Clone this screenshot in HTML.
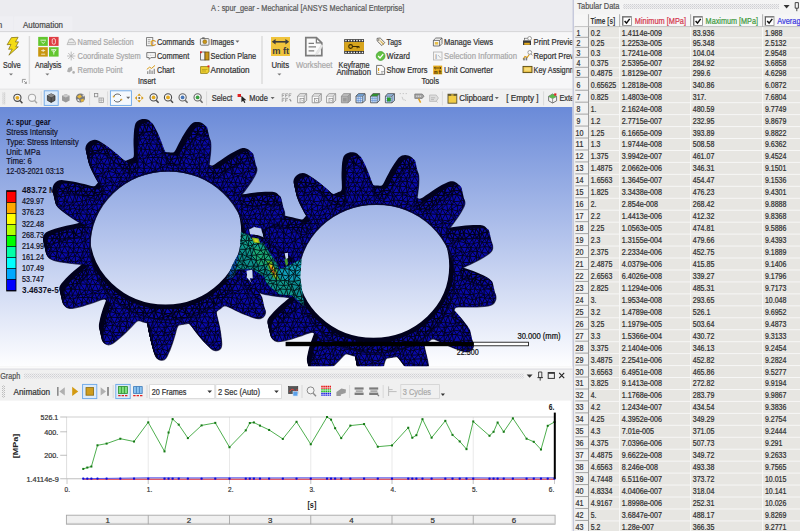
<!DOCTYPE html>
<html><head><meta charset="utf-8"><title>A : spur_gear - Mechanical</title>
<style>
html,body{margin:0;padding:0;background:#f0f0f0;overflow:hidden}
body{width:800px;height:531px;font-family:"Liberation Sans", sans-serif;}
svg{display:block;font-family:"Liberation Sans",sans-serif}
text{white-space:pre}
</style></head><body>
<svg width="800" height="531" viewBox="0 0 800 531">
<defs>
<pattern id="grip" width="2" height="2" patternUnits="userSpaceOnUse"><rect width="2" height="2" fill="#f0f0f0"/><rect width="1" height="1" fill="#d0d0d4"/><rect x="1" y="1" width="1" height="1" fill="#dcdce0"/></pattern>
<pattern id="grip2" width="2" height="2" patternUnits="userSpaceOnUse"><rect width="1" height="1" fill="#bdbdbd"/><rect x="1" y="1" width="1" height="1" fill="#d0d0d0"/></pattern>
<linearGradient id="sky" x1="0" y1="0" x2="0" y2="1"><stop offset="0" stop-color="#6a8ad8"/><stop offset="0.5" stop-color="#b3c3ec"/><stop offset="1" stop-color="#fefeff"/></linearGradient>
<clipPath id="vclip"><rect x="0" y="107.0" width="572.5" height="259.6"/></clipPath>
<pattern id="mesh" width="70" height="70" patternUnits="userSpaceOnUse"><rect width="70" height="70" fill="#0909a8"/><path d="M-6.1 -3.6L-0.6 -5.1M-6.1 -3.6L-0.5 -1.1M-6.1 -3.6L-5.7 0.3M-0.6 -5.1L3.1 -5.0M-0.6 -5.1L5.1 -1.3M-0.6 -5.1L-0.5 -1.1M3.1 -5.0L9.3 -4.7M3.1 -5.0L9.4 -0.4M3.1 -5.0L5.1 -1.3M9.3 -4.7L13.1 -4.7M9.3 -4.7L12.6 0.0M9.3 -4.7L9.4 -0.4M13.1 -4.7L17.1 -5.4M13.1 -4.7L17.2 -0.2M13.1 -4.7L12.6 0.0M17.1 -5.4L22.1 -5.0M17.1 -5.4L22.0 -1.3M17.1 -5.4L17.2 -0.2M22.1 -5.0L26.6 -6.1M22.1 -5.0L27.8 1.0M22.1 -5.0L22.0 -1.3M26.6 -6.1L32.1 -5.5M26.6 -6.1L31.5 -0.9M26.6 -6.1L27.8 1.0M32.1 -5.5L37.6 -4.6M32.1 -5.5L37.7 1.4M32.1 -5.5L31.5 -0.9M37.6 -4.6L42.8 -4.2M37.6 -4.6L42.2 -0.3M37.6 -4.6L37.7 1.4M42.8 -4.2L47.3 -3.5M42.8 -4.2L48.1 -1.4M42.8 -4.2L42.2 -0.3M47.3 -3.5L51.0 -5.2M47.3 -3.5L52.4 -0.6M47.3 -3.5L48.1 -1.4M51.0 -5.2L57.5 -5.7M51.0 -5.2L54.9 -1.2M51.0 -5.2L52.4 -0.6M57.5 -5.7L61.4 -4.2M57.5 -5.7L60.1 1.0M57.5 -5.7L54.9 -1.2M61.4 -4.2L63.9 -3.6M61.4 -4.2L64.3 0.3M61.4 -4.2L60.1 1.0M63.9 -3.6L69.4 -5.1M63.9 -3.6L69.5 -1.1M63.9 -3.6L64.3 0.3M69.4 -5.1L73.1 -5.0M69.4 -5.1L75.1 -1.3M69.4 -5.1L69.5 -1.1M-5.7 0.3L-0.5 -1.1M-5.7 0.3L-1.5 4.9M-5.7 0.3L-8.4 5.2M-0.5 -1.1L5.1 -1.3M-0.5 -1.1L2.8 4.3M-0.5 -1.1L-1.5 4.9M5.1 -1.3L9.4 -0.4M5.1 -1.3L7.1 3.3M5.1 -1.3L2.8 4.3M9.4 -0.4L12.6 0.0M9.4 -0.4L10.3 3.8M9.4 -0.4L7.1 3.3M12.6 0.0L17.2 -0.2M12.6 0.0L16.9 4.4M12.6 0.0L10.3 3.8M17.2 -0.2L22.0 -1.3M17.2 -0.2L20.4 4.9M17.2 -0.2L16.9 4.4M22.0 -1.3L27.8 1.0M22.0 -1.3L25.5 4.0M22.0 -1.3L20.4 4.9M27.8 1.0L31.5 -0.9M27.8 1.0L31.2 5.3M27.8 1.0L25.5 4.0M31.5 -0.9L37.7 1.4M31.5 -0.9L34.2 4.9M31.5 -0.9L31.2 5.3M37.7 1.4L42.2 -0.3M37.7 1.4L39.7 5.8M37.7 1.4L34.2 4.9M42.2 -0.3L48.1 -1.4M42.2 -0.3L45.0 4.0M42.2 -0.3L39.7 5.8M48.1 -1.4L52.4 -0.6M48.1 -1.4L50.5 3.5M48.1 -1.4L45.0 4.0M52.4 -0.6L54.9 -1.2M52.4 -0.6L53.4 5.5M52.4 -0.6L50.5 3.5M54.9 -1.2L60.1 1.0M54.9 -1.2L57.3 4.6M54.9 -1.2L53.4 5.5M60.1 1.0L64.3 0.3M60.1 1.0L61.6 5.2M60.1 1.0L57.3 4.6M64.3 0.3L69.5 -1.1M64.3 0.3L68.5 4.9M64.3 0.3L61.6 5.2M69.5 -1.1L75.1 -1.3M69.5 -1.1L72.8 4.3M69.5 -1.1L68.5 4.9M-1.5 4.9L2.8 4.3M-1.5 4.9L1.2 8.8M-1.5 4.9L-6.0 9.2M2.8 4.3L7.1 3.3M2.8 4.3L5.3 9.6M2.8 4.3L1.2 8.8M7.1 3.3L10.3 3.8M7.1 3.3L9.6 9.2M7.1 3.3L5.3 9.6M10.3 3.8L16.9 4.4M10.3 3.8L15.0 10.7M10.3 3.8L9.6 9.2M16.9 4.4L20.4 4.9M16.9 4.4L18.6 9.8M16.9 4.4L15.0 10.7M20.4 4.9L25.5 4.0M20.4 4.9L22.0 10.0M20.4 4.9L18.6 9.8M25.5 4.0L31.2 5.3M25.5 4.0L28.5 10.9M25.5 4.0L22.0 10.0M31.2 5.3L34.2 4.9M31.2 5.3L33.7 8.7M31.2 5.3L28.5 10.9M34.2 4.9L39.7 5.8M34.2 4.9L37.0 9.9M34.2 4.9L33.7 8.7M39.7 5.8L45.0 4.0M39.7 5.8L40.5 9.2M39.7 5.8L37.0 9.9M45.0 4.0L50.5 3.5M45.0 4.0L45.6 8.2M45.0 4.0L40.5 9.2M50.5 3.5L53.4 5.5M50.5 3.5L50.0 10.2M50.5 3.5L45.6 8.2M53.4 5.5L57.3 4.6M53.4 5.5L54.9 8.6M53.4 5.5L50.0 10.2M57.3 4.6L61.6 5.2M57.3 4.6L60.3 10.5M57.3 4.6L54.9 8.6M61.6 5.2L68.5 4.9M61.6 5.2L64.0 9.2M61.6 5.2L60.3 10.5M68.5 4.9L72.8 4.3M68.5 4.9L71.2 8.8M68.5 4.9L64.0 9.2M72.8 4.3L77.1 3.3M72.8 4.3L75.3 9.6M72.8 4.3L71.2 8.8M-6.0 9.2L1.2 8.8M-6.0 9.2L-1.2 14.9M-6.0 9.2L-5.8 14.9M1.2 8.8L5.3 9.6M1.2 8.8L2.5 15.2M1.2 8.8L-1.2 14.9M5.3 9.6L9.6 9.2M5.3 9.6L8.0 15.1M5.3 9.6L2.5 15.2M9.6 9.2L15.0 10.7M9.6 9.2L11.0 13.7M9.6 9.2L8.0 15.1M15.0 10.7L18.6 9.8M15.0 10.7L15.9 15.2M15.0 10.7L11.0 13.7M18.6 9.8L22.0 10.0M18.6 9.8L22.4 12.9M18.6 9.8L15.9 15.2M22.0 10.0L28.5 10.9M22.0 10.0L24.7 13.2M22.0 10.0L22.4 12.9M28.5 10.9L33.7 8.7M28.5 10.9L29.5 14.0M28.5 10.9L24.7 13.2M33.7 8.7L37.0 9.9M33.7 8.7L35.3 13.3M33.7 8.7L29.5 14.0M37.0 9.9L40.5 9.2M37.0 9.9L38.1 13.8M37.0 9.9L35.3 13.3M40.5 9.2L45.6 8.2M40.5 9.2L43.9 14.2M40.5 9.2L38.1 13.8M45.6 8.2L50.0 10.2M45.6 8.2L50.4 14.6M45.6 8.2L43.9 14.2M50.0 10.2L54.9 8.6M50.0 10.2L53.7 14.4M50.0 10.2L50.4 14.6M54.9 8.6L60.3 10.5M54.9 8.6L58.9 12.6M54.9 8.6L53.7 14.4M60.3 10.5L64.0 9.2M60.3 10.5L64.2 14.9M60.3 10.5L58.9 12.6M64.0 9.2L71.2 8.8M64.0 9.2L68.8 14.9M64.0 9.2L64.2 14.9M71.2 8.8L75.3 9.6M71.2 8.8L72.5 15.2M71.2 8.8L68.8 14.9M-1.2 14.9L2.5 15.2M-1.2 14.9L-0.3 18.4M-1.2 14.9L-5.2 17.9M2.5 15.2L8.0 15.1M2.5 15.2L3.4 19.1M2.5 15.2L-0.3 18.4M8.0 15.1L11.0 13.7M8.0 15.1L8.0 17.3M8.0 15.1L3.4 19.1M11.0 13.7L15.9 15.2M11.0 13.7L13.1 17.6M11.0 13.7L8.0 17.3M15.9 15.2L22.4 12.9M15.9 15.2L18.2 17.3M15.9 15.2L13.1 17.6M22.4 12.9L24.7 13.2M22.4 12.9L21.8 17.6M22.4 12.9L18.2 17.3M24.7 13.2L29.5 14.0M24.7 13.2L26.8 18.2M24.7 13.2L21.8 17.6M29.5 14.0L35.3 13.3M29.5 14.0L31.2 19.8M29.5 14.0L26.8 18.2M35.3 13.3L38.1 13.8M35.3 13.3L37.7 17.6M35.3 13.3L31.2 19.8M38.1 13.8L43.9 14.2M38.1 13.8L41.2 18.2M38.1 13.8L37.7 17.6M43.9 14.2L50.4 14.6M43.9 14.2L46.2 17.5M43.9 14.2L41.2 18.2M50.4 14.6L53.7 14.4M50.4 14.6L52.4 20.2M50.4 14.6L46.2 17.5M53.7 14.4L58.9 12.6M53.7 14.4L55.9 18.6M53.7 14.4L52.4 20.2M58.9 12.6L64.2 14.9M58.9 12.6L59.4 17.4M58.9 12.6L55.9 18.6M64.2 14.9L68.8 14.9M64.2 14.9L64.8 17.9M64.2 14.9L59.4 17.4M68.8 14.9L72.5 15.2M68.8 14.9L69.7 18.4M68.8 14.9L64.8 17.9M72.5 15.2L78.0 15.1M72.5 15.2L73.4 19.1M72.5 15.2L69.7 18.4M-5.2 17.9L-0.3 18.4M-5.2 17.9L-2.8 21.9M-5.2 17.9L-7.8 23.4M-0.3 18.4L3.4 19.1M-0.3 18.4L3.3 22.3M-0.3 18.4L-2.8 21.9M3.4 19.1L8.0 17.3M3.4 19.1L5.5 24.7M3.4 19.1L3.3 22.3M8.0 17.3L13.1 17.6M8.0 17.3L11.8 22.2M8.0 17.3L5.5 24.7M13.1 17.6L18.2 17.3M13.1 17.6L16.5 21.9M13.1 17.6L11.8 22.2M18.2 17.3L21.8 17.6M18.2 17.3L21.1 24.8M18.2 17.3L16.5 21.9M21.8 17.6L26.8 18.2M21.8 17.6L26.8 23.9M21.8 17.6L21.1 24.8M26.8 18.2L31.2 19.8M26.8 18.2L29.6 22.9M26.8 18.2L26.8 23.9M31.2 19.8L37.7 17.6M31.2 19.8L34.0 24.2M31.2 19.8L29.6 22.9M37.7 17.6L41.2 18.2M37.7 17.6L39.8 24.2M37.7 17.6L34.0 24.2M41.2 18.2L46.2 17.5M41.2 18.2L43.8 22.5M41.2 18.2L39.8 24.2M46.2 17.5L52.4 20.2M46.2 17.5L50.0 24.8M46.2 17.5L43.8 22.5M52.4 20.2L55.9 18.6M52.4 20.2L54.8 24.3M52.4 20.2L50.0 24.8M55.9 18.6L59.4 17.4M55.9 18.6L59.3 24.1M55.9 18.6L54.8 24.3M59.4 17.4L64.8 17.9M59.4 17.4L62.2 23.4M59.4 17.4L59.3 24.1M64.8 17.9L69.7 18.4M64.8 17.9L67.2 21.9M64.8 17.9L62.2 23.4M69.7 18.4L73.4 19.1M69.7 18.4L73.3 22.3M69.7 18.4L67.2 21.9M-2.8 21.9L3.3 22.3M-2.8 21.9L-1.5 27.3M-2.8 21.9L-5.2 28.9M3.3 22.3L5.5 24.7M3.3 22.3L3.9 28.6M3.3 22.3L-1.5 27.3M5.5 24.7L11.8 22.2M5.5 24.7L10.7 27.8M5.5 24.7L3.9 28.6M11.8 22.2L16.5 21.9M11.8 22.2L15.3 29.5M11.8 22.2L10.7 27.8M16.5 21.9L21.1 24.8M16.5 21.9L20.1 27.6M16.5 21.9L15.3 29.5M21.1 24.8L26.8 23.9M21.1 24.8L22.5 27.2M21.1 24.8L20.1 27.6M26.8 23.9L29.6 22.9M26.8 23.9L27.1 27.1M26.8 23.9L22.5 27.2M29.6 22.9L34.0 24.2M29.6 22.9L33.0 29.2M29.6 22.9L27.1 27.1M34.0 24.2L39.8 24.2M34.0 24.2L38.4 27.9M34.0 24.2L33.0 29.2M39.8 24.2L43.8 22.5M39.8 24.2L42.5 28.9M39.8 24.2L38.4 27.9M43.8 22.5L50.0 24.8M43.8 22.5L45.4 28.5M43.8 22.5L42.5 28.9M50.0 24.8L54.8 24.3M50.0 24.8L52.6 28.9M50.0 24.8L45.4 28.5M54.8 24.3L59.3 24.1M54.8 24.3L56.8 27.9M54.8 24.3L52.6 28.9M59.3 24.1L62.2 23.4M59.3 24.1L59.7 28.9M59.3 24.1L56.8 27.9M62.2 23.4L67.2 21.9M62.2 23.4L64.8 28.9M62.2 23.4L59.7 28.9M67.2 21.9L73.3 22.3M67.2 21.9L68.5 27.3M67.2 21.9L64.8 28.9M73.3 22.3L75.5 24.7M73.3 22.3L73.9 28.6M73.3 22.3L68.5 27.3M-5.2 28.9L-1.5 27.3M-5.2 28.9L-3.1 32.9M-5.2 28.9L-7.8 32.0M-1.5 27.3L3.9 28.6M-1.5 27.3L3.8 32.3M-1.5 27.3L-3.1 32.9M3.9 28.6L10.7 27.8M3.9 28.6L6.7 34.0M3.9 28.6L3.8 32.3M10.7 27.8L15.3 29.5M10.7 27.8L12.4 31.7M10.7 27.8L6.7 34.0M15.3 29.5L20.1 27.6M15.3 29.5L15.2 31.6M15.3 29.5L12.4 31.7M20.1 27.6L22.5 27.2M20.1 27.6L22.2 33.6M20.1 27.6L15.2 31.6M22.5 27.2L27.1 27.1M22.5 27.2L24.6 33.7M22.5 27.2L22.2 33.6M27.1 27.1L33.0 29.2M27.1 27.1L31.8 33.2M27.1 27.1L24.6 33.7M33.0 29.2L38.4 27.9M33.0 29.2L34.5 32.8M33.0 29.2L31.8 33.2M38.4 27.9L42.5 28.9M38.4 27.9L38.5 31.2M38.4 27.9L34.5 32.8M42.5 28.9L45.4 28.5M42.5 28.9L45.8 33.1M42.5 28.9L38.5 31.2M45.4 28.5L52.6 28.9M45.4 28.5L49.1 34.0M45.4 28.5L45.8 33.1M52.6 28.9L56.8 27.9M52.6 28.9L53.5 33.8M52.6 28.9L49.1 34.0M56.8 27.9L59.7 28.9M56.8 27.9L59.3 31.8M56.8 27.9L53.5 33.8M59.7 28.9L64.8 28.9M59.7 28.9L62.2 32.0M59.7 28.9L59.3 31.8M64.8 28.9L68.5 27.3M64.8 28.9L66.9 32.9M64.8 28.9L62.2 32.0M68.5 27.3L73.9 28.6M68.5 27.3L73.8 32.3M68.5 27.3L66.9 32.9M-3.1 32.9L3.8 32.3M-3.1 32.9L-0.7 37.1M-3.1 32.9L-5.4 36.6M3.8 32.3L6.7 34.0M3.8 32.3L3.5 38.6M3.8 32.3L-0.7 37.1M6.7 34.0L12.4 31.7M6.7 34.0L8.9 37.2M6.7 34.0L3.5 38.6M12.4 31.7L15.2 31.6M12.4 31.7L14.3 38.6M12.4 31.7L8.9 37.2M15.2 31.6L22.2 33.6M15.2 31.6L18.4 38.6M15.2 31.6L14.3 38.6M22.2 33.6L24.6 33.7M22.2 33.6L23.3 37.4M22.2 33.6L18.4 38.6M24.6 33.7L31.8 33.2M24.6 33.7L28.1 35.9M24.6 33.7L23.3 37.4M31.8 33.2L34.5 32.8M31.8 33.2L32.5 36.4M31.8 33.2L28.1 35.9M34.5 32.8L38.5 31.2M34.5 32.8L35.8 38.3M34.5 32.8L32.5 36.4M38.5 31.2L45.8 33.1M38.5 31.2L41.0 37.3M38.5 31.2L35.8 38.3M45.8 33.1L49.1 34.0M45.8 33.1L47.4 37.5M45.8 33.1L41.0 37.3M49.1 34.0L53.5 33.8M49.1 34.0L50.8 37.4M49.1 34.0L47.4 37.5M53.5 33.8L59.3 31.8M53.5 33.8L56.2 38.2M53.5 33.8L50.8 37.4M59.3 31.8L62.2 32.0M59.3 31.8L59.5 37.5M59.3 31.8L56.2 38.2M62.2 32.0L66.9 32.9M62.2 32.0L64.6 36.6M62.2 32.0L59.5 37.5M66.9 32.9L73.8 32.3M66.9 32.9L69.3 37.1M66.9 32.9L64.6 36.6M73.8 32.3L76.7 34.0M73.8 32.3L73.5 38.6M73.8 32.3L69.3 37.1M-5.4 36.6L-0.7 37.1M-5.4 36.6L-1.5 43.2M-5.4 36.6L-8.3 42.5M-0.7 37.1L3.5 38.6M-0.7 37.1L3.2 42.0M-0.7 37.1L-1.5 43.2M3.5 38.6L8.9 37.2M3.5 38.6L7.2 42.8M3.5 38.6L3.2 42.0M8.9 37.2L14.3 38.6M8.9 37.2L12.9 41.8M8.9 37.2L7.2 42.8M14.3 38.6L18.4 38.6M14.3 38.6L16.7 42.0M14.3 38.6L12.9 41.8M18.4 38.6L23.3 37.4M18.4 38.6L21.0 42.6M18.4 38.6L16.7 42.0M23.3 37.4L28.1 35.9M23.3 37.4L25.5 42.1M23.3 37.4L21.0 42.6M28.1 35.9L32.5 36.4M28.1 35.9L30.3 43.4M28.1 35.9L25.5 42.1M32.5 36.4L35.8 38.3M32.5 36.4L35.6 43.2M32.5 36.4L30.3 43.4M35.8 38.3L41.0 37.3M35.8 38.3L41.0 41.3M35.8 38.3L35.6 43.2M41.0 37.3L47.4 37.5M41.0 37.3L44.5 43.4M41.0 37.3L41.0 41.3M47.4 37.5L50.8 37.4M47.4 37.5L50.0 40.9M47.4 37.5L44.5 43.4M50.8 37.4L56.2 38.2M50.8 37.4L52.5 41.8M50.8 37.4L50.0 40.9M56.2 38.2L59.5 37.5M56.2 38.2L57.0 41.2M56.2 38.2L52.5 41.8M59.5 37.5L64.6 36.6M59.5 37.5L61.7 42.5M59.5 37.5L57.0 41.2M64.6 36.6L69.3 37.1M64.6 36.6L68.5 43.2M64.6 36.6L61.7 42.5M69.3 37.1L73.5 38.6M69.3 37.1L73.2 42.0M69.3 37.1L68.5 43.2M-1.5 43.2L3.2 42.0M-1.5 43.2L-1.1 47.3M-1.5 43.2L-3.8 48.1M3.2 42.0L7.2 42.8M3.2 42.0L5.2 45.6M3.2 42.0L-1.1 47.3M7.2 42.8L12.9 41.8M7.2 42.8L10.5 48.1M7.2 42.8L5.2 45.6M12.9 41.8L16.7 42.0M12.9 41.8L13.1 48.1M12.9 41.8L10.5 48.1M16.7 42.0L21.0 42.6M16.7 42.0L18.4 46.6M16.7 42.0L13.1 48.1M21.0 42.6L25.5 42.1M21.0 42.6L24.8 47.7M21.0 42.6L18.4 46.6M25.5 42.1L30.3 43.4M25.5 42.1L27.0 46.5M25.5 42.1L24.8 47.7M30.3 43.4L35.6 43.2M30.3 43.4L32.7 46.2M30.3 43.4L27.0 46.5M35.6 43.2L41.0 41.3M35.6 43.2L36.4 46.1M35.6 43.2L32.7 46.2M41.0 41.3L44.5 43.4M41.0 41.3L42.7 45.2M41.0 41.3L36.4 46.1M44.5 43.4L50.0 40.9M44.5 43.4L46.8 46.5M44.5 43.4L42.7 45.2M50.0 40.9L52.5 41.8M50.0 40.9L49.8 46.1M50.0 40.9L46.8 46.5M52.5 41.8L57.0 41.2M52.5 41.8L56.4 46.7M52.5 41.8L49.8 46.1M57.0 41.2L61.7 42.5M57.0 41.2L59.3 48.2M57.0 41.2L56.4 46.7M61.7 42.5L68.5 43.2M61.7 42.5L66.2 48.1M61.7 42.5L59.3 48.2M68.5 43.2L73.2 42.0M68.5 43.2L68.9 47.3M68.5 43.2L66.2 48.1M73.2 42.0L77.2 42.8M73.2 42.0L75.2 45.6M73.2 42.0L68.9 47.3M-3.8 48.1L-1.1 47.3M-3.8 48.1L-2.2 52.6M-3.8 48.1L-7.1 50.8M-1.1 47.3L5.2 45.6M-1.1 47.3L1.1 50.6M-1.1 47.3L-2.2 52.6M5.2 45.6L10.5 48.1M5.2 45.6L5.6 52.2M5.2 45.6L1.1 50.6M10.5 48.1L13.1 48.1M10.5 48.1L11.0 50.2M10.5 48.1L5.6 52.2M13.1 48.1L18.4 46.6M13.1 48.1L16.1 52.6M13.1 48.1L11.0 50.2M18.4 46.6L24.8 47.7M18.4 46.6L22.0 50.6M18.4 46.6L16.1 52.6M24.8 47.7L27.0 46.5M24.8 47.7L24.6 52.6M24.8 47.7L22.0 50.6M27.0 46.5L32.7 46.2M27.0 46.5L30.6 52.0M27.0 46.5L24.6 52.6M32.7 46.2L36.4 46.1M32.7 46.2L33.7 50.0M32.7 46.2L30.6 52.0M36.4 46.1L42.7 45.2M36.4 46.1L40.2 51.1M36.4 46.1L33.7 50.0M42.7 45.2L46.8 46.5M42.7 45.2L43.0 52.7M42.7 45.2L40.2 51.1M46.8 46.5L49.8 46.1M46.8 46.5L49.4 52.3M46.8 46.5L43.0 52.7M49.8 46.1L56.4 46.7M49.8 46.1L52.4 52.4M49.8 46.1L49.4 52.3M56.4 46.7L59.3 48.2M56.4 46.7L57.0 52.5M56.4 46.7L52.4 52.4M59.3 48.2L66.2 48.1M59.3 48.2L62.9 50.8M59.3 48.2L57.0 52.5M66.2 48.1L68.9 47.3M66.2 48.1L67.8 52.6M66.2 48.1L62.9 50.8M68.9 47.3L75.2 45.6M68.9 47.3L71.1 50.6M68.9 47.3L67.8 52.6M-2.2 52.6L1.1 50.6M-2.2 52.6L-0.7 54.9M-2.2 52.6L-5.0 56.0M1.1 50.6L5.6 52.2M1.1 50.6L4.7 55.2M1.1 50.6L-0.7 54.9M5.6 52.2L11.0 50.2M5.6 52.2L8.1 55.0M5.6 52.2L4.7 55.2M11.0 50.2L16.1 52.6M11.0 50.2L12.6 55.1M11.0 50.2L8.1 55.0M16.1 52.6L22.0 50.6M16.1 52.6L18.1 55.4M16.1 52.6L12.6 55.1M22.0 50.6L24.6 52.6M22.0 50.6L24.1 55.4M22.0 50.6L18.1 55.4M24.6 52.6L30.6 52.0M24.6 52.6L28.0 55.0M24.6 52.6L24.1 55.4M30.6 52.0L33.7 50.0M30.6 52.0L32.2 54.5M30.6 52.0L28.0 55.0M33.7 50.0L40.2 51.1M33.7 50.0L36.6 54.5M33.7 50.0L32.2 54.5M40.2 51.1L43.0 52.7M40.2 51.1L42.7 56.2M40.2 51.1L36.6 54.5M43.0 52.7L49.4 52.3M43.0 52.7L45.7 55.9M43.0 52.7L42.7 56.2M49.4 52.3L52.4 52.4M49.4 52.3L52.7 54.8M49.4 52.3L45.7 55.9M52.4 52.4L57.0 52.5M52.4 52.4L57.0 55.8M52.4 52.4L52.7 54.8M57.0 52.5L62.9 50.8M57.0 52.5L60.7 57.0M57.0 52.5L57.0 55.8M62.9 50.8L67.8 52.6M62.9 50.8L65.0 56.0M62.9 50.8L60.7 57.0M67.8 52.6L71.1 50.6M67.8 52.6L69.3 54.9M67.8 52.6L65.0 56.0M71.1 50.6L75.6 52.2M71.1 50.6L74.7 55.2M71.1 50.6L69.3 54.9M-5.0 56.0L-0.7 54.9M-5.0 56.0L-3.1 62.1M-5.0 56.0L-5.5 60.8M-0.7 54.9L4.7 55.2M-0.7 54.9L2.9 62.2M-0.7 54.9L-3.1 62.1M4.7 55.2L8.1 55.0M4.7 55.2L6.5 61.7M4.7 55.2L2.9 62.2M8.1 55.0L12.6 55.1M8.1 55.0L12.3 61.1M8.1 55.0L6.5 61.7M12.6 55.1L18.1 55.4M12.6 55.1L16.0 60.2M12.6 55.1L12.3 61.1M18.1 55.4L24.1 55.4M18.1 55.4L19.6 59.5M18.1 55.4L16.0 60.2M24.1 55.4L28.0 55.0M24.1 55.4L24.3 61.4M24.1 55.4L19.6 59.5M28.0 55.0L32.2 54.5M28.0 55.0L29.6 59.6M28.0 55.0L24.3 61.4M32.2 54.5L36.6 54.5M32.2 54.5L33.7 61.7M32.2 54.5L29.6 59.6M36.6 54.5L42.7 56.2M36.6 54.5L40.8 61.2M36.6 54.5L33.7 61.7M42.7 56.2L45.7 55.9M42.7 56.2L43.7 59.9M42.7 56.2L40.8 61.2M45.7 55.9L52.7 54.8M45.7 55.9L48.4 60.5M45.7 55.9L43.7 59.9M52.7 54.8L57.0 55.8M52.7 54.8L52.6 60.5M52.7 54.8L48.4 60.5M57.0 55.8L60.7 57.0M57.0 55.8L57.6 62.1M57.0 55.8L52.6 60.5M60.7 57.0L65.0 56.0M60.7 57.0L64.5 60.8M60.7 57.0L57.6 62.1M65.0 56.0L69.3 54.9M65.0 56.0L66.9 62.1M65.0 56.0L64.5 60.8M69.3 54.9L74.7 55.2M69.3 54.9L72.9 62.2M69.3 54.9L66.9 62.1M-3.1 62.1L2.9 62.2M-3.1 62.1L-0.6 64.9M-3.1 62.1L-6.1 66.4M2.9 62.2L6.5 61.7M2.9 62.2L3.1 65.0M2.9 62.2L-0.6 64.9M6.5 61.7L12.3 61.1M6.5 61.7L9.3 65.3M6.5 61.7L3.1 65.0M12.3 61.1L16.0 60.2M12.3 61.1L13.1 65.3M12.3 61.1L9.3 65.3M16.0 60.2L19.6 59.5M16.0 60.2L17.1 64.6M16.0 60.2L13.1 65.3M19.6 59.5L24.3 61.4M19.6 59.5L22.1 65.0M19.6 59.5L17.1 64.6M24.3 61.4L29.6 59.6M24.3 61.4L26.6 63.9M24.3 61.4L22.1 65.0M29.6 59.6L33.7 61.7M29.6 59.6L32.1 64.5M29.6 59.6L26.6 63.9M33.7 61.7L40.8 61.2M33.7 61.7L37.6 65.4M33.7 61.7L32.1 64.5M40.8 61.2L43.7 59.9M40.8 61.2L42.8 65.8M40.8 61.2L37.6 65.4M43.7 59.9L48.4 60.5M43.7 59.9L47.3 66.5M43.7 59.9L42.8 65.8M48.4 60.5L52.6 60.5M48.4 60.5L51.0 64.8M48.4 60.5L47.3 66.5M52.6 60.5L57.6 62.1M52.6 60.5L57.5 64.3M52.6 60.5L51.0 64.8M57.6 62.1L64.5 60.8M57.6 62.1L61.4 65.8M57.6 62.1L57.5 64.3M64.5 60.8L66.9 62.1M64.5 60.8L63.9 66.4M64.5 60.8L61.4 65.8M66.9 62.1L72.9 62.2M66.9 62.1L69.4 64.9M66.9 62.1L63.9 66.4M72.9 62.2L76.5 61.7M72.9 62.2L73.1 65.0M72.9 62.2L69.4 64.9M-6.1 66.4L-0.6 64.9M-6.1 66.4L-5.7 70.3M-6.1 66.4L-9.9 71.0M-0.6 64.9L3.1 65.0M-0.6 64.9L-0.5 68.9M-0.6 64.9L-5.7 70.3M3.1 65.0L9.3 65.3M3.1 65.0L5.1 68.7M3.1 65.0L-0.5 68.9M9.3 65.3L13.1 65.3M9.3 65.3L9.4 69.6M9.3 65.3L5.1 68.7M13.1 65.3L17.1 64.6M13.1 65.3L12.6 70.0M13.1 65.3L9.4 69.6M17.1 64.6L22.1 65.0M17.1 64.6L17.2 69.8M17.1 64.6L12.6 70.0M22.1 65.0L26.6 63.9M22.1 65.0L22.0 68.7M22.1 65.0L17.2 69.8M26.6 63.9L32.1 64.5M26.6 63.9L27.8 71.0M26.6 63.9L22.0 68.7M32.1 64.5L37.6 65.4M32.1 64.5L31.5 69.1M32.1 64.5L27.8 71.0M37.6 65.4L42.8 65.8M37.6 65.4L37.7 71.4M37.6 65.4L31.5 69.1M42.8 65.8L47.3 66.5M42.8 65.8L42.2 69.7M42.8 65.8L37.7 71.4M47.3 66.5L51.0 64.8M47.3 66.5L48.1 68.6M47.3 66.5L42.2 69.7M51.0 64.8L57.5 64.3M51.0 64.8L52.4 69.4M51.0 64.8L48.1 68.6M57.5 64.3L61.4 65.8M57.5 64.3L54.9 68.8M57.5 64.3L52.4 69.4M61.4 65.8L63.9 66.4M61.4 65.8L60.1 71.0M61.4 65.8L54.9 68.8M63.9 66.4L69.4 64.9M63.9 66.4L64.3 70.3M63.9 66.4L60.1 71.0M69.4 64.9L73.1 65.0M69.4 64.9L69.5 68.9M69.4 64.9L64.3 70.3M-5.7 70.3L-0.5 68.9M-5.7 70.3L2.8 74.3M-5.7 70.3L-1.5 74.9M-0.5 68.9L5.1 68.7M-0.5 68.9L7.1 73.3M-0.5 68.9L2.8 74.3M5.1 68.7L9.4 69.6M5.1 68.7L10.3 73.8M5.1 68.7L7.1 73.3M9.4 69.6L12.6 70.0M9.4 69.6L16.9 74.4M9.4 69.6L10.3 73.8M12.6 70.0L17.2 69.8M12.6 70.0L20.4 74.9M12.6 70.0L16.9 74.4M17.2 69.8L22.0 68.7M17.2 69.8L25.5 74.0M17.2 69.8L20.4 74.9M22.0 68.7L27.8 71.0M22.0 68.7L31.2 75.3M22.0 68.7L25.5 74.0M27.8 71.0L31.5 69.1M27.8 71.0L34.2 74.9M27.8 71.0L31.2 75.3M31.5 69.1L37.7 71.4M31.5 69.1L39.7 75.8M31.5 69.1L34.2 74.9M37.7 71.4L42.2 69.7M37.7 71.4L45.0 74.0M37.7 71.4L39.7 75.8M42.2 69.7L48.1 68.6M42.2 69.7L50.5 73.5M42.2 69.7L45.0 74.0M48.1 68.6L52.4 69.4M48.1 68.6L53.4 75.5M48.1 68.6L50.5 73.5M52.4 69.4L54.9 68.8M52.4 69.4L57.3 74.6M52.4 69.4L53.4 75.5M54.9 68.8L60.1 71.0M54.9 68.8L61.6 75.2M54.9 68.8L57.3 74.6M60.1 71.0L64.3 70.3M60.1 71.0L68.5 74.9M60.1 71.0L61.6 75.2M64.3 70.3L69.5 68.9M64.3 70.3L72.8 74.3M64.3 70.3L68.5 74.9M69.5 68.9L75.1 68.7M69.5 68.9L77.1 73.3M69.5 68.9L72.8 74.3" stroke="#000014" stroke-width="0.88" fill="none"/></pattern>
<pattern id="meshd" width="70" height="70" patternUnits="userSpaceOnUse"><rect width="70" height="70" fill="#0909a8"/><path d="M-6.1 -3.6L-0.6 -5.1M-6.1 -3.6L-0.5 -1.1M-6.1 -3.6L-5.7 0.3M-0.6 -5.1L3.1 -5.0M-0.6 -5.1L5.1 -1.3M-0.6 -5.1L-0.5 -1.1M3.1 -5.0L9.3 -4.7M3.1 -5.0L9.4 -0.4M3.1 -5.0L5.1 -1.3M9.3 -4.7L13.1 -4.7M9.3 -4.7L12.6 0.0M9.3 -4.7L9.4 -0.4M13.1 -4.7L17.1 -5.4M13.1 -4.7L17.2 -0.2M13.1 -4.7L12.6 0.0M17.1 -5.4L22.1 -5.0M17.1 -5.4L22.0 -1.3M17.1 -5.4L17.2 -0.2M22.1 -5.0L26.6 -6.1M22.1 -5.0L27.8 1.0M22.1 -5.0L22.0 -1.3M26.6 -6.1L32.1 -5.5M26.6 -6.1L31.5 -0.9M26.6 -6.1L27.8 1.0M32.1 -5.5L37.6 -4.6M32.1 -5.5L37.7 1.4M32.1 -5.5L31.5 -0.9M37.6 -4.6L42.8 -4.2M37.6 -4.6L42.2 -0.3M37.6 -4.6L37.7 1.4M42.8 -4.2L47.3 -3.5M42.8 -4.2L48.1 -1.4M42.8 -4.2L42.2 -0.3M47.3 -3.5L51.0 -5.2M47.3 -3.5L52.4 -0.6M47.3 -3.5L48.1 -1.4M51.0 -5.2L57.5 -5.7M51.0 -5.2L54.9 -1.2M51.0 -5.2L52.4 -0.6M57.5 -5.7L61.4 -4.2M57.5 -5.7L60.1 1.0M57.5 -5.7L54.9 -1.2M61.4 -4.2L63.9 -3.6M61.4 -4.2L64.3 0.3M61.4 -4.2L60.1 1.0M63.9 -3.6L69.4 -5.1M63.9 -3.6L69.5 -1.1M63.9 -3.6L64.3 0.3M69.4 -5.1L73.1 -5.0M69.4 -5.1L75.1 -1.3M69.4 -5.1L69.5 -1.1M-5.7 0.3L-0.5 -1.1M-5.7 0.3L-1.5 4.9M-5.7 0.3L-8.4 5.2M-0.5 -1.1L5.1 -1.3M-0.5 -1.1L2.8 4.3M-0.5 -1.1L-1.5 4.9M5.1 -1.3L9.4 -0.4M5.1 -1.3L7.1 3.3M5.1 -1.3L2.8 4.3M9.4 -0.4L12.6 0.0M9.4 -0.4L10.3 3.8M9.4 -0.4L7.1 3.3M12.6 0.0L17.2 -0.2M12.6 0.0L16.9 4.4M12.6 0.0L10.3 3.8M17.2 -0.2L22.0 -1.3M17.2 -0.2L20.4 4.9M17.2 -0.2L16.9 4.4M22.0 -1.3L27.8 1.0M22.0 -1.3L25.5 4.0M22.0 -1.3L20.4 4.9M27.8 1.0L31.5 -0.9M27.8 1.0L31.2 5.3M27.8 1.0L25.5 4.0M31.5 -0.9L37.7 1.4M31.5 -0.9L34.2 4.9M31.5 -0.9L31.2 5.3M37.7 1.4L42.2 -0.3M37.7 1.4L39.7 5.8M37.7 1.4L34.2 4.9M42.2 -0.3L48.1 -1.4M42.2 -0.3L45.0 4.0M42.2 -0.3L39.7 5.8M48.1 -1.4L52.4 -0.6M48.1 -1.4L50.5 3.5M48.1 -1.4L45.0 4.0M52.4 -0.6L54.9 -1.2M52.4 -0.6L53.4 5.5M52.4 -0.6L50.5 3.5M54.9 -1.2L60.1 1.0M54.9 -1.2L57.3 4.6M54.9 -1.2L53.4 5.5M60.1 1.0L64.3 0.3M60.1 1.0L61.6 5.2M60.1 1.0L57.3 4.6M64.3 0.3L69.5 -1.1M64.3 0.3L68.5 4.9M64.3 0.3L61.6 5.2M69.5 -1.1L75.1 -1.3M69.5 -1.1L72.8 4.3M69.5 -1.1L68.5 4.9M-1.5 4.9L2.8 4.3M-1.5 4.9L1.2 8.8M-1.5 4.9L-6.0 9.2M2.8 4.3L7.1 3.3M2.8 4.3L5.3 9.6M2.8 4.3L1.2 8.8M7.1 3.3L10.3 3.8M7.1 3.3L9.6 9.2M7.1 3.3L5.3 9.6M10.3 3.8L16.9 4.4M10.3 3.8L15.0 10.7M10.3 3.8L9.6 9.2M16.9 4.4L20.4 4.9M16.9 4.4L18.6 9.8M16.9 4.4L15.0 10.7M20.4 4.9L25.5 4.0M20.4 4.9L22.0 10.0M20.4 4.9L18.6 9.8M25.5 4.0L31.2 5.3M25.5 4.0L28.5 10.9M25.5 4.0L22.0 10.0M31.2 5.3L34.2 4.9M31.2 5.3L33.7 8.7M31.2 5.3L28.5 10.9M34.2 4.9L39.7 5.8M34.2 4.9L37.0 9.9M34.2 4.9L33.7 8.7M39.7 5.8L45.0 4.0M39.7 5.8L40.5 9.2M39.7 5.8L37.0 9.9M45.0 4.0L50.5 3.5M45.0 4.0L45.6 8.2M45.0 4.0L40.5 9.2M50.5 3.5L53.4 5.5M50.5 3.5L50.0 10.2M50.5 3.5L45.6 8.2M53.4 5.5L57.3 4.6M53.4 5.5L54.9 8.6M53.4 5.5L50.0 10.2M57.3 4.6L61.6 5.2M57.3 4.6L60.3 10.5M57.3 4.6L54.9 8.6M61.6 5.2L68.5 4.9M61.6 5.2L64.0 9.2M61.6 5.2L60.3 10.5M68.5 4.9L72.8 4.3M68.5 4.9L71.2 8.8M68.5 4.9L64.0 9.2M72.8 4.3L77.1 3.3M72.8 4.3L75.3 9.6M72.8 4.3L71.2 8.8M-6.0 9.2L1.2 8.8M-6.0 9.2L-1.2 14.9M-6.0 9.2L-5.8 14.9M1.2 8.8L5.3 9.6M1.2 8.8L2.5 15.2M1.2 8.8L-1.2 14.9M5.3 9.6L9.6 9.2M5.3 9.6L8.0 15.1M5.3 9.6L2.5 15.2M9.6 9.2L15.0 10.7M9.6 9.2L11.0 13.7M9.6 9.2L8.0 15.1M15.0 10.7L18.6 9.8M15.0 10.7L15.9 15.2M15.0 10.7L11.0 13.7M18.6 9.8L22.0 10.0M18.6 9.8L22.4 12.9M18.6 9.8L15.9 15.2M22.0 10.0L28.5 10.9M22.0 10.0L24.7 13.2M22.0 10.0L22.4 12.9M28.5 10.9L33.7 8.7M28.5 10.9L29.5 14.0M28.5 10.9L24.7 13.2M33.7 8.7L37.0 9.9M33.7 8.7L35.3 13.3M33.7 8.7L29.5 14.0M37.0 9.9L40.5 9.2M37.0 9.9L38.1 13.8M37.0 9.9L35.3 13.3M40.5 9.2L45.6 8.2M40.5 9.2L43.9 14.2M40.5 9.2L38.1 13.8M45.6 8.2L50.0 10.2M45.6 8.2L50.4 14.6M45.6 8.2L43.9 14.2M50.0 10.2L54.9 8.6M50.0 10.2L53.7 14.4M50.0 10.2L50.4 14.6M54.9 8.6L60.3 10.5M54.9 8.6L58.9 12.6M54.9 8.6L53.7 14.4M60.3 10.5L64.0 9.2M60.3 10.5L64.2 14.9M60.3 10.5L58.9 12.6M64.0 9.2L71.2 8.8M64.0 9.2L68.8 14.9M64.0 9.2L64.2 14.9M71.2 8.8L75.3 9.6M71.2 8.8L72.5 15.2M71.2 8.8L68.8 14.9M-1.2 14.9L2.5 15.2M-1.2 14.9L-0.3 18.4M-1.2 14.9L-5.2 17.9M2.5 15.2L8.0 15.1M2.5 15.2L3.4 19.1M2.5 15.2L-0.3 18.4M8.0 15.1L11.0 13.7M8.0 15.1L8.0 17.3M8.0 15.1L3.4 19.1M11.0 13.7L15.9 15.2M11.0 13.7L13.1 17.6M11.0 13.7L8.0 17.3M15.9 15.2L22.4 12.9M15.9 15.2L18.2 17.3M15.9 15.2L13.1 17.6M22.4 12.9L24.7 13.2M22.4 12.9L21.8 17.6M22.4 12.9L18.2 17.3M24.7 13.2L29.5 14.0M24.7 13.2L26.8 18.2M24.7 13.2L21.8 17.6M29.5 14.0L35.3 13.3M29.5 14.0L31.2 19.8M29.5 14.0L26.8 18.2M35.3 13.3L38.1 13.8M35.3 13.3L37.7 17.6M35.3 13.3L31.2 19.8M38.1 13.8L43.9 14.2M38.1 13.8L41.2 18.2M38.1 13.8L37.7 17.6M43.9 14.2L50.4 14.6M43.9 14.2L46.2 17.5M43.9 14.2L41.2 18.2M50.4 14.6L53.7 14.4M50.4 14.6L52.4 20.2M50.4 14.6L46.2 17.5M53.7 14.4L58.9 12.6M53.7 14.4L55.9 18.6M53.7 14.4L52.4 20.2M58.9 12.6L64.2 14.9M58.9 12.6L59.4 17.4M58.9 12.6L55.9 18.6M64.2 14.9L68.8 14.9M64.2 14.9L64.8 17.9M64.2 14.9L59.4 17.4M68.8 14.9L72.5 15.2M68.8 14.9L69.7 18.4M68.8 14.9L64.8 17.9M72.5 15.2L78.0 15.1M72.5 15.2L73.4 19.1M72.5 15.2L69.7 18.4M-5.2 17.9L-0.3 18.4M-5.2 17.9L-2.8 21.9M-5.2 17.9L-7.8 23.4M-0.3 18.4L3.4 19.1M-0.3 18.4L3.3 22.3M-0.3 18.4L-2.8 21.9M3.4 19.1L8.0 17.3M3.4 19.1L5.5 24.7M3.4 19.1L3.3 22.3M8.0 17.3L13.1 17.6M8.0 17.3L11.8 22.2M8.0 17.3L5.5 24.7M13.1 17.6L18.2 17.3M13.1 17.6L16.5 21.9M13.1 17.6L11.8 22.2M18.2 17.3L21.8 17.6M18.2 17.3L21.1 24.8M18.2 17.3L16.5 21.9M21.8 17.6L26.8 18.2M21.8 17.6L26.8 23.9M21.8 17.6L21.1 24.8M26.8 18.2L31.2 19.8M26.8 18.2L29.6 22.9M26.8 18.2L26.8 23.9M31.2 19.8L37.7 17.6M31.2 19.8L34.0 24.2M31.2 19.8L29.6 22.9M37.7 17.6L41.2 18.2M37.7 17.6L39.8 24.2M37.7 17.6L34.0 24.2M41.2 18.2L46.2 17.5M41.2 18.2L43.8 22.5M41.2 18.2L39.8 24.2M46.2 17.5L52.4 20.2M46.2 17.5L50.0 24.8M46.2 17.5L43.8 22.5M52.4 20.2L55.9 18.6M52.4 20.2L54.8 24.3M52.4 20.2L50.0 24.8M55.9 18.6L59.4 17.4M55.9 18.6L59.3 24.1M55.9 18.6L54.8 24.3M59.4 17.4L64.8 17.9M59.4 17.4L62.2 23.4M59.4 17.4L59.3 24.1M64.8 17.9L69.7 18.4M64.8 17.9L67.2 21.9M64.8 17.9L62.2 23.4M69.7 18.4L73.4 19.1M69.7 18.4L73.3 22.3M69.7 18.4L67.2 21.9M-2.8 21.9L3.3 22.3M-2.8 21.9L-1.5 27.3M-2.8 21.9L-5.2 28.9M3.3 22.3L5.5 24.7M3.3 22.3L3.9 28.6M3.3 22.3L-1.5 27.3M5.5 24.7L11.8 22.2M5.5 24.7L10.7 27.8M5.5 24.7L3.9 28.6M11.8 22.2L16.5 21.9M11.8 22.2L15.3 29.5M11.8 22.2L10.7 27.8M16.5 21.9L21.1 24.8M16.5 21.9L20.1 27.6M16.5 21.9L15.3 29.5M21.1 24.8L26.8 23.9M21.1 24.8L22.5 27.2M21.1 24.8L20.1 27.6M26.8 23.9L29.6 22.9M26.8 23.9L27.1 27.1M26.8 23.9L22.5 27.2M29.6 22.9L34.0 24.2M29.6 22.9L33.0 29.2M29.6 22.9L27.1 27.1M34.0 24.2L39.8 24.2M34.0 24.2L38.4 27.9M34.0 24.2L33.0 29.2M39.8 24.2L43.8 22.5M39.8 24.2L42.5 28.9M39.8 24.2L38.4 27.9M43.8 22.5L50.0 24.8M43.8 22.5L45.4 28.5M43.8 22.5L42.5 28.9M50.0 24.8L54.8 24.3M50.0 24.8L52.6 28.9M50.0 24.8L45.4 28.5M54.8 24.3L59.3 24.1M54.8 24.3L56.8 27.9M54.8 24.3L52.6 28.9M59.3 24.1L62.2 23.4M59.3 24.1L59.7 28.9M59.3 24.1L56.8 27.9M62.2 23.4L67.2 21.9M62.2 23.4L64.8 28.9M62.2 23.4L59.7 28.9M67.2 21.9L73.3 22.3M67.2 21.9L68.5 27.3M67.2 21.9L64.8 28.9M73.3 22.3L75.5 24.7M73.3 22.3L73.9 28.6M73.3 22.3L68.5 27.3M-5.2 28.9L-1.5 27.3M-5.2 28.9L-3.1 32.9M-5.2 28.9L-7.8 32.0M-1.5 27.3L3.9 28.6M-1.5 27.3L3.8 32.3M-1.5 27.3L-3.1 32.9M3.9 28.6L10.7 27.8M3.9 28.6L6.7 34.0M3.9 28.6L3.8 32.3M10.7 27.8L15.3 29.5M10.7 27.8L12.4 31.7M10.7 27.8L6.7 34.0M15.3 29.5L20.1 27.6M15.3 29.5L15.2 31.6M15.3 29.5L12.4 31.7M20.1 27.6L22.5 27.2M20.1 27.6L22.2 33.6M20.1 27.6L15.2 31.6M22.5 27.2L27.1 27.1M22.5 27.2L24.6 33.7M22.5 27.2L22.2 33.6M27.1 27.1L33.0 29.2M27.1 27.1L31.8 33.2M27.1 27.1L24.6 33.7M33.0 29.2L38.4 27.9M33.0 29.2L34.5 32.8M33.0 29.2L31.8 33.2M38.4 27.9L42.5 28.9M38.4 27.9L38.5 31.2M38.4 27.9L34.5 32.8M42.5 28.9L45.4 28.5M42.5 28.9L45.8 33.1M42.5 28.9L38.5 31.2M45.4 28.5L52.6 28.9M45.4 28.5L49.1 34.0M45.4 28.5L45.8 33.1M52.6 28.9L56.8 27.9M52.6 28.9L53.5 33.8M52.6 28.9L49.1 34.0M56.8 27.9L59.7 28.9M56.8 27.9L59.3 31.8M56.8 27.9L53.5 33.8M59.7 28.9L64.8 28.9M59.7 28.9L62.2 32.0M59.7 28.9L59.3 31.8M64.8 28.9L68.5 27.3M64.8 28.9L66.9 32.9M64.8 28.9L62.2 32.0M68.5 27.3L73.9 28.6M68.5 27.3L73.8 32.3M68.5 27.3L66.9 32.9M-3.1 32.9L3.8 32.3M-3.1 32.9L-0.7 37.1M-3.1 32.9L-5.4 36.6M3.8 32.3L6.7 34.0M3.8 32.3L3.5 38.6M3.8 32.3L-0.7 37.1M6.7 34.0L12.4 31.7M6.7 34.0L8.9 37.2M6.7 34.0L3.5 38.6M12.4 31.7L15.2 31.6M12.4 31.7L14.3 38.6M12.4 31.7L8.9 37.2M15.2 31.6L22.2 33.6M15.2 31.6L18.4 38.6M15.2 31.6L14.3 38.6M22.2 33.6L24.6 33.7M22.2 33.6L23.3 37.4M22.2 33.6L18.4 38.6M24.6 33.7L31.8 33.2M24.6 33.7L28.1 35.9M24.6 33.7L23.3 37.4M31.8 33.2L34.5 32.8M31.8 33.2L32.5 36.4M31.8 33.2L28.1 35.9M34.5 32.8L38.5 31.2M34.5 32.8L35.8 38.3M34.5 32.8L32.5 36.4M38.5 31.2L45.8 33.1M38.5 31.2L41.0 37.3M38.5 31.2L35.8 38.3M45.8 33.1L49.1 34.0M45.8 33.1L47.4 37.5M45.8 33.1L41.0 37.3M49.1 34.0L53.5 33.8M49.1 34.0L50.8 37.4M49.1 34.0L47.4 37.5M53.5 33.8L59.3 31.8M53.5 33.8L56.2 38.2M53.5 33.8L50.8 37.4M59.3 31.8L62.2 32.0M59.3 31.8L59.5 37.5M59.3 31.8L56.2 38.2M62.2 32.0L66.9 32.9M62.2 32.0L64.6 36.6M62.2 32.0L59.5 37.5M66.9 32.9L73.8 32.3M66.9 32.9L69.3 37.1M66.9 32.9L64.6 36.6M73.8 32.3L76.7 34.0M73.8 32.3L73.5 38.6M73.8 32.3L69.3 37.1M-5.4 36.6L-0.7 37.1M-5.4 36.6L-1.5 43.2M-5.4 36.6L-8.3 42.5M-0.7 37.1L3.5 38.6M-0.7 37.1L3.2 42.0M-0.7 37.1L-1.5 43.2M3.5 38.6L8.9 37.2M3.5 38.6L7.2 42.8M3.5 38.6L3.2 42.0M8.9 37.2L14.3 38.6M8.9 37.2L12.9 41.8M8.9 37.2L7.2 42.8M14.3 38.6L18.4 38.6M14.3 38.6L16.7 42.0M14.3 38.6L12.9 41.8M18.4 38.6L23.3 37.4M18.4 38.6L21.0 42.6M18.4 38.6L16.7 42.0M23.3 37.4L28.1 35.9M23.3 37.4L25.5 42.1M23.3 37.4L21.0 42.6M28.1 35.9L32.5 36.4M28.1 35.9L30.3 43.4M28.1 35.9L25.5 42.1M32.5 36.4L35.8 38.3M32.5 36.4L35.6 43.2M32.5 36.4L30.3 43.4M35.8 38.3L41.0 37.3M35.8 38.3L41.0 41.3M35.8 38.3L35.6 43.2M41.0 37.3L47.4 37.5M41.0 37.3L44.5 43.4M41.0 37.3L41.0 41.3M47.4 37.5L50.8 37.4M47.4 37.5L50.0 40.9M47.4 37.5L44.5 43.4M50.8 37.4L56.2 38.2M50.8 37.4L52.5 41.8M50.8 37.4L50.0 40.9M56.2 38.2L59.5 37.5M56.2 38.2L57.0 41.2M56.2 38.2L52.5 41.8M59.5 37.5L64.6 36.6M59.5 37.5L61.7 42.5M59.5 37.5L57.0 41.2M64.6 36.6L69.3 37.1M64.6 36.6L68.5 43.2M64.6 36.6L61.7 42.5M69.3 37.1L73.5 38.6M69.3 37.1L73.2 42.0M69.3 37.1L68.5 43.2M-1.5 43.2L3.2 42.0M-1.5 43.2L-1.1 47.3M-1.5 43.2L-3.8 48.1M3.2 42.0L7.2 42.8M3.2 42.0L5.2 45.6M3.2 42.0L-1.1 47.3M7.2 42.8L12.9 41.8M7.2 42.8L10.5 48.1M7.2 42.8L5.2 45.6M12.9 41.8L16.7 42.0M12.9 41.8L13.1 48.1M12.9 41.8L10.5 48.1M16.7 42.0L21.0 42.6M16.7 42.0L18.4 46.6M16.7 42.0L13.1 48.1M21.0 42.6L25.5 42.1M21.0 42.6L24.8 47.7M21.0 42.6L18.4 46.6M25.5 42.1L30.3 43.4M25.5 42.1L27.0 46.5M25.5 42.1L24.8 47.7M30.3 43.4L35.6 43.2M30.3 43.4L32.7 46.2M30.3 43.4L27.0 46.5M35.6 43.2L41.0 41.3M35.6 43.2L36.4 46.1M35.6 43.2L32.7 46.2M41.0 41.3L44.5 43.4M41.0 41.3L42.7 45.2M41.0 41.3L36.4 46.1M44.5 43.4L50.0 40.9M44.5 43.4L46.8 46.5M44.5 43.4L42.7 45.2M50.0 40.9L52.5 41.8M50.0 40.9L49.8 46.1M50.0 40.9L46.8 46.5M52.5 41.8L57.0 41.2M52.5 41.8L56.4 46.7M52.5 41.8L49.8 46.1M57.0 41.2L61.7 42.5M57.0 41.2L59.3 48.2M57.0 41.2L56.4 46.7M61.7 42.5L68.5 43.2M61.7 42.5L66.2 48.1M61.7 42.5L59.3 48.2M68.5 43.2L73.2 42.0M68.5 43.2L68.9 47.3M68.5 43.2L66.2 48.1M73.2 42.0L77.2 42.8M73.2 42.0L75.2 45.6M73.2 42.0L68.9 47.3M-3.8 48.1L-1.1 47.3M-3.8 48.1L-2.2 52.6M-3.8 48.1L-7.1 50.8M-1.1 47.3L5.2 45.6M-1.1 47.3L1.1 50.6M-1.1 47.3L-2.2 52.6M5.2 45.6L10.5 48.1M5.2 45.6L5.6 52.2M5.2 45.6L1.1 50.6M10.5 48.1L13.1 48.1M10.5 48.1L11.0 50.2M10.5 48.1L5.6 52.2M13.1 48.1L18.4 46.6M13.1 48.1L16.1 52.6M13.1 48.1L11.0 50.2M18.4 46.6L24.8 47.7M18.4 46.6L22.0 50.6M18.4 46.6L16.1 52.6M24.8 47.7L27.0 46.5M24.8 47.7L24.6 52.6M24.8 47.7L22.0 50.6M27.0 46.5L32.7 46.2M27.0 46.5L30.6 52.0M27.0 46.5L24.6 52.6M32.7 46.2L36.4 46.1M32.7 46.2L33.7 50.0M32.7 46.2L30.6 52.0M36.4 46.1L42.7 45.2M36.4 46.1L40.2 51.1M36.4 46.1L33.7 50.0M42.7 45.2L46.8 46.5M42.7 45.2L43.0 52.7M42.7 45.2L40.2 51.1M46.8 46.5L49.8 46.1M46.8 46.5L49.4 52.3M46.8 46.5L43.0 52.7M49.8 46.1L56.4 46.7M49.8 46.1L52.4 52.4M49.8 46.1L49.4 52.3M56.4 46.7L59.3 48.2M56.4 46.7L57.0 52.5M56.4 46.7L52.4 52.4M59.3 48.2L66.2 48.1M59.3 48.2L62.9 50.8M59.3 48.2L57.0 52.5M66.2 48.1L68.9 47.3M66.2 48.1L67.8 52.6M66.2 48.1L62.9 50.8M68.9 47.3L75.2 45.6M68.9 47.3L71.1 50.6M68.9 47.3L67.8 52.6M-2.2 52.6L1.1 50.6M-2.2 52.6L-0.7 54.9M-2.2 52.6L-5.0 56.0M1.1 50.6L5.6 52.2M1.1 50.6L4.7 55.2M1.1 50.6L-0.7 54.9M5.6 52.2L11.0 50.2M5.6 52.2L8.1 55.0M5.6 52.2L4.7 55.2M11.0 50.2L16.1 52.6M11.0 50.2L12.6 55.1M11.0 50.2L8.1 55.0M16.1 52.6L22.0 50.6M16.1 52.6L18.1 55.4M16.1 52.6L12.6 55.1M22.0 50.6L24.6 52.6M22.0 50.6L24.1 55.4M22.0 50.6L18.1 55.4M24.6 52.6L30.6 52.0M24.6 52.6L28.0 55.0M24.6 52.6L24.1 55.4M30.6 52.0L33.7 50.0M30.6 52.0L32.2 54.5M30.6 52.0L28.0 55.0M33.7 50.0L40.2 51.1M33.7 50.0L36.6 54.5M33.7 50.0L32.2 54.5M40.2 51.1L43.0 52.7M40.2 51.1L42.7 56.2M40.2 51.1L36.6 54.5M43.0 52.7L49.4 52.3M43.0 52.7L45.7 55.9M43.0 52.7L42.7 56.2M49.4 52.3L52.4 52.4M49.4 52.3L52.7 54.8M49.4 52.3L45.7 55.9M52.4 52.4L57.0 52.5M52.4 52.4L57.0 55.8M52.4 52.4L52.7 54.8M57.0 52.5L62.9 50.8M57.0 52.5L60.7 57.0M57.0 52.5L57.0 55.8M62.9 50.8L67.8 52.6M62.9 50.8L65.0 56.0M62.9 50.8L60.7 57.0M67.8 52.6L71.1 50.6M67.8 52.6L69.3 54.9M67.8 52.6L65.0 56.0M71.1 50.6L75.6 52.2M71.1 50.6L74.7 55.2M71.1 50.6L69.3 54.9M-5.0 56.0L-0.7 54.9M-5.0 56.0L-3.1 62.1M-5.0 56.0L-5.5 60.8M-0.7 54.9L4.7 55.2M-0.7 54.9L2.9 62.2M-0.7 54.9L-3.1 62.1M4.7 55.2L8.1 55.0M4.7 55.2L6.5 61.7M4.7 55.2L2.9 62.2M8.1 55.0L12.6 55.1M8.1 55.0L12.3 61.1M8.1 55.0L6.5 61.7M12.6 55.1L18.1 55.4M12.6 55.1L16.0 60.2M12.6 55.1L12.3 61.1M18.1 55.4L24.1 55.4M18.1 55.4L19.6 59.5M18.1 55.4L16.0 60.2M24.1 55.4L28.0 55.0M24.1 55.4L24.3 61.4M24.1 55.4L19.6 59.5M28.0 55.0L32.2 54.5M28.0 55.0L29.6 59.6M28.0 55.0L24.3 61.4M32.2 54.5L36.6 54.5M32.2 54.5L33.7 61.7M32.2 54.5L29.6 59.6M36.6 54.5L42.7 56.2M36.6 54.5L40.8 61.2M36.6 54.5L33.7 61.7M42.7 56.2L45.7 55.9M42.7 56.2L43.7 59.9M42.7 56.2L40.8 61.2M45.7 55.9L52.7 54.8M45.7 55.9L48.4 60.5M45.7 55.9L43.7 59.9M52.7 54.8L57.0 55.8M52.7 54.8L52.6 60.5M52.7 54.8L48.4 60.5M57.0 55.8L60.7 57.0M57.0 55.8L57.6 62.1M57.0 55.8L52.6 60.5M60.7 57.0L65.0 56.0M60.7 57.0L64.5 60.8M60.7 57.0L57.6 62.1M65.0 56.0L69.3 54.9M65.0 56.0L66.9 62.1M65.0 56.0L64.5 60.8M69.3 54.9L74.7 55.2M69.3 54.9L72.9 62.2M69.3 54.9L66.9 62.1M-3.1 62.1L2.9 62.2M-3.1 62.1L-0.6 64.9M-3.1 62.1L-6.1 66.4M2.9 62.2L6.5 61.7M2.9 62.2L3.1 65.0M2.9 62.2L-0.6 64.9M6.5 61.7L12.3 61.1M6.5 61.7L9.3 65.3M6.5 61.7L3.1 65.0M12.3 61.1L16.0 60.2M12.3 61.1L13.1 65.3M12.3 61.1L9.3 65.3M16.0 60.2L19.6 59.5M16.0 60.2L17.1 64.6M16.0 60.2L13.1 65.3M19.6 59.5L24.3 61.4M19.6 59.5L22.1 65.0M19.6 59.5L17.1 64.6M24.3 61.4L29.6 59.6M24.3 61.4L26.6 63.9M24.3 61.4L22.1 65.0M29.6 59.6L33.7 61.7M29.6 59.6L32.1 64.5M29.6 59.6L26.6 63.9M33.7 61.7L40.8 61.2M33.7 61.7L37.6 65.4M33.7 61.7L32.1 64.5M40.8 61.2L43.7 59.9M40.8 61.2L42.8 65.8M40.8 61.2L37.6 65.4M43.7 59.9L48.4 60.5M43.7 59.9L47.3 66.5M43.7 59.9L42.8 65.8M48.4 60.5L52.6 60.5M48.4 60.5L51.0 64.8M48.4 60.5L47.3 66.5M52.6 60.5L57.6 62.1M52.6 60.5L57.5 64.3M52.6 60.5L51.0 64.8M57.6 62.1L64.5 60.8M57.6 62.1L61.4 65.8M57.6 62.1L57.5 64.3M64.5 60.8L66.9 62.1M64.5 60.8L63.9 66.4M64.5 60.8L61.4 65.8M66.9 62.1L72.9 62.2M66.9 62.1L69.4 64.9M66.9 62.1L63.9 66.4M72.9 62.2L76.5 61.7M72.9 62.2L73.1 65.0M72.9 62.2L69.4 64.9M-6.1 66.4L-0.6 64.9M-6.1 66.4L-5.7 70.3M-6.1 66.4L-9.9 71.0M-0.6 64.9L3.1 65.0M-0.6 64.9L-0.5 68.9M-0.6 64.9L-5.7 70.3M3.1 65.0L9.3 65.3M3.1 65.0L5.1 68.7M3.1 65.0L-0.5 68.9M9.3 65.3L13.1 65.3M9.3 65.3L9.4 69.6M9.3 65.3L5.1 68.7M13.1 65.3L17.1 64.6M13.1 65.3L12.6 70.0M13.1 65.3L9.4 69.6M17.1 64.6L22.1 65.0M17.1 64.6L17.2 69.8M17.1 64.6L12.6 70.0M22.1 65.0L26.6 63.9M22.1 65.0L22.0 68.7M22.1 65.0L17.2 69.8M26.6 63.9L32.1 64.5M26.6 63.9L27.8 71.0M26.6 63.9L22.0 68.7M32.1 64.5L37.6 65.4M32.1 64.5L31.5 69.1M32.1 64.5L27.8 71.0M37.6 65.4L42.8 65.8M37.6 65.4L37.7 71.4M37.6 65.4L31.5 69.1M42.8 65.8L47.3 66.5M42.8 65.8L42.2 69.7M42.8 65.8L37.7 71.4M47.3 66.5L51.0 64.8M47.3 66.5L48.1 68.6M47.3 66.5L42.2 69.7M51.0 64.8L57.5 64.3M51.0 64.8L52.4 69.4M51.0 64.8L48.1 68.6M57.5 64.3L61.4 65.8M57.5 64.3L54.9 68.8M57.5 64.3L52.4 69.4M61.4 65.8L63.9 66.4M61.4 65.8L60.1 71.0M61.4 65.8L54.9 68.8M63.9 66.4L69.4 64.9M63.9 66.4L64.3 70.3M63.9 66.4L60.1 71.0M69.4 64.9L73.1 65.0M69.4 64.9L69.5 68.9M69.4 64.9L64.3 70.3M-5.7 70.3L-0.5 68.9M-5.7 70.3L2.8 74.3M-5.7 70.3L-1.5 74.9M-0.5 68.9L5.1 68.7M-0.5 68.9L7.1 73.3M-0.5 68.9L2.8 74.3M5.1 68.7L9.4 69.6M5.1 68.7L10.3 73.8M5.1 68.7L7.1 73.3M9.4 69.6L12.6 70.0M9.4 69.6L16.9 74.4M9.4 69.6L10.3 73.8M12.6 70.0L17.2 69.8M12.6 70.0L20.4 74.9M12.6 70.0L16.9 74.4M17.2 69.8L22.0 68.7M17.2 69.8L25.5 74.0M17.2 69.8L20.4 74.9M22.0 68.7L27.8 71.0M22.0 68.7L31.2 75.3M22.0 68.7L25.5 74.0M27.8 71.0L31.5 69.1M27.8 71.0L34.2 74.9M27.8 71.0L31.2 75.3M31.5 69.1L37.7 71.4M31.5 69.1L39.7 75.8M31.5 69.1L34.2 74.9M37.7 71.4L42.2 69.7M37.7 71.4L45.0 74.0M37.7 71.4L39.7 75.8M42.2 69.7L48.1 68.6M42.2 69.7L50.5 73.5M42.2 69.7L45.0 74.0M48.1 68.6L52.4 69.4M48.1 68.6L53.4 75.5M48.1 68.6L50.5 73.5M52.4 69.4L54.9 68.8M52.4 69.4L57.3 74.6M52.4 69.4L53.4 75.5M54.9 68.8L60.1 71.0M54.9 68.8L61.6 75.2M54.9 68.8L57.3 74.6M60.1 71.0L64.3 70.3M60.1 71.0L68.5 74.9M60.1 71.0L61.6 75.2M64.3 70.3L69.5 68.9M64.3 70.3L72.8 74.3M64.3 70.3L68.5 74.9M69.5 68.9L75.1 68.7M69.5 68.9L77.1 73.3M69.5 68.9L72.8 74.3" stroke="#00001a" stroke-width="1.1" fill="none"/></pattern>
<pattern id="mesh2" width="60" height="60" patternUnits="userSpaceOnUse"><path d="M-3.5 -3.6L1.8 -3.5M-3.5 -3.6L1.3 0.4M-3.5 -3.6L-4.6 0.6M1.8 -3.5L7.5 -6.0M1.8 -3.5L5.8 1.0M1.8 -3.5L1.3 0.4M7.5 -6.0L11.6 -5.3M7.5 -6.0L8.8 0.1M7.5 -6.0L5.8 1.0M11.6 -5.3L18.0 -3.5M11.6 -5.3L15.0 1.1M11.6 -5.3L8.8 0.1M18.0 -3.5L21.3 -5.4M18.0 -3.5L21.0 1.1M18.0 -3.5L15.0 1.1M21.3 -5.4L26.6 -3.4M21.3 -5.4L25.3 1.3M21.3 -5.4L21.0 1.1M26.6 -3.4L31.3 -6.5M26.6 -3.4L30.6 0.6M26.6 -3.4L25.3 1.3M31.3 -6.5L36.0 -5.4M31.3 -6.5L34.1 -1.5M31.3 -6.5L30.6 0.6M36.0 -5.4L43.8 -3.7M36.0 -5.4L38.8 -0.5M36.0 -5.4L34.1 -1.5M43.8 -3.7L48.3 -3.4M43.8 -3.7L43.7 1.1M43.8 -3.7L38.8 -0.5M48.3 -3.4L53.9 -5.6M48.3 -3.4L50.2 0.4M48.3 -3.4L43.7 1.1M53.9 -5.6L56.5 -3.6M53.9 -5.6L55.4 0.6M53.9 -5.6L50.2 0.4M56.5 -3.6L61.8 -3.5M56.5 -3.6L61.3 0.4M56.5 -3.6L55.4 0.6M61.8 -3.5L67.5 -6.0M61.8 -3.5L65.8 1.0M61.8 -3.5L61.3 0.4M-4.6 0.6L1.3 0.4M-4.6 0.6L-2.0 3.6M-4.6 0.6L-6.6 5.4M1.3 0.4L5.8 1.0M1.3 0.4L2.5 3.4M1.3 0.4L-2.0 3.6M5.8 1.0L8.8 0.1M5.8 1.0L8.5 5.8M5.8 1.0L2.5 3.4M8.8 0.1L15.0 1.1M8.8 0.1L12.5 5.1M8.8 0.1L8.5 5.8M15.0 1.1L21.0 1.1M15.0 1.1L18.0 3.6M15.0 1.1L12.5 5.1M21.0 1.1L25.3 1.3M21.0 1.1L23.3 4.2M21.0 1.1L18.0 3.6M25.3 1.3L30.6 0.6M25.3 1.3L26.1 4.2M25.3 1.3L23.3 4.2M30.6 0.6L34.1 -1.5M30.6 0.6L33.3 4.0M30.6 0.6L26.1 4.2M34.1 -1.5L38.8 -0.5M34.1 -1.5L38.3 6.6M34.1 -1.5L33.3 4.0M38.8 -0.5L43.7 1.1M38.8 -0.5L42.5 4.6M38.8 -0.5L38.3 6.6M43.7 1.1L50.2 0.4M43.7 1.1L47.4 5.6M43.7 1.1L42.5 4.6M50.2 0.4L55.4 0.6M50.2 0.4L53.4 5.4M50.2 0.4L47.4 5.6M55.4 0.6L61.3 0.4M55.4 0.6L58.0 3.6M55.4 0.6L53.4 5.4M61.3 0.4L65.8 1.0M61.3 0.4L62.5 3.4M61.3 0.4L58.0 3.6M-2.0 3.6L2.5 3.4M-2.0 3.6L-1.2 9.2M-2.0 3.6L-3.9 11.5M2.5 3.4L8.5 5.8M2.5 3.4L5.8 9.4M2.5 3.4L-1.2 9.2M8.5 5.8L12.5 5.1M8.5 5.8L10.2 8.4M8.5 5.8L5.8 9.4M12.5 5.1L18.0 3.6M12.5 5.1L13.6 9.2M12.5 5.1L10.2 8.4M18.0 3.6L23.3 4.2M18.0 3.6L20.6 10.6M18.0 3.6L13.6 9.2M23.3 4.2L26.1 4.2M23.3 4.2L25.6 9.3M23.3 4.2L20.6 10.6M26.1 4.2L33.3 4.0M26.1 4.2L30.1 9.9M26.1 4.2L25.6 9.3M33.3 4.0L38.3 6.6M33.3 4.0L34.9 8.7M33.3 4.0L30.1 9.9M38.3 6.6L42.5 4.6M38.3 6.6L41.3 9.0M38.3 6.6L34.9 8.7M42.5 4.6L47.4 5.6M42.5 4.6L46.6 11.4M42.5 4.6L41.3 9.0M47.4 5.6L53.4 5.4M47.4 5.6L48.4 9.9M47.4 5.6L46.6 11.4M53.4 5.4L58.0 3.6M53.4 5.4L56.1 11.5M53.4 5.4L48.4 9.9M58.0 3.6L62.5 3.4M58.0 3.6L58.8 9.2M58.0 3.6L56.1 11.5M62.5 3.4L68.5 5.8M62.5 3.4L65.8 9.4M62.5 3.4L58.8 9.2M-3.9 11.5L-1.2 9.2M-3.9 11.5L-3.7 14.5M-3.9 11.5L-7.7 14.3M-1.2 9.2L5.8 9.4M-1.2 9.2L2.3 14.2M-1.2 9.2L-3.7 14.5M5.8 9.4L10.2 8.4M5.8 9.4L6.5 16.5M5.8 9.4L2.3 14.2M10.2 8.4L13.6 9.2M10.2 8.4L11.5 15.3M10.2 8.4L6.5 16.5M13.6 9.2L20.6 10.6M13.6 9.2L16.3 15.1M13.6 9.2L11.5 15.3M20.6 10.6L25.6 9.3M20.6 10.6L24.0 13.8M20.6 10.6L16.3 15.1M25.6 9.3L30.1 9.9M25.6 9.3L28.6 15.0M25.6 9.3L24.0 13.8M30.1 9.9L34.9 8.7M30.1 9.9L33.8 15.7M30.1 9.9L28.6 15.0M34.9 8.7L41.3 9.0M34.9 8.7L36.6 16.3M34.9 8.7L33.8 15.7M41.3 9.0L46.6 11.4M41.3 9.0L42.5 13.4M41.3 9.0L36.6 16.3M46.6 11.4L48.4 9.9M46.6 11.4L45.9 15.0M46.6 11.4L42.5 13.4M48.4 9.9L56.1 11.5M48.4 9.9L52.3 14.3M48.4 9.9L45.9 15.0M56.1 11.5L58.8 9.2M56.1 11.5L56.3 14.5M56.1 11.5L52.3 14.3M58.8 9.2L65.8 9.4M58.8 9.2L62.3 14.2M58.8 9.2L56.3 14.5M-3.7 14.5L2.3 14.2M-3.7 14.5L-0.6 21.1M-3.7 14.5L-5.8 19.2M2.3 14.2L6.5 16.5M2.3 14.2L3.4 20.8M2.3 14.2L-0.6 21.1M6.5 16.5L11.5 15.3M6.5 16.5L11.1 18.7M6.5 16.5L3.4 20.8M11.5 15.3L16.3 15.1M11.5 15.3L16.4 20.7M11.5 15.3L11.1 18.7M16.3 15.1L24.0 13.8M16.3 15.1L21.3 19.3M16.3 15.1L16.4 20.7M24.0 13.8L28.6 15.0M24.0 13.8L24.6 19.6M24.0 13.8L21.3 19.3M28.6 15.0L33.8 15.7M28.6 15.0L31.6 20.3M28.6 15.0L24.6 19.6M33.8 15.7L36.6 16.3M33.8 15.7L34.5 19.8M33.8 15.7L31.6 20.3M36.6 16.3L42.5 13.4M36.6 16.3L39.3 18.5M36.6 16.3L34.5 19.8M42.5 13.4L45.9 15.0M42.5 13.4L43.7 21.1M42.5 13.4L39.3 18.5M45.9 15.0L52.3 14.3M45.9 15.0L49.3 21.4M45.9 15.0L43.7 21.1M52.3 14.3L56.3 14.5M52.3 14.3L54.2 19.2M52.3 14.3L49.3 21.4M56.3 14.5L62.3 14.2M56.3 14.5L59.4 21.1M56.3 14.5L54.2 19.2M62.3 14.2L66.5 16.5M62.3 14.2L63.4 20.8M62.3 14.2L59.4 21.1M-5.8 19.2L-0.6 21.1M-5.8 19.2L-3.2 25.8M-5.8 19.2L-7.6 24.5M-0.6 21.1L3.4 20.8M-0.6 21.1L2.5 24.0M-0.6 21.1L-3.2 25.8M3.4 20.8L11.1 18.7M3.4 20.8L7.1 26.5M3.4 20.8L2.5 24.0M11.1 18.7L16.4 20.7M11.1 18.7L13.8 26.0M11.1 18.7L7.1 26.5M16.4 20.7L21.3 19.3M16.4 20.7L17.9 26.4M16.4 20.7L13.8 26.0M21.3 19.3L24.6 19.6M21.3 19.3L24.0 25.2M21.3 19.3L17.9 26.4M24.6 19.6L31.6 20.3M24.6 19.6L28.2 23.5M24.6 19.6L24.0 25.2M31.6 20.3L34.5 19.8M31.6 20.3L33.3 24.8M31.6 20.3L28.2 23.5M34.5 19.8L39.3 18.5M34.5 19.8L38.3 25.5M34.5 19.8L33.3 24.8M39.3 18.5L43.7 21.1M39.3 18.5L41.8 23.5M39.3 18.5L38.3 25.5M43.7 21.1L49.3 21.4M43.7 21.1L48.9 23.8M43.7 21.1L41.8 23.5M49.3 21.4L54.2 19.2M49.3 21.4L52.4 24.5M49.3 21.4L48.9 23.8M54.2 19.2L59.4 21.1M54.2 19.2L56.8 25.8M54.2 19.2L52.4 24.5M59.4 21.1L63.4 20.8M59.4 21.1L62.5 24.0M59.4 21.1L56.8 25.8M-3.2 25.8L2.5 24.0M-3.2 25.8L1.6 29.2M-3.2 25.8L-4.8 31.3M2.5 24.0L7.1 26.5M2.5 24.0L5.5 29.3M2.5 24.0L1.6 29.2M7.1 26.5L13.8 26.0M7.1 26.5L10.2 29.7M7.1 26.5L5.5 29.3M13.8 26.0L17.9 26.4M13.8 26.0L13.9 28.9M13.8 26.0L10.2 29.7M17.9 26.4L24.0 25.2M17.9 26.4L19.0 31.3M17.9 26.4L13.9 28.9M24.0 25.2L28.2 23.5M24.0 25.2L25.0 29.1M24.0 25.2L19.0 31.3M28.2 23.5L33.3 24.8M28.2 23.5L31.3 31.6M28.2 23.5L25.0 29.1M33.3 24.8L38.3 25.5M33.3 24.8L34.8 28.8M33.3 24.8L31.3 31.6M38.3 25.5L41.8 23.5M38.3 25.5L39.0 28.6M38.3 25.5L34.8 28.8M41.8 23.5L48.9 23.8M41.8 23.5L44.5 28.7M41.8 23.5L39.0 28.6M48.9 23.8L52.4 24.5M48.9 23.8L49.1 29.2M48.9 23.8L44.5 28.7M52.4 24.5L56.8 25.8M52.4 24.5L55.2 31.3M52.4 24.5L49.1 29.2M56.8 25.8L62.5 24.0M56.8 25.8L61.6 29.2M56.8 25.8L55.2 31.3M62.5 24.0L67.1 26.5M62.5 24.0L65.5 29.3M62.5 24.0L61.6 29.2M-4.8 31.3L1.6 29.2M-4.8 31.3L-4.0 35.7M-4.8 31.3L-6.3 33.4M1.6 29.2L5.5 29.3M1.6 29.2L3.3 34.7M1.6 29.2L-4.0 35.7M5.5 29.3L10.2 29.7M5.5 29.3L7.2 35.1M5.5 29.3L3.3 34.7M10.2 29.7L13.9 28.9M10.2 29.7L12.1 34.5M10.2 29.7L7.2 35.1M13.9 28.9L19.0 31.3M13.9 28.9L16.1 34.3M13.9 28.9L12.1 34.5M19.0 31.3L25.0 29.1M19.0 31.3L24.0 33.8M19.0 31.3L16.1 34.3M25.0 29.1L31.3 31.6M25.0 29.1L27.5 35.4M25.0 29.1L24.0 33.8M31.3 31.6L34.8 28.8M31.3 31.6L33.7 34.1M31.3 31.6L27.5 35.4M34.8 28.8L39.0 28.6M34.8 28.8L36.7 34.2M34.8 28.8L33.7 34.1M39.0 28.6L44.5 28.7M39.0 28.6L42.2 34.8M39.0 28.6L36.7 34.2M44.5 28.7L49.1 29.2M44.5 28.7L49.0 36.2M44.5 28.7L42.2 34.8M49.1 29.2L55.2 31.3M49.1 29.2L53.7 33.4M49.1 29.2L49.0 36.2M55.2 31.3L61.6 29.2M55.2 31.3L56.0 35.7M55.2 31.3L53.7 33.4M61.6 29.2L65.5 29.3M61.6 29.2L63.3 34.7M61.6 29.2L56.0 35.7M-4.0 35.7L3.3 34.7M-4.0 35.7L1.3 39.9M-4.0 35.7L-5.9 41.4M3.3 34.7L7.2 35.1M3.3 34.7L5.3 38.4M3.3 34.7L1.3 39.9M7.2 35.1L12.1 34.5M7.2 35.1L9.6 41.4M7.2 35.1L5.3 38.4M12.1 34.5L16.1 34.3M12.1 34.5L16.1 41.2M12.1 34.5L9.6 41.4M16.1 34.3L24.0 33.8M16.1 34.3L21.6 39.2M16.1 34.3L16.1 41.2M24.0 33.8L27.5 35.4M24.0 33.8L23.7 38.9M24.0 33.8L21.6 39.2M27.5 35.4L33.7 34.1M27.5 35.4L30.1 40.6M27.5 35.4L23.7 38.9M33.7 34.1L36.7 34.2M33.7 34.1L36.5 40.7M33.7 34.1L30.1 40.6M36.7 34.2L42.2 34.8M36.7 34.2L40.5 40.9M36.7 34.2L36.5 40.7M42.2 34.8L49.0 36.2M42.2 34.8L44.9 40.2M42.2 34.8L40.5 40.9M49.0 36.2L53.7 33.4M49.0 36.2L48.5 40.9M49.0 36.2L44.9 40.2M53.7 33.4L56.0 35.7M53.7 33.4L54.1 41.4M53.7 33.4L48.5 40.9M56.0 35.7L63.3 34.7M56.0 35.7L61.3 39.9M56.0 35.7L54.1 41.4M63.3 34.7L67.2 35.1M63.3 34.7L65.3 38.4M63.3 34.7L61.3 39.9M-5.9 41.4L1.3 39.9M-5.9 41.4L-1.0 45.7M-5.9 41.4L-8.4 44.2M1.3 39.9L5.3 38.4M1.3 39.9L3.0 44.4M1.3 39.9L-1.0 45.7M5.3 38.4L9.6 41.4M5.3 38.4L6.3 44.2M5.3 38.4L3.0 44.4M9.6 41.4L16.1 41.2M9.6 41.4L12.9 45.7M9.6 41.4L6.3 44.2M16.1 41.2L21.6 39.2M16.1 41.2L16.2 43.6M16.1 41.2L12.9 45.7M21.6 39.2L23.7 38.9M21.6 39.2L22.6 45.3M21.6 39.2L16.2 43.6M23.7 38.9L30.1 40.6M23.7 38.9L27.1 44.1M23.7 38.9L22.6 45.3M30.1 40.6L36.5 40.7M30.1 40.6L32.8 43.4M30.1 40.6L27.1 44.1M36.5 40.7L40.5 40.9M36.5 40.7L36.8 44.9M36.5 40.7L32.8 43.4M40.5 40.9L44.9 40.2M40.5 40.9L44.0 45.5M40.5 40.9L36.8 44.9M44.9 40.2L48.5 40.9M44.9 40.2L48.8 44.9M44.9 40.2L44.0 45.5M48.5 40.9L54.1 41.4M48.5 40.9L51.6 44.2M48.5 40.9L48.8 44.9M54.1 41.4L61.3 39.9M54.1 41.4L59.0 45.7M54.1 41.4L51.6 44.2M61.3 39.9L65.3 38.4M61.3 39.9L63.0 44.4M61.3 39.9L59.0 45.7M-1.0 45.7L3.0 44.4M-1.0 45.7L-0.6 48.4M-1.0 45.7L-5.9 50.9M3.0 44.4L6.3 44.2M3.0 44.4L5.0 50.6M3.0 44.4L-0.6 48.4M6.3 44.2L12.9 45.7M6.3 44.2L9.7 49.2M6.3 44.2L5.0 50.6M12.9 45.7L16.2 43.6M12.9 45.7L15.6 51.4M12.9 45.7L9.7 49.2M16.2 43.6L22.6 45.3M16.2 43.6L19.1 48.5M16.2 43.6L15.6 51.4M22.6 45.3L27.1 44.1M22.6 45.3L24.5 49.7M22.6 45.3L19.1 48.5M27.1 44.1L32.8 43.4M27.1 44.1L30.6 49.0M27.1 44.1L24.5 49.7M32.8 43.4L36.8 44.9M32.8 43.4L36.0 50.8M32.8 43.4L30.6 49.0M36.8 44.9L44.0 45.5M36.8 44.9L40.0 49.0M36.8 44.9L36.0 50.8M44.0 45.5L48.8 44.9M44.0 45.5L46.6 49.4M44.0 45.5L40.0 49.0M48.8 44.9L51.6 44.2M48.8 44.9L51.1 49.1M48.8 44.9L46.6 49.4M51.6 44.2L59.0 45.7M51.6 44.2L54.1 50.9M51.6 44.2L51.1 49.1M59.0 45.7L63.0 44.4M59.0 45.7L59.4 48.4M59.0 45.7L54.1 50.9M63.0 44.4L66.3 44.2M63.0 44.4L65.0 50.6M63.0 44.4L59.4 48.4M-5.9 50.9L-0.6 48.4M-5.9 50.9L-3.5 56.4M-5.9 50.9L-6.1 54.4M-0.6 48.4L5.0 50.6M-0.6 48.4L1.8 56.5M-0.6 48.4L-3.5 56.4M5.0 50.6L9.7 49.2M5.0 50.6L7.5 54.0M5.0 50.6L1.8 56.5M9.7 49.2L15.6 51.4M9.7 49.2L11.6 54.7M9.7 49.2L7.5 54.0M15.6 51.4L19.1 48.5M15.6 51.4L18.0 56.5M15.6 51.4L11.6 54.7M19.1 48.5L24.5 49.7M19.1 48.5L21.3 54.6M19.1 48.5L18.0 56.5M24.5 49.7L30.6 49.0M24.5 49.7L26.6 56.6M24.5 49.7L21.3 54.6M30.6 49.0L36.0 50.8M30.6 49.0L31.3 53.5M30.6 49.0L26.6 56.6M36.0 50.8L40.0 49.0M36.0 50.8L36.0 54.6M36.0 50.8L31.3 53.5M40.0 49.0L46.6 49.4M40.0 49.0L43.8 56.3M40.0 49.0L36.0 54.6M46.6 49.4L51.1 49.1M46.6 49.4L48.3 56.6M46.6 49.4L43.8 56.3M51.1 49.1L54.1 50.9M51.1 49.1L53.9 54.4M51.1 49.1L48.3 56.6M54.1 50.9L59.4 48.4M54.1 50.9L56.5 56.4M54.1 50.9L53.9 54.4M59.4 48.4L65.0 50.6M59.4 48.4L61.8 56.5M59.4 48.4L56.5 56.4M-3.5 56.4L1.8 56.5M-3.5 56.4L1.3 60.4M-3.5 56.4L-4.6 60.6M1.8 56.5L7.5 54.0M1.8 56.5L5.8 61.0M1.8 56.5L1.3 60.4M7.5 54.0L11.6 54.7M7.5 54.0L8.8 60.1M7.5 54.0L5.8 61.0M11.6 54.7L18.0 56.5M11.6 54.7L15.0 61.1M11.6 54.7L8.8 60.1M18.0 56.5L21.3 54.6M18.0 56.5L21.0 61.1M18.0 56.5L15.0 61.1M21.3 54.6L26.6 56.6M21.3 54.6L25.3 61.3M21.3 54.6L21.0 61.1M26.6 56.6L31.3 53.5M26.6 56.6L30.6 60.6M26.6 56.6L25.3 61.3M31.3 53.5L36.0 54.6M31.3 53.5L34.1 58.5M31.3 53.5L30.6 60.6M36.0 54.6L43.8 56.3M36.0 54.6L38.8 59.5M36.0 54.6L34.1 58.5M43.8 56.3L48.3 56.6M43.8 56.3L43.7 61.1M43.8 56.3L38.8 59.5M48.3 56.6L53.9 54.4M48.3 56.6L50.2 60.4M48.3 56.6L43.7 61.1M53.9 54.4L56.5 56.4M53.9 54.4L55.4 60.6M53.9 54.4L50.2 60.4M56.5 56.4L61.8 56.5M56.5 56.4L61.3 60.4M56.5 56.4L55.4 60.6M61.8 56.5L67.5 54.0M61.8 56.5L65.8 61.0M61.8 56.5L61.3 60.4M-4.6 60.6L1.3 60.4M-4.6 60.6L-2.0 63.6M-4.6 60.6L-6.6 65.4M1.3 60.4L5.8 61.0M1.3 60.4L2.5 63.4M1.3 60.4L-2.0 63.6M5.8 61.0L8.8 60.1M5.8 61.0L8.5 65.8M5.8 61.0L2.5 63.4M8.8 60.1L15.0 61.1M8.8 60.1L12.5 65.1M8.8 60.1L8.5 65.8M15.0 61.1L21.0 61.1M15.0 61.1L18.0 63.6M15.0 61.1L12.5 65.1M21.0 61.1L25.3 61.3M21.0 61.1L23.3 64.2M21.0 61.1L18.0 63.6M25.3 61.3L30.6 60.6M25.3 61.3L26.1 64.2M25.3 61.3L23.3 64.2M30.6 60.6L34.1 58.5M30.6 60.6L33.3 64.0M30.6 60.6L26.1 64.2M34.1 58.5L38.8 59.5M34.1 58.5L38.3 66.6M34.1 58.5L33.3 64.0M38.8 59.5L43.7 61.1M38.8 59.5L42.5 64.6M38.8 59.5L38.3 66.6M43.7 61.1L50.2 60.4M43.7 61.1L47.4 65.6M43.7 61.1L42.5 64.6M50.2 60.4L55.4 60.6M50.2 60.4L53.4 65.4M50.2 60.4L47.4 65.6M55.4 60.6L61.3 60.4M55.4 60.6L58.0 63.6M55.4 60.6L53.4 65.4M61.3 60.4L65.8 61.0M61.3 60.4L62.5 63.4M61.3 60.4L58.0 63.6" stroke="#001014" stroke-width="0.9" fill="none"/></pattern>
<linearGradient id="sky2" gradientUnits="userSpaceOnUse" x1="0" y1="107.0" x2="0" y2="366.6"><stop offset="0" stop-color="#6a8ad8"/><stop offset="0.5" stop-color="#b3c3ec"/><stop offset="1" stop-color="#fefeff"/></linearGradient>
<path id="go0" d="M146.2 132.2 L147.6 132.1 L149.1 132.1 L150.6 132.3 L152.2 132.9 L153.8 133.9 L155.4 135.9 L157.2 138.7 L158.8 141.9 L160.4 145.1 L161.9 148.6 L163.3 152.1 L164.7 155.6 L165.9 159.1 L167.1 162.1 L168.1 164.2 L169.2 165.1 L170.2 165.3 L171.2 165.3 L172.2 165.4 L173.2 165.4 L174.3 165.5 L175.3 165.6 L176.3 165.7 L177.3 165.6 L178.5 164.8 L179.8 162.8 L181.3 159.9 L182.9 156.7 L184.7 153.3 L186.5 149.9 L188.5 146.7 L190.4 143.6 L192.5 140.6 L194.5 138.0 L196.4 136.3 L198.1 135.4 L199.7 135.1 L201.3 135.0 L202.8 135.1 L204.2 135.4 L205.6 135.9 L206.9 136.6 L208.1 137.5 L209.2 138.7 L210.1 140.3 L210.6 142.7 L210.8 146.0 L210.7 149.5 L210.5 153.1 L210.1 156.8 L209.6 160.6 L209.1 164.3 L208.5 167.9 L208.0 171.1 L208.0 173.4 L208.4 174.7 L209.2 175.3 L210.1 175.8 L211.0 176.3 L211.9 176.8 L212.7 177.3 L213.6 177.8 L214.5 178.3 L215.4 178.7 L216.8 178.5 L219.0 177.3 L221.7 175.4 L224.8 173.3 L228.0 171.1 L231.3 168.9 L234.5 166.9 L237.8 165.0 L241.1 163.3 L244.2 161.9 L246.7 161.2 L248.6 161.2 L250.2 161.5 L251.6 162.2 L252.9 162.9 L254.0 163.8 L254.9 164.9 L255.8 166.1 L256.4 167.4 L256.8 168.9 L256.8 170.7 L256.1 173.1 L254.6 176.1 L252.8 179.2 L250.9 182.3 L248.7 185.4 L246.5 188.5 L244.2 191.6 L241.9 194.5 L239.9 197.1 L238.7 199.1 L238.5 200.5 L238.9 201.4 L239.4 202.2 L240.0 203.0 L240.5 203.8 L241.1 204.7 L241.6 205.5 L242.1 206.3 L242.7 207.1 L244.1 207.5 L246.5 207.4 L249.9 207.0 L253.7 206.4 L257.6 205.9 L261.5 205.4 L265.4 205.1 L269.3 204.9 L273.0 204.8 L276.4 204.9 L279.0 205.4 L280.7 206.2 L281.9 207.2 L282.9 208.4 L283.6 209.6 L284.1 210.9 L284.5 212.3 L284.6 213.7 L284.6 215.2 L284.2 216.7 L283.3 218.3 L281.5 220.1 L278.7 222.0 L275.6 224.0 L272.3 225.9 L268.9 227.7 L265.4 229.5 L261.9 231.2 L258.4 232.7 L255.4 234.2 L253.3 235.4 L252.5 236.5 L252.4 237.5 L252.5 238.5 L252.6 239.4 L252.6 240.4 L252.7 241.4 L252.7 242.3 L252.8 243.3 L252.9 244.3 L253.8 245.2 L255.7 246.2 L258.6 247.3 L262.1 248.4 L265.7 249.7 L269.4 251.0 L273.0 252.4 L276.5 253.9 L279.9 255.4 L283.1 257.1 L285.4 258.7 L286.8 260.2 L287.5 261.7 L287.8 263.1 L287.9 264.5 L287.8 265.9 L287.4 267.3 L286.8 268.6 L286.0 269.8 L284.7 271.0 L282.9 271.9 L280.1 272.7 L276.5 273.1 L272.8 273.4 L268.9 273.7 L265.1 273.8 L261.1 273.8 L257.3 273.7 L253.6 273.7 L250.5 273.7 L248.3 274.0 L247.1 274.6 L246.6 275.5 L246.2 276.4 L245.8 277.2 L245.4 278.1 L245.0 279.0 L244.6 279.9 L244.1 280.8 L243.7 281.6 L243.6 282.7 L244.3 284.1 L245.9 286.1 L248.1 288.5 L250.5 291.0 L253.0 293.7 L255.4 296.5 L257.7 299.2 L259.8 302.0 L262.0 304.9 L263.9 307.7 L265.1 310.1 L265.5 312.1 L265.3 313.6 L264.8 315.0 L264.0 316.2 L263.0 317.2 L261.7 318.0 L260.2 318.6 L258.1 318.7 L255.3 318.2 L251.9 317.1 L248.5 315.8 L245.1 314.5 L241.7 313.1 L238.3 311.5 L235.0 309.9 L231.8 308.3 L228.8 306.9 L226.4 305.9 L224.8 305.6 L223.7 305.9 L222.9 306.5 L222.1 307.1 L221.3 307.8 L220.5 308.4 L219.7 309.0 L218.9 309.5 L218.1 310.1 L217.3 310.7 L216.6 311.4 L216.2 312.7 L216.5 314.8 L217.2 317.7 L218.0 320.9 L218.8 324.2 L219.6 327.6 L220.2 331.0 L220.7 334.4 L221.1 337.6 L221.5 341.0 L221.7 344.3 L221.4 346.8 L220.7 348.4 L219.6 349.5 L218.3 350.2 L216.9 350.6 L215.3 350.7 L213.5 350.1 L211.4 348.7 L209.0 346.4 L206.5 343.9 L204.2 341.5 L201.9 338.9 L199.6 336.2 L197.4 333.4 L195.3 330.6 L193.3 327.9 L191.5 325.6 L190.0 323.9 L188.7 323.3 L187.7 323.4 L186.7 323.6 L185.7 323.8 L184.7 324.0 L183.7 324.2 L182.7 324.3 L181.7 324.5 L180.7 324.6 L179.7 324.8 L178.7 325.1 L177.8 326.0 L176.9 327.9 L176.1 330.6 L175.3 333.8 L174.3 337.0 L173.3 340.4 L172.3 343.6 L171.1 346.8 L169.9 349.9 L168.5 353.1 L167.1 356.1 L165.7 358.4 L164.2 359.6 L162.7 360.1 L161.2 360.2 L159.8 359.9 L158.4 359.3 L157.0 357.9 L155.9 355.5 L154.8 352.3 L153.9 349.0 L153.1 345.8 L152.3 342.5 L151.6 339.2 L151.0 335.7 L150.5 332.4 L150.1 329.2 L149.6 326.4 L149.0 324.4 L148.2 323.4 L147.3 323.0 L146.3 322.7 L145.3 322.5 L144.3 322.2 L143.3 321.9 L142.3 321.6 L141.4 321.3 L140.4 321.0 L139.4 320.7 L138.4 320.6 L137.1 321.1 L135.3 322.6 L133.2 324.8 L130.9 327.3 L128.4 329.8 L125.9 332.4 L123.3 334.8 L120.7 337.1 L118.1 339.3 L115.4 341.4 L112.7 343.4 L110.4 344.5 L108.6 344.8 L107.1 344.5 L105.7 344.0 L104.6 343.1 L103.6 341.9 L103.0 340.3 L103.0 337.8 L103.6 334.7 L104.3 331.4 L105.1 328.2 L106.0 325.0 L107.1 321.6 L108.3 318.3 L109.5 315.1 L110.7 312.0 L111.8 309.2 L112.3 307.0 L112.2 305.6 L111.6 304.8 L110.9 304.2 L110.1 303.5 L109.4 302.8 L108.7 302.2 L108.0 301.5 L107.2 300.8 L106.5 300.1 L105.8 299.4 L104.7 299.0 L103.0 299.2 L100.4 300.0 L97.2 301.1 L93.8 302.4 L90.2 303.6 L86.6 304.8 L83.1 305.9 L79.6 306.8 L76.0 307.6 L72.6 308.3 L69.9 308.4 L68.0 308.0 L66.5 307.2 L65.4 306.2 L64.6 305.1 L63.9 303.9 L63.5 302.5 L63.4 300.9 L63.9 299.1 L65.3 296.9 L67.5 294.3 L69.9 291.7 L72.4 289.2 L75.0 286.7 L77.8 284.2 L80.6 281.8 L83.4 279.5 L85.9 277.4 L87.8 275.6 L88.8 274.2 L88.9 273.1 L88.6 272.1 L88.3 271.2 L88.0 270.3 L87.7 269.4 L87.4 268.5 L87.1 267.5 L86.8 266.6 L86.4 265.7 L85.2 265.0 L82.9 264.5 L79.6 264.2 L75.9 263.8 L72.0 263.5 L68.0 263.0 L64.2 262.5 L60.4 261.8 L56.7 261.1 L53.4 260.2 L50.9 259.1 L49.3 257.9 L48.4 256.7 L47.7 255.3 L47.3 254.0 L47.1 252.6 L47.1 251.2 L47.4 249.8 L47.8 248.4 L48.6 247.0 L50.0 245.6 L52.3 244.3 L55.5 243.0 L59.1 241.9 L62.7 240.8 L66.5 239.8 L70.4 238.8 L74.2 238.0 L77.9 237.3 L81.1 236.5 L83.3 235.8 L84.3 234.9 L84.7 234.0 L84.8 233.0 L85.0 232.1 L85.2 231.1 L85.3 230.2 L85.5 229.2 L85.8 228.3 L85.8 227.3 L85.1 226.1 L83.2 224.6 L80.3 222.9 L77.1 220.9 L73.8 218.9 L70.5 216.7 L67.4 214.5 L64.4 212.3 L61.5 210.0 L59.0 207.8 L57.4 205.8 L56.7 204.1 L56.5 202.5 L56.7 201.1 L57.0 199.7 L57.5 198.4 L58.2 197.1 L59.0 196.0 L60.1 195.0 L61.5 194.0 L63.3 193.4 L65.9 193.2 L69.3 193.5 L73.0 194.0 L76.8 194.6 L80.6 195.4 L84.5 196.3 L88.3 197.2 L92.0 198.2 L95.3 199.0 L97.7 199.4 L99.1 199.1 L99.8 198.4 L100.4 197.7 L101.1 196.9 L101.7 196.1 L102.3 195.4 L103.0 194.6 L103.6 193.9 L104.1 193.0 L104.1 191.7 L103.1 189.5 L101.5 186.7 L99.6 183.6 L97.6 180.3 L95.8 176.9 L94.1 173.6 L92.5 170.3 L91.1 167.0 L90.0 163.9 L89.5 161.5 L89.8 159.6 L90.4 158.2 L91.2 156.9 L92.1 155.9 L93.2 154.9 L94.4 154.2 L95.8 153.5 L97.2 153.1 L98.9 152.9 L100.8 153.1 L103.2 154.1 L106.1 155.8 L109.1 157.9 L112.2 160.1 L115.2 162.5 L118.2 165.0 L121.1 167.5 L123.9 170.0 L126.4 172.2 L128.3 173.6 L129.7 173.9 L130.7 173.7 L131.6 173.2 L132.5 172.8 L133.5 172.4 L134.4 172.0 L135.3 171.6 L136.3 171.3 L137.2 170.7 L137.8 169.5 L138.0 167.2 L137.9 164.0 L137.8 160.4 L137.7 156.6 L137.7 152.8 L137.8 149.1 L138.0 145.5 L138.4 142.0 L138.9 138.8 L139.7 136.4 L140.8 134.9 L142.0 133.8 L143.4 133.1 L144.8 132.6Z"/>
<path id="go1" d="M354.2 165.4 L355.6 165.3 L357.1 165.3 L358.6 165.5 L360.2 166.1 L361.8 167.1 L363.4 169.1 L365.2 171.9 L366.8 175.1 L368.4 178.3 L369.9 181.8 L371.3 185.3 L372.7 188.8 L373.9 192.3 L375.1 195.3 L376.1 197.4 L377.2 198.3 L378.2 198.5 L379.2 198.5 L380.2 198.6 L381.2 198.6 L382.3 198.7 L383.3 198.8 L384.3 198.9 L385.3 198.8 L386.5 198.0 L387.8 196.0 L389.3 193.1 L390.9 189.9 L392.7 186.5 L394.5 183.1 L396.5 179.9 L398.4 176.8 L400.5 173.8 L402.5 171.2 L404.4 169.5 L406.1 168.6 L407.7 168.3 L409.3 168.2 L410.8 168.3 L412.2 168.6 L413.6 169.1 L414.9 169.8 L416.1 170.7 L417.2 171.9 L418.1 173.5 L418.6 175.9 L418.8 179.2 L418.7 182.7 L418.5 186.3 L418.1 190.0 L417.6 193.8 L417.1 197.5 L416.5 201.1 L416.0 204.3 L416.0 206.6 L416.4 207.9 L417.2 208.5 L418.1 209.0 L419.0 209.5 L419.9 210.0 L420.7 210.5 L421.6 211.0 L422.5 211.5 L423.4 211.9 L424.8 211.7 L427.0 210.5 L429.7 208.6 L432.8 206.5 L436.0 204.3 L439.3 202.1 L442.5 200.1 L445.8 198.2 L449.1 196.5 L452.2 195.1 L454.7 194.4 L456.6 194.4 L458.2 194.7 L459.6 195.4 L460.9 196.1 L462.0 197.0 L462.9 198.1 L463.8 199.3 L464.4 200.6 L464.8 202.1 L464.8 203.9 L464.1 206.3 L462.6 209.3 L460.8 212.4 L458.9 215.5 L456.7 218.6 L454.5 221.7 L452.2 224.8 L449.9 227.7 L447.9 230.3 L446.7 232.3 L446.5 233.7 L446.9 234.6 L447.4 235.4 L448.0 236.2 L448.5 237.0 L449.1 237.9 L449.6 238.7 L450.1 239.5 L450.7 240.3 L452.1 240.7 L454.5 240.6 L457.9 240.2 L461.7 239.6 L465.6 239.1 L469.5 238.6 L473.4 238.3 L477.3 238.1 L481.0 238.0 L484.4 238.1 L487.0 238.6 L488.7 239.4 L489.9 240.4 L490.9 241.6 L491.6 242.8 L492.1 244.1 L492.5 245.5 L492.6 246.9 L492.6 248.4 L492.2 249.9 L491.3 251.5 L489.5 253.3 L486.7 255.2 L483.6 257.2 L480.3 259.1 L476.9 260.9 L473.4 262.7 L469.9 264.4 L466.4 265.9 L463.4 267.4 L461.3 268.6 L460.5 269.7 L460.4 270.7 L460.5 271.7 L460.6 272.6 L460.6 273.6 L460.7 274.6 L460.7 275.5 L460.8 276.5 L460.9 277.5 L461.8 278.4 L463.7 279.4 L466.6 280.5 L470.1 281.6 L473.7 282.9 L477.4 284.2 L481.0 285.6 L484.5 287.1 L487.9 288.6 L491.1 290.3 L493.4 291.9 L494.8 293.4 L495.5 294.9 L495.8 296.3 L495.9 297.7 L495.8 299.1 L495.4 300.5 L494.8 301.8 L494.0 303.0 L492.7 304.2 L490.9 305.1 L488.1 305.9 L484.5 306.3 L480.8 306.6 L476.9 306.9 L473.1 307.0 L469.1 307.0 L465.3 306.9 L461.6 306.9 L458.5 306.9 L456.3 307.2 L455.1 307.8 L454.6 308.7 L454.2 309.6 L453.8 310.4 L453.4 311.3 L453.0 312.2 L452.6 313.1 L452.1 314.0 L451.7 314.8 L451.6 315.9 L452.3 317.3 L453.9 319.3 L456.1 321.7 L458.5 324.2 L461.0 326.9 L463.4 329.7 L465.7 332.4 L467.8 335.2 L470.0 338.1 L471.9 340.9 L473.1 343.3 L473.5 345.3 L473.3 346.8 L472.8 348.2 L472.0 349.4 L471.0 350.4 L469.7 351.2 L468.2 351.8 L466.1 351.9 L463.3 351.4 L459.9 350.3 L456.5 349.0 L453.1 347.7 L449.7 346.3 L446.3 344.7 L443.0 343.1 L439.8 341.5 L436.8 340.1 L434.4 339.1 L432.8 338.8 L431.7 339.1 L430.9 339.7 L430.1 340.3 L429.3 341.0 L428.5 341.6 L427.7 342.2 L426.9 342.7 L426.1 343.3 L425.3 343.9 L424.6 344.6 L424.2 345.9 L424.5 348.0 L425.2 350.9 L426.0 354.1 L426.8 357.4 L427.6 360.8 L428.2 364.2 L428.7 367.6 L429.1 370.8 L429.5 374.2 L429.7 377.5 L429.4 380.0 L428.7 381.6 L427.6 382.7 L426.3 383.4 L424.9 383.8 L423.3 383.9 L421.5 383.3 L419.4 381.9 L417.0 379.6 L414.5 377.1 L412.2 374.7 L409.9 372.1 L407.6 369.4 L405.4 366.6 L403.3 363.8 L401.3 361.1 L399.5 358.8 L398.0 357.1 L396.7 356.5 L395.7 356.6 L394.7 356.8 L393.7 357.0 L392.7 357.2 L391.7 357.4 L390.7 357.5 L389.7 357.7 L388.7 357.8 L387.7 358.0 L386.7 358.3 L385.8 359.2 L384.9 361.1 L384.1 363.8 L383.3 367.0 L382.3 370.2 L381.3 373.6 L380.3 376.8 L379.1 380.0 L377.9 383.1 L376.5 386.3 L375.1 389.3 L373.7 391.6 L372.2 392.8 L370.7 393.3 L369.2 393.4 L367.8 393.1 L366.4 392.5 L365.0 391.1 L363.9 388.7 L362.8 385.5 L361.9 382.2 L361.1 379.0 L360.3 375.7 L359.6 372.4 L359.0 368.9 L358.5 365.6 L358.1 362.4 L357.6 359.6 L357.0 357.6 L356.2 356.6 L355.3 356.2 L354.3 355.9 L353.3 355.7 L352.3 355.4 L351.3 355.1 L350.3 354.8 L349.4 354.5 L348.4 354.2 L347.4 353.9 L346.4 353.8 L345.1 354.3 L343.3 355.8 L341.2 358.0 L338.9 360.5 L336.4 363.0 L333.9 365.6 L331.3 368.0 L328.7 370.3 L326.1 372.5 L323.4 374.6 L320.7 376.6 L318.4 377.7 L316.6 378.0 L315.1 377.7 L313.7 377.2 L312.6 376.3 L311.6 375.1 L311.0 373.5 L311.0 371.0 L311.6 367.9 L312.3 364.6 L313.1 361.4 L314.0 358.2 L315.1 354.8 L316.3 351.5 L317.5 348.3 L318.7 345.2 L319.8 342.4 L320.3 340.2 L320.2 338.8 L319.6 338.0 L318.9 337.4 L318.1 336.7 L317.4 336.0 L316.7 335.4 L316.0 334.7 L315.2 334.0 L314.5 333.3 L313.8 332.6 L312.7 332.2 L311.0 332.4 L308.4 333.2 L305.2 334.3 L301.8 335.6 L298.2 336.8 L294.6 338.0 L291.1 339.1 L287.6 340.0 L284.0 340.8 L280.6 341.5 L277.9 341.6 L276.0 341.2 L274.5 340.4 L273.4 339.4 L272.6 338.3 L271.9 337.1 L271.5 335.7 L271.4 334.1 L271.9 332.3 L273.3 330.1 L275.5 327.5 L277.9 324.9 L280.4 322.4 L283.0 319.9 L285.8 317.4 L288.6 315.0 L291.4 312.7 L293.9 310.6 L295.8 308.8 L296.8 307.4 L296.9 306.3 L296.6 305.3 L296.3 304.4 L296.0 303.5 L295.7 302.6 L295.4 301.7 L295.1 300.7 L294.8 299.8 L294.4 298.9 L293.2 298.2 L290.9 297.7 L287.6 297.4 L283.9 297.0 L280.0 296.7 L276.0 296.2 L272.2 295.7 L268.4 295.0 L264.7 294.3 L261.4 293.4 L258.9 292.3 L257.3 291.1 L256.4 289.9 L255.7 288.5 L255.3 287.2 L255.1 285.8 L255.1 284.4 L255.4 283.0 L255.8 281.6 L256.6 280.2 L258.0 278.8 L260.3 277.5 L263.5 276.2 L267.1 275.1 L270.7 274.0 L274.5 273.0 L278.4 272.0 L282.2 271.2 L285.9 270.5 L289.1 269.7 L291.3 269.0 L292.3 268.1 L292.7 267.2 L292.8 266.2 L293.0 265.3 L293.2 264.3 L293.3 263.4 L293.5 262.4 L293.8 261.5 L293.8 260.5 L293.1 259.3 L291.2 257.8 L288.3 256.1 L285.1 254.1 L281.8 252.1 L278.5 249.9 L275.4 247.7 L272.4 245.5 L269.5 243.2 L267.0 241.0 L265.4 239.0 L264.7 237.3 L264.5 235.7 L264.7 234.3 L265.0 232.9 L265.5 231.6 L266.2 230.3 L267.0 229.2 L268.1 228.2 L269.5 227.2 L271.3 226.6 L273.9 226.4 L277.3 226.7 L281.0 227.2 L284.8 227.8 L288.6 228.6 L292.5 229.5 L296.3 230.4 L300.0 231.4 L303.3 232.2 L305.7 232.6 L307.1 232.3 L307.8 231.6 L308.4 230.9 L309.1 230.1 L309.7 229.3 L310.3 228.6 L311.0 227.8 L311.6 227.1 L312.1 226.2 L312.1 224.9 L311.1 222.7 L309.5 219.9 L307.6 216.8 L305.6 213.5 L303.8 210.1 L302.1 206.8 L300.5 203.5 L299.1 200.2 L298.0 197.1 L297.5 194.7 L297.8 192.8 L298.4 191.4 L299.2 190.1 L300.1 189.1 L301.2 188.1 L302.4 187.4 L303.8 186.7 L305.2 186.3 L306.9 186.1 L308.8 186.3 L311.2 187.3 L314.1 189.0 L317.1 191.1 L320.2 193.3 L323.2 195.7 L326.2 198.2 L329.1 200.7 L331.9 203.2 L334.4 205.4 L336.3 206.8 L337.7 207.1 L338.7 206.9 L339.6 206.4 L340.5 206.0 L341.5 205.6 L342.4 205.2 L343.3 204.8 L344.3 204.5 L345.2 203.9 L345.8 202.7 L346.0 200.4 L345.9 197.2 L345.8 193.6 L345.7 189.8 L345.7 186.0 L345.8 182.3 L346.0 178.7 L346.4 175.2 L346.9 172.0 L347.7 169.6 L348.8 168.1 L350.0 167.0 L351.4 166.3 L352.8 165.8Z"/>
<clipPath id="gc0"><use href="#go0" x="0.40" y="-9.90"/><use href="#go0" x="0.36" y="-9.14"/><use href="#go0" x="0.32" y="-8.34"/><use href="#go0" x="0.28" y="-7.48"/><use href="#go0" x="0.24" y="-6.56"/><use href="#go0" x="0.20" y="-5.60"/><use href="#go0" x="0.16" y="-4.58"/><use href="#go0" x="0.12" y="-3.52"/><use href="#go0" x="0.08" y="-2.40"/><use href="#go0" x="0.04" y="-1.22"/></clipPath>
<clipPath id="gd0"><use href="#go0" x="-2.80" y="-12.50"/><use href="#go0" x="-2.52" y="-11.25"/><use href="#go0" x="-2.24" y="-10.00"/><use href="#go0" x="-1.96" y="-8.75"/><use href="#go0" x="-1.68" y="-7.50"/><use href="#go0" x="-1.40" y="-6.25"/><use href="#go0" x="-1.12" y="-5.00"/><use href="#go0" x="-0.84" y="-3.75"/><use href="#go0" x="-0.56" y="-2.50"/><use href="#go0" x="-0.28" y="-1.25"/><use href="#go0" x="-0.00" y="-0.00"/></clipPath>
<clipPath id="gc1"><use href="#go1" x="0.40" y="-9.90"/><use href="#go1" x="0.36" y="-9.14"/><use href="#go1" x="0.32" y="-8.34"/><use href="#go1" x="0.28" y="-7.48"/><use href="#go1" x="0.24" y="-6.56"/><use href="#go1" x="0.20" y="-5.60"/><use href="#go1" x="0.16" y="-4.58"/><use href="#go1" x="0.12" y="-3.52"/><use href="#go1" x="0.08" y="-2.40"/><use href="#go1" x="0.04" y="-1.22"/></clipPath>
<clipPath id="gd1"><use href="#go1" x="-2.80" y="-12.50"/><use href="#go1" x="-2.52" y="-11.25"/><use href="#go1" x="-2.24" y="-10.00"/><use href="#go1" x="-1.96" y="-8.75"/><use href="#go1" x="-1.68" y="-7.50"/><use href="#go1" x="-1.40" y="-6.25"/><use href="#go1" x="-1.12" y="-5.00"/><use href="#go1" x="-0.84" y="-3.75"/><use href="#go1" x="-0.56" y="-2.50"/><use href="#go1" x="-0.28" y="-1.25"/><use href="#go1" x="-0.00" y="-0.00"/></clipPath>
<clipPath id="hole0"><ellipse cx="168.3" cy="245.4" rx="78.0" ry="73.94"/></clipPath>
<clipPath id="hole1"><ellipse cx="376.3" cy="278.6" rx="78.0" ry="73.94"/></clipPath>
</defs>
<rect x="0.00" y="0.00" width="572.50" height="32.00" fill="#ececf0"/>
<rect x="0.00" y="16.40" width="13.20" height="15.20" fill="#efeff3"/>
<rect x="14.20" y="16.40" width="58.20" height="15.20" fill="#efeff3"/>
<text x="211.0" y="10.86" font-size="8.36" fill="#5a5a5a" textLength="193.4" lengthAdjust="spacingAndGlyphs" stroke="#5a5a5a" stroke-width="0.22">A : spur_gear - Mechanical [ANSYS Mechanical Enterprise]</text>
<text x="-2.4" y="27.94" font-size="8.58" fill="#555" stroke="#555" stroke-width="0.22">n</text>
<text x="23.0" y="27.94" font-size="8.58" fill="#484848" textLength="40.0" lengthAdjust="spacingAndGlyphs" stroke="#484848" stroke-width="0.22">Automation</text>
<rect x="0.00" y="31.40" width="572.50" height="57.80" fill="#f7f7f8"/>
<line x1="0.00" y1="31.60" x2="572.50" y2="31.60" stroke="#d6d6d8" stroke-width="1.0"/>
<line x1="0.00" y1="89.20" x2="572.50" y2="89.20" stroke="#dedee0" stroke-width="0.9"/>
<path d="M11.4 37.6 L18.1 37.3 L15.4 42 L18.5 41.8 L15.8 47 L18.3 46.8 L8.9 55.2 L12.2 49.1 L8.6 49.3 L11 44.4 L7.1 44.7Z" fill="#f4dc14" stroke="#7a6a10" stroke-width="0.7"/>
<text x="3.0" y="67.94" font-size="8.58" fill="#333" textLength="17.6" lengthAdjust="spacingAndGlyphs" stroke="#333" stroke-width="0.22">Solve</text>
<path d="M9.0 73.4 h4 l-2 2.2z" fill="#777"/>
<path d="M22.4 79.4 h3.4 M22.4 79.4 v3.4 M24 81 l2.4 2.4 M26.4 81.6 v1.8 h-1.8" fill="none" stroke="#777" stroke-width="0.7"/>
<line x1="29.40" y1="36.00" x2="29.40" y2="84.00" stroke="#dadada" stroke-width="1.4"/>
<rect x="38.20" y="36.90" width="9.60" height="9.00" fill="#62c62e"/>
<rect x="49.00" y="36.90" width="9.60" height="9.00" fill="#e03c42"/>
<rect x="38.20" y="47.20" width="9.60" height="9.40" fill="#c8960e"/>
<rect x="49.00" y="47.20" width="9.60" height="9.40" fill="#62c62e"/>
<path d="M40.4 40.2 h5.6 M41.4 41.6 l1.8 2 l1.8 -2" fill="none" stroke="#e6f6df" stroke-width="0.9"/>
<rect x="52.2" y="38.6" width="3.2" height="5.6" rx="1.4" fill="none" stroke="#f7dada" stroke-width="0.9"/>
<path d="M41.2 50.6 h4 M43.2 49.2 v2.8 M41.2 54.2 h4" fill="none" stroke="#f6ecd0" stroke-width="0.9"/>
<path d="M51.2 49.6 h5.2 M53.8 49.6 v5 M51.6 50 l2.2 2.4 l2.2 -2.4" fill="none" stroke="#e6f6df" stroke-width="0.9"/>
<text x="35.0" y="67.94" font-size="8.58" fill="#333" textLength="26.4" lengthAdjust="spacingAndGlyphs" stroke="#333" stroke-width="0.22">Analysis</text>
<path d="M45.4 73.4 h4 l-2 2.2z" fill="#777"/>
<path d="M67.0 44.6 h8.6 v-2 l-2.6 -3.6 h-3.6 z M68 42.6 h6.6 M70 39.8 l2 -1 l2 2.6" fill="#ececec" stroke="#b4b4b4" stroke-width="0.8"/>
<text x="77.6" y="44.94" font-size="8.58" fill="#a8a8a8" textLength="56.0" lengthAdjust="spacingAndGlyphs" stroke="#a8a8a8" stroke-width="0.22">Named Selection</text>
<path d="M71.2 51.6 v8.8 M67 56 h8.4 M68.2 53 l6 6 M74.2 53 l-6 6" fill="none" stroke="#b0b0b0" stroke-width="0.8"/>
<text x="77.6" y="58.94" font-size="8.58" fill="#a8a8a8" textLength="63.0" lengthAdjust="spacingAndGlyphs" stroke="#a8a8a8" stroke-width="0.22">Coordinate System</text>
<path d="M67 71.6 l1.2 -3.6 l3.6 -1.4 l0.6 3.6 l-3.2 2.4z" fill="#b0b0b0"/>
<circle cx="73.6" cy="72.4" r="1.3" fill="#b0b0b0"/>
<text x="77.6" y="72.94" font-size="8.58" fill="#a8a8a8" textLength="45.0" lengthAdjust="spacingAndGlyphs" stroke="#a8a8a8" stroke-width="0.22">Remote Point</text>
<rect x="146.60" y="37.60" width="6.20" height="8.20" fill="#f4f4f4" stroke="#6a6a6a" stroke-width="0.8"/>
<path d="M147.8 39.6 h2.6 M147.8 41.4 h2.6 M147.8 43.2 h2" fill="none" stroke="#777" stroke-width="0.6"/>
<text x="150.4" y="46.18" font-size="8.14" fill="#d89a14" font-weight="bold">C</text>
<text x="157.0" y="44.94" font-size="8.58" fill="#333" textLength="37.4" lengthAdjust="spacingAndGlyphs" stroke="#333" stroke-width="0.22">Commands</text>
<path d="M146.8 52.6 h8.6 v5 h-4.6 l-1.6 1.8 v-1.8 h-2.4z" fill="#fbfbfb" stroke="#555" stroke-width="0.8"/>
<path d="M148.4 55.2 h5.2" fill="none" stroke="#888" stroke-width="0.6" stroke-dasharray="0.8 0.8"/>
<text x="157.0" y="58.94" font-size="8.58" fill="#333" textLength="32.2" lengthAdjust="spacingAndGlyphs" stroke="#333" stroke-width="0.22">Comment</text>
<rect x="147.00" y="71.20" width="1.40" height="2.80" fill="#999"/>
<rect x="149.20" y="69.60" width="1.40" height="4.40" fill="#999"/>
<rect x="151.40" y="70.60" width="1.40" height="3.40" fill="#999"/>
<rect x="153.60" y="68.80" width="1.40" height="5.20" fill="#999"/>
<path d="M146.8 69.4 l2.8 -2.2 l2 1.2 l3.4 -3" fill="none" stroke="#d89a14" stroke-width="1.0"/>
<text x="157.0" y="72.94" font-size="8.58" fill="#333" textLength="17.4" lengthAdjust="spacingAndGlyphs" stroke="#333" stroke-width="0.22">Chart</text>
<text x="138.0" y="83.54" font-size="8.58" fill="#333" textLength="17.6" lengthAdjust="spacingAndGlyphs" stroke="#333" stroke-width="0.22">Insert</text>
<rect x="200.4" y="38.6" width="8.6" height="6.6" rx="0.8" fill="#f0f0f0" stroke="#555" stroke-width="0.8"/>
<rect x="202.20" y="37.40" width="2.40" height="1.20" fill="#555"/>
<circle cx="204.8" cy="41.8" r="2.0" fill="#c9961a" stroke="#7a5a10" stroke-width="0.5"/>
<text x="210.6" y="44.94" font-size="8.58" fill="#333" textLength="23.4" lengthAdjust="spacingAndGlyphs" stroke="#333" stroke-width="0.22">Images</text>
<path d="M235.4 40.6 h4 l-2 2.2z" fill="#666"/>
<rect x="200.60" y="52.00" width="4.40" height="8.00" fill="#f4f4f4" stroke="#555" stroke-width="0.8"/>
<rect x="205.00" y="52.00" width="4.00" height="8.00" fill="#c9961a" stroke="#6a5010" stroke-width="0.8"/>
<rect x="200.00" y="51.40" width="1.80" height="1.80" fill="#e02020"/>
<text x="210.6" y="58.94" font-size="8.58" fill="#333" textLength="45.6" lengthAdjust="spacingAndGlyphs" stroke="#333" stroke-width="0.22">Section Plane</text>
<path d="M200.6 66.6 h8.4 v5 l-1.6 1.8 h-6.8z" fill="#f0d030" stroke="#8a7a10" stroke-width="0.8"/>
<path d="M202 69.4 h5.4 M202 71 h4" fill="none" stroke="#8a7a10" stroke-width="0.5"/>
<rect x="207.60" y="65.40" width="1.80" height="1.80" fill="#e02020"/>
<text x="210.6" y="72.94" font-size="8.58" fill="#333" textLength="39.0" lengthAdjust="spacingAndGlyphs" stroke="#333" stroke-width="0.22">Annotation</text>
<line x1="262.00" y1="36.00" x2="262.00" y2="84.00" stroke="#dadada" stroke-width="1.4"/>
<rect x="271.00" y="37.00" width="19.00" height="19.00" fill="#f0c43c"/>
<path d="M274.4 41.8 h12.2" fill="none" stroke="#3c3c3c" stroke-width="1.6"/>
<path d="M271.8 41.8 l3.8 -2.8 v5.6z M289.2 41.8 l-3.8 -2.8 v5.6z" fill="#3c3c3c"/>
<text x="272.2" y="53.81" font-size="9.9" fill="#3c3c3c" textLength="17.0" lengthAdjust="spacingAndGlyphs" font-weight="bold">m ft</text>
<text x="271.4" y="67.94" font-size="8.58" fill="#333" textLength="17.6" lengthAdjust="spacingAndGlyphs" stroke="#333" stroke-width="0.22">Units</text>
<path d="M277.4 73.4 h4 l-2 2.2z" fill="#777"/>
<path d="M305.8 37.6 h10.6 l5.4 5.2 v12.8 h-16z" fill="#fafafa" stroke="#7c7c7c" stroke-width="1.7"/>
<path d="M316.4 37.6 v5.2 h5.4" fill="none" stroke="#7c7c7c" stroke-width="1.3"/>
<path d="M308.6 43.4 h5.4 M308.6 46.8 h7.4 M308.6 50.8 h5.6" fill="none" stroke="#7c7c7c" stroke-width="1.3"/>
<path d="M321.6 44.6 l-5.4 8 l-0.8 2.6 l2.4 -1.4 l5.2 -8z" fill="#e8e8e8" stroke="#d8d8d8" stroke-width="0.6"/>
<text x="296.0" y="67.94" font-size="8.58" fill="#a8a8a8" textLength="36.4" lengthAdjust="spacingAndGlyphs" stroke="#a8a8a8" stroke-width="0.22">Worksheet</text>
<rect x="344.20" y="39.20" width="19.80" height="14.60" fill="#2b2b2b"/>
<rect x="344.20" y="42.00" width="19.80" height="9.00" fill="#d7a41c"/>
<rect x="345.20" y="39.90" width="1.50" height="1.40" fill="#f4f4f4"/>
<rect x="345.20" y="51.70" width="1.50" height="1.40" fill="#f4f4f4"/>
<rect x="347.95" y="39.90" width="1.50" height="1.40" fill="#f4f4f4"/>
<rect x="347.95" y="51.70" width="1.50" height="1.40" fill="#f4f4f4"/>
<rect x="350.70" y="39.90" width="1.50" height="1.40" fill="#f4f4f4"/>
<rect x="350.70" y="51.70" width="1.50" height="1.40" fill="#f4f4f4"/>
<rect x="353.45" y="39.90" width="1.50" height="1.40" fill="#f4f4f4"/>
<rect x="353.45" y="51.70" width="1.50" height="1.40" fill="#f4f4f4"/>
<rect x="356.20" y="39.90" width="1.50" height="1.40" fill="#f4f4f4"/>
<rect x="356.20" y="51.70" width="1.50" height="1.40" fill="#f4f4f4"/>
<rect x="358.95" y="39.90" width="1.50" height="1.40" fill="#f4f4f4"/>
<rect x="358.95" y="51.70" width="1.50" height="1.40" fill="#f4f4f4"/>
<rect x="361.70" y="39.90" width="1.50" height="1.40" fill="#f4f4f4"/>
<rect x="361.70" y="51.70" width="1.50" height="1.40" fill="#f4f4f4"/>
<circle cx="350.6" cy="46.5" r="1.9" fill="none" stroke="#3a2a00" stroke-width="1.1"/>
<path d="M352.6 46.5 h6.6 M357.2 46.5 v1.8 M359.0 46.5 v1.6" fill="none" stroke="#3a2a00" stroke-width="1.1"/>
<text x="338.6" y="67.94" font-size="8.58" fill="#333" textLength="30.8" lengthAdjust="spacingAndGlyphs" stroke="#333" stroke-width="0.22">Keyframe</text>
<text x="336.4" y="74.74" font-size="8.58" fill="#333" textLength="34.6" lengthAdjust="spacingAndGlyphs" stroke="#333" stroke-width="0.22">Animation</text>
<path d="M377.0 38.4 l3.2 -0.4 l4.6 4.6 l-3.0 3.0 l-4.6 -4.6z" fill="#f4ecd8" stroke="#555" stroke-width="0.8"/>
<circle cx="378.8" cy="40.0" r="0.7" fill="#555"/>
<path d="M380.4 41.0 l3.6 3.6" fill="none" stroke="#c9961a" stroke-width="1.0"/>
<text x="386.6" y="44.94" font-size="8.58" fill="#333" textLength="15.0" lengthAdjust="spacingAndGlyphs" stroke="#333" stroke-width="0.22">Tags</text>
<circle cx="380.6" cy="56.0" r="4.4" fill="#62c242" stroke="#3a9a2a" stroke-width="0.7"/>
<path d="M378.2 56.0 l1.8 2.0 l3.2 -3.8" fill="none" stroke="#fff" stroke-width="1.3"/>
<text x="386.6" y="58.94" font-size="8.58" fill="#333" textLength="23.4" lengthAdjust="spacingAndGlyphs" stroke="#333" stroke-width="0.22">Wizard</text>
<path d="M376.6 65.4 h5.4 l2.6 2.6 v6.4 h-8z" fill="#fafafa" stroke="#555" stroke-width="0.8"/>
<path d="M378.6 68 v3 M378.6 72.2 v0.8" fill="none" stroke="#d89a14" stroke-width="1.1"/>
<path d="M381 71.6 h3 M381 73 h2" fill="none" stroke="#777" stroke-width="0.6"/>
<text x="386.6" y="72.94" font-size="8.58" fill="#333" textLength="40.8" lengthAdjust="spacingAndGlyphs" stroke="#333" stroke-width="0.22">Show Errors</text>
<text x="421.4" y="83.54" font-size="8.58" fill="#333" textLength="17.6" lengthAdjust="spacingAndGlyphs" stroke="#333" stroke-width="0.22">Tools</text>
<path d="M433.4 40.4 l2.4 -2.4 h6.2 v5.6 l-2.4 2.4 h-6.2z M433.4 40.4 h6.2 v5.6 M439.6 40.4 l2.4 -2.4" fill="#f6f6f6" stroke="#555" stroke-width="0.8"/>
<rect x="434.80" y="42.00" width="3.40" height="2.60" fill="#e8c04a"/>
<text x="444.0" y="44.94" font-size="8.58" fill="#333" textLength="49.0" lengthAdjust="spacingAndGlyphs" stroke="#333" stroke-width="0.22">Manage Views</text>
<rect x="433.40" y="52.00" width="8.60" height="8.00" fill="#f6f6f6" stroke="#b0b0b0" stroke-width="0.8"/>
<text x="435.0" y="59.02" font-size="7.7" fill="#aaa" font-weight="bold">i</text>
<path d="M438 55 l2.6 3" fill="none" stroke="#b0b0b0" stroke-width="0.8"/>
<text x="444.0" y="58.94" font-size="8.58" fill="#a8a8a8" textLength="73.0" lengthAdjust="spacingAndGlyphs" stroke="#a8a8a8" stroke-width="0.22">Selection Information</text>
<rect x="433.20" y="65.60" width="9.00" height="8.80" fill="#e3aa1e"/>
<path d="M434.4 68 h6.6 M435.6 66.8 l-1.2 1.2 l1.2 1.2 M439.8 66.8 l1.2 1.2 l-1.2 1.2" fill="none" stroke="#3a2a00" stroke-width="0.7"/>
<text x="434.0" y="73.67" font-size="5.06" fill="#3a2a00" textLength="7.4" lengthAdjust="spacingAndGlyphs" font-weight="bold">m ft</text>
<text x="444.0" y="72.94" font-size="8.58" fill="#333" textLength="49.0" lengthAdjust="spacingAndGlyphs" stroke="#333" stroke-width="0.22">Unit Converter</text>
<clipPath id="winclip"><rect x="0" y="0" width="572.5" height="531"/></clipPath>
<g clip-path="url(#winclip)">
<rect x="523.00" y="40.40" width="8.00" height="4.60" fill="#3a3a3a"/>
<rect x="524.40" y="38.20" width="4.60" height="2.40" fill="#f4f4f4" stroke="#555" stroke-width="0.6"/>
<rect x="524.20" y="42.80" width="5.60" height="2.00" fill="#e3aa1e"/>
<circle cx="529.6" cy="38.4" r="1.9" fill="#fdfdfd" stroke="#777" stroke-width="0.7"/>
<text x="533.6" y="44.94" font-size="8.58" fill="#333" textLength="45.4" lengthAdjust="spacingAndGlyphs" stroke="#333" stroke-width="0.22">Print Preview</text>
<path d="M523 59.4 l2 -3 l2.2 1.2 l2.2 -3.4" fill="none" stroke="#d89a14" stroke-width="1.1"/>
<rect x="523.20" y="58.20" width="1.60" height="2.20" fill="#777"/>
<rect x="525.60" y="57.40" width="1.60" height="3.00" fill="#777"/>
<circle cx="529.8" cy="52.4" r="1.9" fill="#fdfdfd" stroke="#777" stroke-width="0.7"/>
<line x1="531.00" y1="53.80" x2="532.40" y2="55.40" stroke="#777" stroke-width="0.8"/>
<text x="533.6" y="58.94" font-size="8.58" fill="#333" textLength="51.6" lengthAdjust="spacingAndGlyphs" stroke="#333" stroke-width="0.22">Report Preview</text>
<rect x="523.00" y="66.40" width="9.00" height="6.20" fill="#e8c04a" stroke="#5a4a10" stroke-width="0.9"/>
<rect x="524.40" y="67.80" width="6.20" height="3.00" fill="#f6dc7a"/>
<text x="533.6" y="72.94" font-size="8.58" fill="#333" textLength="56.0" lengthAdjust="spacingAndGlyphs" stroke="#333" stroke-width="0.22">Key Assignments</text>
</g>
<rect x="0.00" y="89.60" width="572.50" height="17.40" fill="#f0f0f0"/>
<g transform="translate(0 0.4)">
<rect x="2.4" y="92" width="3" height="12" fill="url(#grip2)"/>
<circle cx="17.4" cy="97.4" r="3.6" fill="#f6f6f6" stroke="#4a4a4a" stroke-width="1.1"/>
<line x1="20.00" y1="100.20" x2="22.40" y2="102.80" stroke="#4a4a4a" stroke-width="1.5"/>
<circle cx="17.4" cy="97.4" r="1.9" fill="#e3aa1e"/>
<circle cx="32.0" cy="97.4" r="3.6" fill="#f6f6f6" stroke="#a8a8a8" stroke-width="1.1"/>
<line x1="34.60" y1="100.20" x2="37.00" y2="102.80" stroke="#a8a8a8" stroke-width="1.5"/>
<line x1="41.20" y1="91.00" x2="41.20" y2="105.00" stroke="#dadada" stroke-width="1"/>
<rect x="44.20" y="90.40" width="14.00" height="14.60" fill="#dcebfa" stroke="#6aa6e8" stroke-width="0.9"/>
<path d="M47.4 95.2 l3.8 -1.8 l3.8 1.8 v4.8 l-3.8 2 l-3.8 -2z" fill="#5a5a5a" stroke="#2a2a2a" stroke-width="0.7"/>
<path d="M47.4 95.2 l3.8 1.8 l3.8 -1.8 M51.2 97 v5" fill="none" stroke="#2a2a2a" stroke-width="0.6"/>
<path d="M47.4 95.2 l3.8 -1.8 l3.8 1.8 l-3.8 1.8z" fill="#8a8a8a"/>
<path d="M62.0 95.4 l3.8 -1.8 l3.8 1.8 v4.6 l-3.8 2 l-3.8 -2z" fill="#9a9a9a"/>
<path d="M62.0 95.4 l3.8 -1.8 l3.8 1.8 l-3.8 1.8z" fill="#c8c8c8"/>
<circle cx="80.4" cy="97.6" r="4.6" fill="#7a7a7a"/>
<path d="M77 96 l3 -2 l2 2.4 l-2.8 1.6z M80.4 99.4 l3 -1.4 l0.6 2.6 l-2.4 1z" fill="#e8b83a"/>
<path d="M76.6 99.4 l2.4 -0.6 l0.8 2.6z M82.4 94 l2 1.4 l-1.4 1z" fill="#f4f4f4"/>
<line x1="89.60" y1="91.00" x2="89.60" y2="105.00" stroke="#dadada" stroke-width="1"/>
<rect x="94.40" y="93.00" width="3.40" height="3.40" fill="none" stroke="#8a8a8a" stroke-width="0.8"/>
<rect x="99.00" y="97.60" width="4.40" height="4.40" fill="none" stroke="#9a9a9a" stroke-width="0.8"/>
<path d="M99 99.8 h4.4 M101.2 97.6 v4.4" fill="none" stroke="#9a9a9a" stroke-width="0.6"/>
<line x1="107.60" y1="91.00" x2="107.60" y2="105.00" stroke="#dadada" stroke-width="1"/>
<rect x="110.40" y="90.40" width="21.00" height="14.60" fill="#f5f9fd" stroke="#6aa6e8" stroke-width="0.9"/>
<path d="M113.6 96.6 a4.0 4.0 0 0 1 7.4 -1.0 M121.4 98.6 a4.0 4.0 0 0 1 -7.4 1.0" fill="none" stroke="#6a6a6a" stroke-width="1.0"/>
<rect x="112.80" y="95.40" width="1.60" height="1.60" fill="#e0a020"/>
<rect x="120.60" y="98.40" width="1.60" height="1.60" fill="#e0a020"/>
<path d="M126.2 96.4 h4 l-2 2.2z" fill="#666"/>
<path d="M139.2 93.2 l1.9 2.2 h-3.8z M139.2 102.0 l1.9 -2.2 h-3.8z M134.8 97.6 l2.2 -1.9 v3.8z M143.6 97.6 l-2.2 -1.9 v3.8z" fill="#d89a14"/>
<circle cx="139.2" cy="97.6" r="0.9" fill="#555"/>
<circle cx="153.6" cy="97.0" r="3.6" fill="#f6f6f6" stroke="#4a4a4a" stroke-width="1.1"/>
<line x1="156.20" y1="99.80" x2="158.60" y2="102.40" stroke="#4a4a4a" stroke-width="1.5"/>
<circle cx="153.6" cy="97.0" r="1.9" fill="#e3aa1e"/>
<circle cx="168.0" cy="97.0" r="3.6" fill="#f6f6f6" stroke="#4a4a4a" stroke-width="1.1"/>
<line x1="170.60" y1="99.80" x2="173.00" y2="102.40" stroke="#4a4a4a" stroke-width="1.5"/>
<circle cx="168.0" cy="97.0" r="1.9" fill="#e3aa1e"/>
<circle cx="182.6" cy="97.0" r="3.6" fill="#f6f6f6" stroke="#666" stroke-width="1.1"/>
<line x1="185.20" y1="99.80" x2="187.60" y2="102.40" stroke="#666" stroke-width="1.5"/>
<circle cx="182.6" cy="97.0" r="1.9" fill="#4a78b8"/>
<circle cx="197.6" cy="97.0" r="3.6" fill="#f6f6f6" stroke="#666" stroke-width="1.1"/>
<line x1="200.20" y1="99.80" x2="202.60" y2="102.40" stroke="#666" stroke-width="1.5"/>
<circle cx="197.6" cy="97.0" r="1.9" fill="#3aa040"/>
<line x1="206.60" y1="91.00" x2="206.60" y2="105.00" stroke="#dadada" stroke-width="1"/>
<text x="211.8" y="100.54" font-size="8.58" fill="#333" textLength="20.6" lengthAdjust="spacingAndGlyphs" stroke="#333" stroke-width="0.22">Select</text>
<rect x="237.60" y="93.60" width="3.40" height="3.00" fill="#e02020"/>
<path d="M241.4 95.4 v6.4 l1.7 -1.5 l1.2 2.4 l1.1 -0.5 l-1.2 -2.4 h2.2z" fill="#222"/>
<text x="249.2" y="100.54" font-size="8.58" fill="#333" textLength="18.6" lengthAdjust="spacingAndGlyphs" stroke="#333" stroke-width="0.22">Mode</text>
<path d="M270.6 96.6 h4 l-2 2.2z" fill="#666"/>
<path d="M282.2 97.0 v-3.6 h2.4 M282.2 95.10000000000001 h1.8" fill="none" stroke="#a2a2a2" stroke-width="0.9"/>
<path d="M285.6 97.0 v-3.6 h2.4 M285.6 95.10000000000001 h1.8" fill="none" stroke="#a2a2a2" stroke-width="0.9"/>
<path d="M289.0 97.0 v-3.6 h2.4 M289.0 95.10000000000001 h1.8" fill="none" stroke="#a2a2a2" stroke-width="0.9"/>
<path d="M282.2 101.6 v-3.6 h2.4 M282.2 99.7 h1.8" fill="none" stroke="#a2a2a2" stroke-width="0.9"/>
<path d="M285.6 101.6 v-3.6 h2.4 M285.6 99.7 h1.8" fill="none" stroke="#a2a2a2" stroke-width="0.9"/>
<path d="M289.6 98.6 l1.6 2.4" fill="none" stroke="#8a8a8a" stroke-width="1.1"/>
<path d="M297.6 95.80000000000001 l2.4 -2.4 h6.6 v6.6 l-2.4 2.4 h-6.6z" fill="#fafafa" stroke="#8c8c8c" stroke-width="0.8"/>
<path d="M297.6 95.80000000000001 l2.4 -2.4 h6.6 l-2.4 2.4z" fill="#ededed" stroke="#8c8c8c" stroke-width="0.6"/>
<path d="M304.20000000000005 95.80000000000001 l2.4 -2.4 v6.6 l-2.4 2.4z" fill="#e2e2e2" stroke="#8c8c8c" stroke-width="0.6"/>
<rect x="300.00" y="98.00" width="3.80" height="3.80" fill="#fdfdfd" stroke="#8c8c8c" stroke-width="0.7"/>
<path d="M301.20000000000005 99.2 l1.4 1.4" fill="none" stroke="#8c8c8c" stroke-width="0.8"/>
<path d="M312.2 95.80000000000001 l2.4 -2.4 h6.6 v6.6 l-2.4 2.4 h-6.6z" fill="#fafafa" stroke="#8c8c8c" stroke-width="0.8"/>
<path d="M312.2 95.80000000000001 l2.4 -2.4 h6.6 l-2.4 2.4z" fill="#ededed" stroke="#8c8c8c" stroke-width="0.6"/>
<path d="M318.8 95.80000000000001 l2.4 -2.4 v6.6 l-2.4 2.4z" fill="#e2e2e2" stroke="#8c8c8c" stroke-width="0.6"/>
<rect x="314.60" y="98.00" width="3.80" height="3.80" fill="#fdfdfd" stroke="#8c8c8c" stroke-width="0.7"/>
<path d="M315.8 99.2 l1.4 1.4" fill="none" stroke="#8c8c8c" stroke-width="0.8"/>
<path d="M326.6 95.80000000000001 l2.4 -2.4 h6.6 v6.6 l-2.4 2.4 h-6.6z" fill="#fafafa" stroke="#8c8c8c" stroke-width="0.8"/>
<path d="M326.6 95.80000000000001 l2.4 -2.4 h6.6 l-2.4 2.4z" fill="#ededed" stroke="#8c8c8c" stroke-width="0.6"/>
<path d="M333.20000000000005 95.80000000000001 l2.4 -2.4 v6.6 l-2.4 2.4z" fill="#e2e2e2" stroke="#8c8c8c" stroke-width="0.6"/>
<rect x="329.00" y="98.00" width="3.80" height="3.80" fill="#fdfdfd" stroke="#8c8c8c" stroke-width="0.7"/>
<path d="M330.20000000000005 99.2 l1.4 1.4" fill="none" stroke="#8c8c8c" stroke-width="0.8"/>
<path d="M341.4 95.80000000000001 l2.4 -2.4 h6.6 v6.6 l-2.4 2.4 h-6.6z" fill="#b4b4b4" stroke="#8a8a8a" stroke-width="0.8"/>
<path d="M341.4 95.80000000000001 l2.4 -2.4 h6.6 l-2.4 2.4z" fill="#c4c4c4" stroke="#8a8a8a" stroke-width="0.6"/>
<path d="M348.0 95.80000000000001 l2.4 -2.4 v6.6 l-2.4 2.4z" fill="#a4a4a4" stroke="#8a8a8a" stroke-width="0.6"/>
<rect x="343.00" y="97.40" width="3.60" height="3.60" fill="#9a9a9a"/>
<path d="M356.0 95.80000000000001 l2.4 -2.4 h6.6 v6.6 l-2.4 2.4 h-6.6z" fill="#cfe2f8" stroke="#4a4a4a" stroke-width="0.8"/>
<path d="M356.0 95.80000000000001 l2.4 -2.4 h6.6 l-2.4 2.4z" fill="#7ab0e8" stroke="#4a4a4a" stroke-width="0.6"/>
<path d="M362.6 95.80000000000001 l2.4 -2.4 v6.6 l-2.4 2.4z" fill="#a8c8ee" stroke="#4a4a4a" stroke-width="0.6"/>
<path d="M358.2 95.8 v6.6 M360.4 95.8 v6.6 M356.0 98.0 h6.6 M356.0 100.2 h6.6" fill="none" stroke="#5a8ad0" stroke-width="0.6"/>
<path d="M370.6 95.80000000000001 l2.4 -2.4 h6.6 v6.6 l-2.4 2.4 h-6.6z" fill="#cfe2f8" stroke="#4a4a4a" stroke-width="0.8"/>
<path d="M370.6 95.80000000000001 l2.4 -2.4 h6.6 l-2.4 2.4z" fill="#2aa02a" stroke="#4a4a4a" stroke-width="0.6"/>
<path d="M377.20000000000005 95.80000000000001 l2.4 -2.4 v6.6 l-2.4 2.4z" fill="#a8c8ee" stroke="#4a4a4a" stroke-width="0.6"/>
<path d="M372.8 95.8 v6.6 M375.0 95.8 v6.6 M370.6 98.0 h6.6 M370.6 100.2 h6.6" fill="none" stroke="#5a8ad0" stroke-width="0.6"/>
<path d="M385.4 95.80000000000001 l2.4 -2.4 h6.6 v6.6 l-2.4 2.4 h-6.6z" fill="#cfe2f8" stroke="#4a4a4a" stroke-width="0.8"/>
<path d="M385.4 95.80000000000001 l2.4 -2.4 h6.6 l-2.4 2.4z" fill="#9ac0ea" stroke="#4a4a4a" stroke-width="0.6"/>
<path d="M392.0 95.80000000000001 l2.4 -2.4 v6.6 l-2.4 2.4z" fill="#a8c8ee" stroke="#4a4a4a" stroke-width="0.6"/>
<rect x="387.00" y="97.40" width="3.60" height="3.60" fill="#2a9a2a"/>
<path d="M387.59999999999997 95.8 v6.6 M389.79999999999995 95.8 v6.6 M385.4 98.0 h6.6 M385.4 100.2 h6.6" fill="none" stroke="#5a8ad0" stroke-width="0.6"/>
<rect x="387.00" y="97.20" width="3.60" height="3.60" fill="#2a9a2a"/>
<path d="M399.6 93.2 h1.4 M402.6 93.2 h1.4 M405.6 93.2 h1.4 M402 96.4 l1.4 3.4 M404.6 99 l1 1.6" fill="none" stroke="#c4c4c4" stroke-width="0.9"/>
<path d="M414.8 93.6 h7.4 l1.8 2.2 l-1.8 2.2 h-7.4z" fill="#a4a4a4" stroke="#6e6e6e" stroke-width="0.7"/>
<path d="M416.2 95.8 h5.2" fill="none" stroke="#ededed" stroke-width="0.9" stroke-dasharray="1.2 0.6"/>
<path d="M418.6 98.2 l2.0 4.0" fill="none" stroke="#e0a020" stroke-width="1.5"/>
<path d="M429.6 94.6 h6.6 l2.2 3.0 l-2.2 3.4 h-6.6z" fill="#dedede" stroke="#b8b8b8" stroke-width="0.8"/>
<path d="M431.0 97.4 h4.2 M431.0 99.2 h3.0 M436.2 100.6 l1.4 1.4" fill="none" stroke="#b0b0b0" stroke-width="0.8"/>
<line x1="442.40" y1="91.00" x2="442.40" y2="105.00" stroke="#dadada" stroke-width="1"/>
<rect x="448.00" y="93.80" width="8.80" height="9.00" fill="#f2cc44" stroke="#5a5230" stroke-width="0.9"/>
<rect x="448.00" y="93.80" width="8.80" height="1.60" fill="#5a5230"/>
<rect x="451.20" y="94.00" width="2.40" height="1.20" fill="#f2cc44"/>
<text x="459.2" y="100.54" font-size="8.58" fill="#333" textLength="34.0" lengthAdjust="spacingAndGlyphs" stroke="#333" stroke-width="0.22">Clipboard</text>
<path d="M494.8 96.6 h4 l-2 2.2z" fill="#666"/>
<text x="506.2" y="100.54" font-size="8.58" fill="#333" textLength="32.4" lengthAdjust="spacingAndGlyphs" stroke="#333" stroke-width="0.22">[ Empty ]</text>
<line x1="543.60" y1="91.00" x2="543.60" y2="105.00" stroke="#dadada" stroke-width="1"/>
<path d="M548.6 96.0 l4 -2.4 l4 2.4 v4.4 l-4 2.2 l-4 -2.2z" fill="#f4f4f4" stroke="#555" stroke-width="0.8"/>
<path d="M548.6 96.0 l4 2.2 l4 -2.2 M552.6 98.2 v4.4" fill="none" stroke="#555" stroke-width="0.6"/>
<path d="M548.6 96.0 l4 -2.4 l4 2.4 l-4 2.2z" fill="#5aba4a"/>
<rect x="554.20" y="93.00" width="2.20" height="2.20" fill="#e02020"/>
<g clip-path="url(#winclip)">
<text x="559.4" y="100.54" font-size="8.58" fill="#333" textLength="23.0" lengthAdjust="spacingAndGlyphs" stroke="#333" stroke-width="0.22">Extend</text>
</g>
</g>
<rect x="0.00" y="107.00" width="572.50" height="259.60" fill="url(#sky)"/>
<g clip-path="url(#vclip)">
<text x="6.2" y="124.90" font-size="9.02" fill="#0a0a1c" textLength="44.4" lengthAdjust="spacingAndGlyphs" font-weight="bold">A: spur_gear</text>
<text x="6.3" y="134.90" font-size="9.02" fill="#14142a" textLength="51.6" lengthAdjust="spacingAndGlyphs" stroke="#14142a" stroke-width="0.22">Stress Intensity</text>
<text x="6.3" y="144.80" font-size="9.02" fill="#14142a" textLength="72.4" lengthAdjust="spacingAndGlyphs" stroke="#14142a" stroke-width="0.22">Type: Stress Intensity</text>
<text x="6.3" y="154.60" font-size="9.02" fill="#14142a" textLength="34.0" lengthAdjust="spacingAndGlyphs" stroke="#14142a" stroke-width="0.22">Unit: MPa</text>
<text x="6.3" y="164.40" font-size="9.02" fill="#14142a" textLength="25.6" lengthAdjust="spacingAndGlyphs" stroke="#14142a" stroke-width="0.22">Time: 6</text>
<text x="6.3" y="174.20" font-size="9.02" fill="#14142a" textLength="57.6" lengthAdjust="spacingAndGlyphs" stroke="#14142a" stroke-width="0.22">12-03-2021 03:13</text>
<rect x="6.20" y="190.20" width="10.20" height="101.20" fill="#000"/>
<rect x="7.00" y="191.80" width="8.60" height="10.30" fill="#ff0000"/>
<rect x="7.00" y="202.80" width="8.60" height="10.30" fill="#ffa800"/>
<rect x="7.00" y="213.80" width="8.60" height="10.30" fill="#ffff00"/>
<rect x="7.00" y="224.80" width="8.60" height="10.30" fill="#b4ff00"/>
<rect x="7.00" y="235.80" width="8.60" height="10.30" fill="#00ff00"/>
<rect x="7.00" y="246.80" width="8.60" height="10.30" fill="#00ffa8"/>
<rect x="7.00" y="257.80" width="8.60" height="10.30" fill="#00ffff"/>
<rect x="7.00" y="268.80" width="8.60" height="10.30" fill="#00a8ff"/>
<rect x="7.00" y="279.80" width="8.60" height="10.30" fill="#0000ff"/>
<text x="22.1" y="193.34" font-size="8.58" fill="#101024" textLength="42.7" lengthAdjust="spacingAndGlyphs" font-weight="bold">483.72 Max</text>
<text x="22.1" y="204.40" font-size="8.58" fill="#101024" textLength="22.0" lengthAdjust="spacingAndGlyphs" stroke="#101024" stroke-width="0.22">429.97</text>
<text x="22.1" y="215.46" font-size="8.58" fill="#101024" textLength="22.0" lengthAdjust="spacingAndGlyphs" stroke="#101024" stroke-width="0.22">376.23</text>
<text x="22.1" y="226.52" font-size="8.58" fill="#101024" textLength="22.0" lengthAdjust="spacingAndGlyphs" stroke="#101024" stroke-width="0.22">322.48</text>
<text x="22.1" y="237.58" font-size="8.58" fill="#101024" textLength="22.0" lengthAdjust="spacingAndGlyphs" stroke="#101024" stroke-width="0.22">268.73</text>
<text x="22.1" y="248.64" font-size="8.58" fill="#101024" textLength="22.0" lengthAdjust="spacingAndGlyphs" stroke="#101024" stroke-width="0.22">214.99</text>
<text x="22.1" y="259.70" font-size="8.58" fill="#101024" textLength="22.0" lengthAdjust="spacingAndGlyphs" stroke="#101024" stroke-width="0.22">161.24</text>
<text x="22.1" y="270.76" font-size="8.58" fill="#101024" textLength="22.0" lengthAdjust="spacingAndGlyphs" stroke="#101024" stroke-width="0.22">107.49</text>
<text x="22.1" y="281.82" font-size="8.58" fill="#101024" textLength="22.0" lengthAdjust="spacingAndGlyphs" stroke="#101024" stroke-width="0.22">53.747</text>
<text x="22.1" y="292.88" font-size="8.58" fill="#101024" textLength="53.1" lengthAdjust="spacingAndGlyphs" font-weight="bold">3.4637e-5 Min</text>
<use href="#go0" x="-4.10" y="-13.10" fill="#02021e"/>
<use href="#go0" x="-3.82" y="-11.85" fill="#02021e"/>
<use href="#go0" x="-3.54" y="-10.60" fill="#02021e"/>
<use href="#go0" x="-3.26" y="-9.35" fill="#02021e"/>
<use href="#go0" x="-2.98" y="-8.10" fill="#02021e"/>
<use href="#go0" x="-2.70" y="-6.85" fill="#02021e"/>
<use href="#go0" x="-2.42" y="-5.60" fill="#02021e"/>
<use href="#go0" x="-2.14" y="-4.35" fill="#02021e"/>
<use href="#go0" x="-1.86" y="-3.10" fill="#02021e"/>
<use href="#go0" x="-1.58" y="-1.85" fill="#02021e"/>
<use href="#go0" x="-1.30" y="-0.60" fill="#02021e"/>
<g clip-path="url(#gd0)"><rect x="33.30000000000001" y="107.0" width="270" height="259.6" fill="url(#meshd)" clip-path="url(#gc0)"/></g>
<use href="#go1" x="-4.10" y="-13.10" fill="#02021e"/>
<use href="#go1" x="-3.82" y="-11.85" fill="#02021e"/>
<use href="#go1" x="-3.54" y="-10.60" fill="#02021e"/>
<use href="#go1" x="-3.26" y="-9.35" fill="#02021e"/>
<use href="#go1" x="-2.98" y="-8.10" fill="#02021e"/>
<use href="#go1" x="-2.70" y="-6.85" fill="#02021e"/>
<use href="#go1" x="-2.42" y="-5.60" fill="#02021e"/>
<use href="#go1" x="-2.14" y="-4.35" fill="#02021e"/>
<use href="#go1" x="-1.86" y="-3.10" fill="#02021e"/>
<use href="#go1" x="-1.58" y="-1.85" fill="#02021e"/>
<use href="#go1" x="-1.30" y="-0.60" fill="#02021e"/>
<g clip-path="url(#gd1)"><rect x="241.3" y="107.0" width="270" height="259.6" fill="url(#meshd)" clip-path="url(#gc1)"/></g>
<use href="#go0" fill="url(#mesh)" stroke="#020226" stroke-width="1.2" stroke-opacity="0.7"/>
<g clip-path="url(#hole0)"><ellipse cx="168.3" cy="245.4" rx="80.0" ry="75.94" fill="url(#meshd)"/><ellipse cx="165.5" cy="232.9" rx="78.0" ry="73.94" fill="url(#sky2)" stroke="#01011c" stroke-width="4.6"/></g>
<ellipse cx="168.3" cy="245.4" rx="78.4" ry="74.34" fill="none" stroke="#020226" stroke-width="1.6" stroke-opacity="0.8"/>
<use href="#go1" fill="url(#mesh)" stroke="#020226" stroke-width="1.2" stroke-opacity="0.7"/>
<g clip-path="url(#hole1)"><ellipse cx="376.3" cy="278.6" rx="80.0" ry="75.94" fill="url(#meshd)"/><ellipse cx="373.5" cy="266.1" rx="78.0" ry="73.94" fill="url(#sky2)" stroke="#01011c" stroke-width="4.6"/></g>
<ellipse cx="376.3" cy="278.6" rx="78.4" ry="74.34" fill="none" stroke="#020226" stroke-width="1.6" stroke-opacity="0.8"/>
<path d="M251.5 270.5 L264.6 277.1 L266.0 282.3 L271.2 287.6 L279.2 294.2 L263.3 293.4 L254.1 288.2 L250.1 279.7Z" fill="url(#mesh)"/>
<path d="M240.1 252.0 L233.8 277.1 L226.4 279.2 L231.7 266.5 L236.4 257.3Z" fill="#0b4aa6"/>
<path d="M240.9 232.2 L248.8 234.9 L254.1 242.8 L263.3 242.8 L269.1 252.0 L276.5 262.6 L279.2 269.2 L269.1 269.2 L264.6 277.1 L252.8 269.2 L244.9 269.2 L236.9 269.2 L233.0 277.1 L239.6 253.3Z" fill="#0c8c88"/>
<path d="M264.6 277.1 L269.1 269.2 L279.2 269.2 L287.1 266.5 L301.6 259.1 L300.3 277.1 L304.2 306.1 L292.3 295.5 L279.2 294.2 L271.2 287.6 L266.0 282.3Z" fill="#0c8c90"/>
<path d="M242.2 234.9 L248.8 235.4 L254.1 242.8 L262.0 243.3 L266.0 249.4 L259.4 256.0 L248.8 253.3 L242.2 246.7Z" fill="#10a08c"/>
<path d="M254.1 246.7 L266.0 249.4 L272.6 259.1 L267.3 266.5 L258.0 263.9 L252.8 256.0Z" fill="#1aa874"/>
<path d="M279.2 269.7 L287.1 267.0 L300.8 260.2 L299.7 278.4 L289.7 281.0 L280.5 278.4Z" fill="#0f9cb8"/>
<path d="M266.0 278.4 L279.2 277.1 L289.7 282.3 L295.0 295.5 L279.2 293.4 L270.7 287.1Z" fill="#10988c"/>
<path d="M251.7 237.5 L258.6 238.5 L260.2 243.3 L253.8 242.8Z" fill="#8cbc1c"/>
<path d="M254.1 239.1 L257.5 239.6 L258.0 242.2 L254.9 241.7Z" fill="#d8d020"/>
<path d="M266.5 261.2 L271.2 260.7 L277.0 270.5 L278.6 279.7 L273.9 278.4 L269.1 270.5Z" fill="#58b428"/>
<path d="M268.6 263.9 L271.8 263.9 L276.0 272.3 L277.0 278.1 L274.4 276.5 L270.7 270.2Z" fill="#d2c81c"/>
<path d="M270.2 266.5 L272.0 267.0 L274.9 273.4 L273.9 274.4 L271.2 270.2Z" fill="#e06414"/>
<path d="M284.4 259.7 L287.1 257.5 L288.1 263.9 L286.0 266.0Z" fill="#4a9a30"/>
<path d="M240.9 232.2 L248.8 234.9 L254.1 242.8 L263.3 242.8 L269.1 252.0 L276.5 262.6 L279.2 269.2 L269.1 269.2 L264.6 277.1 L252.8 269.2 L244.9 269.2 L236.9 269.2 L233.0 277.1 L239.6 253.3Z" fill="url(#mesh2)"/>
<path d="M264.6 277.1 L269.1 269.2 L279.2 269.2 L287.1 266.5 L301.6 259.1 L300.3 277.1 L304.2 306.1 L292.3 295.5 L279.2 294.2 L271.2 287.6 L266.0 282.3Z" fill="url(#mesh2)"/>
<path d="M240.1 252.0 L233.8 277.1 L226.4 279.2 L231.7 266.5 L236.4 257.3Z" fill="url(#mesh2)"/>
<path d="M249.1 229.6 L254.1 226.9 L261.2 228.5 L262.3 233.8 L256.7 234.9 L250.1 234.3Z" fill="#bfccef"/>
<path d="M246.4 270.7 L252.2 269.7 L252.8 278.4 L247.5 277.6Z" fill="#d2dbf4"/>
<path d="M284.7 253.3 L287.9 252.8 L288.1 258.1 L285.8 259.1Z" fill="#c8d4f2"/>
<rect x="285.60" y="341.80" width="188.00" height="4.40" fill="#000"/>
<rect x="473.60" y="342.20" width="54.80" height="3.60" fill="#fff" stroke="#000" stroke-width="0.8"/>
<text x="517.4" y="339.46" font-size="8.36" fill="#111" textLength="43.2" lengthAdjust="spacingAndGlyphs" stroke="#111" stroke-width="0.22">30.000 (mm)</text>
<text x="456.8" y="354.86" font-size="8.36" fill="#111" textLength="21.8" lengthAdjust="spacingAndGlyphs" stroke="#111" stroke-width="0.22">22.500</text>
</g>
<rect x="572.50" y="0.00" width="1.50" height="531.00" fill="#c6c9dc"/>
<rect x="574.00" y="0.00" width="226.00" height="531.00" fill="#f4f4f4"/>
<text x="577.3" y="9.26" font-size="8.36" fill="#555" textLength="42.2" lengthAdjust="spacingAndGlyphs" stroke="#555" stroke-width="0.22">Tabular Data</text>
<rect x="623" y="4" width="156" height="5" fill="url(#grip)"/>
<path d="M783.6 5 h6 l-3 3.4z" fill="#333"/>
<path d="M795.2 2.6 v5.6 h3.2 v-5.6 z M796.8 8.2 v3" fill="none" stroke="#333" stroke-width="0.9"/>
<rect x="574.50" y="14.20" width="226.00" height="13.00" fill="#f6f6f6"/>
<line x1="574.50" y1="26.90" x2="800.00" y2="26.90" stroke="#a8a8a8" stroke-width="1.0"/>
<line x1="588.50" y1="14.20" x2="588.50" y2="27.20" stroke="#b4b4b4" stroke-width="1.1"/>
<line x1="619.60" y1="14.20" x2="619.60" y2="27.20" stroke="#b4b4b4" stroke-width="1.1"/>
<line x1="690.60" y1="14.20" x2="690.60" y2="27.20" stroke="#b4b4b4" stroke-width="1.1"/>
<line x1="762.60" y1="14.20" x2="762.60" y2="27.20" stroke="#b4b4b4" stroke-width="1.1"/>
<text x="590.4" y="23.86" font-size="8.36" fill="#333" textLength="24.8" lengthAdjust="spacingAndGlyphs" font-weight="bold">Time [s]</text>
<rect x="622.40" y="16.40" width="9.00" height="9.00" fill="#fff" stroke="#8a8a8a" stroke-width="0.8"/>
<line x1="622.80" y1="17.00" x2="631.00" y2="17.00" stroke="#555" stroke-width="0.9"/>
<line x1="622.90" y1="16.80" x2="622.90" y2="25.00" stroke="#555" stroke-width="0.9"/>
<path d="M624.6 21.0 l1.9 2.1 l3.2 -4.2" fill="none" stroke="#111" stroke-width="1.5"/>
<text x="634.8" y="23.86" font-size="8.36" fill="#d4364e" textLength="51.2" lengthAdjust="spacingAndGlyphs" stroke="#d4364e" stroke-width="0.22">Minimum [MPa]</text>
<rect x="693.40" y="16.40" width="9.00" height="9.00" fill="#fff" stroke="#8a8a8a" stroke-width="0.8"/>
<line x1="693.80" y1="17.00" x2="702.00" y2="17.00" stroke="#555" stroke-width="0.9"/>
<line x1="693.90" y1="16.80" x2="693.90" y2="25.00" stroke="#555" stroke-width="0.9"/>
<path d="M695.6 21.0 l1.9 2.1 l3.2 -4.2" fill="none" stroke="#111" stroke-width="1.5"/>
<text x="705.6" y="23.86" font-size="8.36" fill="#3f9a3f" textLength="52.4" lengthAdjust="spacingAndGlyphs" stroke="#3f9a3f" stroke-width="0.22">Maximum [MPa]</text>
<rect x="765.00" y="16.40" width="9.00" height="9.00" fill="#fff" stroke="#8a8a8a" stroke-width="0.8"/>
<line x1="765.40" y1="17.00" x2="773.60" y2="17.00" stroke="#555" stroke-width="0.9"/>
<line x1="765.50" y1="16.80" x2="765.50" y2="25.00" stroke="#555" stroke-width="0.9"/>
<path d="M767.2 21.0 l1.9 2.1 l3.2 -4.2" fill="none" stroke="#111" stroke-width="1.5"/>
<text x="777.2" y="23.86" font-size="8.36" fill="#3a3ae0" textLength="49.0" lengthAdjust="spacingAndGlyphs" stroke="#3a3ae0" stroke-width="0.22">Average [MPa]</text>
<rect x="574.50" y="27.20" width="226.00" height="503.80" fill="#e7e6e2"/>
<rect x="575.30" y="27.20" width="13.20" height="503.80" fill="#f2f2f2"/>
<line x1="588.50" y1="37.80" x2="800.00" y2="37.80" stroke="#f7f7f6" stroke-width="1.0"/>
<line x1="575.30" y1="37.30" x2="588.50" y2="37.30" stroke="#9c9c9c" stroke-width="0.9"/>
<text x="576.6" y="35.78" font-size="8.14" fill="#333" textLength="3.9" lengthAdjust="spacingAndGlyphs" stroke="#333" stroke-width="0.22">1</text>
<text x="590.8" y="35.78" font-size="8.14" fill="#303030" textLength="9.6" lengthAdjust="spacingAndGlyphs" stroke="#303030" stroke-width="0.22">0.2</text>
<text x="621.8" y="35.78" font-size="8.14" fill="#303030" textLength="40.2" lengthAdjust="spacingAndGlyphs" stroke="#303030" stroke-width="0.22">1.4114e-009</text>
<text x="692.8" y="35.78" font-size="8.14" fill="#303030" textLength="21.5" lengthAdjust="spacingAndGlyphs" stroke="#303030" stroke-width="0.22">83.936</text>
<text x="764.9" y="35.78" font-size="8.14" fill="#303030" textLength="17.5" lengthAdjust="spacingAndGlyphs" stroke="#303030" stroke-width="0.22">1.988</text>
<line x1="588.50" y1="47.80" x2="800.00" y2="47.80" stroke="#f7f7f6" stroke-width="1.0"/>
<line x1="575.30" y1="47.30" x2="588.50" y2="47.30" stroke="#9c9c9c" stroke-width="0.9"/>
<text x="576.6" y="45.78" font-size="8.14" fill="#333" textLength="3.9" lengthAdjust="spacingAndGlyphs" stroke="#333" stroke-width="0.22">2</text>
<text x="590.8" y="45.78" font-size="8.14" fill="#303030" textLength="13.5" lengthAdjust="spacingAndGlyphs" stroke="#303030" stroke-width="0.22">0.25</text>
<text x="621.8" y="45.78" font-size="8.14" fill="#303030" textLength="40.2" lengthAdjust="spacingAndGlyphs" stroke="#303030" stroke-width="0.22">1.2253e-005</text>
<text x="692.8" y="45.78" font-size="8.14" fill="#303030" textLength="21.5" lengthAdjust="spacingAndGlyphs" stroke="#303030" stroke-width="0.22">95.348</text>
<text x="764.9" y="45.78" font-size="8.14" fill="#303030" textLength="21.5" lengthAdjust="spacingAndGlyphs" stroke="#303030" stroke-width="0.22">2.5132</text>
<line x1="588.50" y1="57.80" x2="800.00" y2="57.80" stroke="#f7f7f6" stroke-width="1.0"/>
<line x1="575.30" y1="57.30" x2="588.50" y2="57.30" stroke="#9c9c9c" stroke-width="0.9"/>
<text x="576.6" y="55.78" font-size="8.14" fill="#333" textLength="3.9" lengthAdjust="spacingAndGlyphs" stroke="#333" stroke-width="0.22">3</text>
<text x="590.8" y="55.78" font-size="8.14" fill="#303030" textLength="9.6" lengthAdjust="spacingAndGlyphs" stroke="#303030" stroke-width="0.22">0.3</text>
<text x="621.8" y="55.78" font-size="8.14" fill="#303030" textLength="40.2" lengthAdjust="spacingAndGlyphs" stroke="#303030" stroke-width="0.22">1.7241e-008</text>
<text x="692.8" y="55.78" font-size="8.14" fill="#303030" textLength="21.5" lengthAdjust="spacingAndGlyphs" stroke="#303030" stroke-width="0.22">104.04</text>
<text x="764.9" y="55.78" font-size="8.14" fill="#303030" textLength="21.5" lengthAdjust="spacingAndGlyphs" stroke="#303030" stroke-width="0.22">2.9548</text>
<line x1="588.50" y1="67.80" x2="800.00" y2="67.80" stroke="#f7f7f6" stroke-width="1.0"/>
<line x1="575.30" y1="67.30" x2="588.50" y2="67.30" stroke="#9c9c9c" stroke-width="0.9"/>
<text x="576.6" y="65.78" font-size="8.14" fill="#333" textLength="3.9" lengthAdjust="spacingAndGlyphs" stroke="#333" stroke-width="0.22">4</text>
<text x="590.8" y="65.78" font-size="8.14" fill="#303030" textLength="17.5" lengthAdjust="spacingAndGlyphs" stroke="#303030" stroke-width="0.22">0.375</text>
<text x="621.8" y="65.78" font-size="8.14" fill="#303030" textLength="40.2" lengthAdjust="spacingAndGlyphs" stroke="#303030" stroke-width="0.22">2.5395e-007</text>
<text x="692.8" y="65.78" font-size="8.14" fill="#303030" textLength="21.5" lengthAdjust="spacingAndGlyphs" stroke="#303030" stroke-width="0.22">284.92</text>
<text x="764.9" y="65.78" font-size="8.14" fill="#303030" textLength="21.5" lengthAdjust="spacingAndGlyphs" stroke="#303030" stroke-width="0.22">3.6858</text>
<line x1="588.50" y1="77.80" x2="800.00" y2="77.80" stroke="#f7f7f6" stroke-width="1.0"/>
<line x1="575.30" y1="77.30" x2="588.50" y2="77.30" stroke="#9c9c9c" stroke-width="0.9"/>
<text x="576.6" y="75.78" font-size="8.14" fill="#333" textLength="3.9" lengthAdjust="spacingAndGlyphs" stroke="#333" stroke-width="0.22">5</text>
<text x="590.8" y="75.78" font-size="8.14" fill="#303030" textLength="21.5" lengthAdjust="spacingAndGlyphs" stroke="#303030" stroke-width="0.22">0.4875</text>
<text x="621.8" y="75.78" font-size="8.14" fill="#303030" textLength="40.2" lengthAdjust="spacingAndGlyphs" stroke="#303030" stroke-width="0.22">1.8129e-007</text>
<text x="692.8" y="75.78" font-size="8.14" fill="#303030" textLength="17.5" lengthAdjust="spacingAndGlyphs" stroke="#303030" stroke-width="0.22">299.6</text>
<text x="764.9" y="75.78" font-size="8.14" fill="#303030" textLength="21.5" lengthAdjust="spacingAndGlyphs" stroke="#303030" stroke-width="0.22">4.6298</text>
<line x1="588.50" y1="90.72" x2="800.00" y2="90.72" stroke="#f7f7f6" stroke-width="1.0"/>
<line x1="575.30" y1="90.22" x2="588.50" y2="90.22" stroke="#9c9c9c" stroke-width="0.9"/>
<text x="576.6" y="87.73" font-size="8.14" fill="#333" textLength="3.9" lengthAdjust="spacingAndGlyphs" stroke="#333" stroke-width="0.22">6</text>
<text x="590.8" y="87.73" font-size="8.14" fill="#303030" textLength="25.4" lengthAdjust="spacingAndGlyphs" stroke="#303030" stroke-width="0.22">0.65625</text>
<text x="621.8" y="87.73" font-size="8.14" fill="#303030" textLength="40.2" lengthAdjust="spacingAndGlyphs" stroke="#303030" stroke-width="0.22">1.2818e-008</text>
<text x="692.8" y="87.73" font-size="8.14" fill="#303030" textLength="21.5" lengthAdjust="spacingAndGlyphs" stroke="#303030" stroke-width="0.22">340.86</text>
<text x="764.9" y="87.73" font-size="8.14" fill="#303030" textLength="21.5" lengthAdjust="spacingAndGlyphs" stroke="#303030" stroke-width="0.22">6.0872</text>
<line x1="588.50" y1="102.67" x2="800.00" y2="102.67" stroke="#f7f7f6" stroke-width="1.0"/>
<line x1="575.30" y1="102.17" x2="588.50" y2="102.17" stroke="#9c9c9c" stroke-width="0.9"/>
<text x="576.6" y="99.68" font-size="8.14" fill="#333" textLength="3.9" lengthAdjust="spacingAndGlyphs" stroke="#333" stroke-width="0.22">7</text>
<text x="590.8" y="99.68" font-size="8.14" fill="#303030" textLength="17.5" lengthAdjust="spacingAndGlyphs" stroke="#303030" stroke-width="0.22">0.825</text>
<text x="621.8" y="99.68" font-size="8.14" fill="#303030" textLength="40.2" lengthAdjust="spacingAndGlyphs" stroke="#303030" stroke-width="0.22">1.4803e-008</text>
<text x="692.8" y="99.68" font-size="8.14" fill="#303030" textLength="13.5" lengthAdjust="spacingAndGlyphs" stroke="#303030" stroke-width="0.22">317.</text>
<text x="764.9" y="99.68" font-size="8.14" fill="#303030" textLength="21.5" lengthAdjust="spacingAndGlyphs" stroke="#303030" stroke-width="0.22">7.6804</text>
<line x1="588.50" y1="114.62" x2="800.00" y2="114.62" stroke="#f7f7f6" stroke-width="1.0"/>
<line x1="575.30" y1="114.12" x2="588.50" y2="114.12" stroke="#9c9c9c" stroke-width="0.9"/>
<text x="576.6" y="111.63" font-size="8.14" fill="#333" textLength="3.9" lengthAdjust="spacingAndGlyphs" stroke="#333" stroke-width="0.22">8</text>
<text x="590.8" y="111.63" font-size="8.14" fill="#303030" textLength="5.6" lengthAdjust="spacingAndGlyphs" stroke="#303030" stroke-width="0.22">1.</text>
<text x="621.8" y="111.63" font-size="8.14" fill="#303030" textLength="40.2" lengthAdjust="spacingAndGlyphs" stroke="#303030" stroke-width="0.22">2.1624e-008</text>
<text x="692.8" y="111.63" font-size="8.14" fill="#303030" textLength="21.5" lengthAdjust="spacingAndGlyphs" stroke="#303030" stroke-width="0.22">480.59</text>
<text x="764.9" y="111.63" font-size="8.14" fill="#303030" textLength="21.5" lengthAdjust="spacingAndGlyphs" stroke="#303030" stroke-width="0.22">9.7749</text>
<line x1="588.50" y1="126.57" x2="800.00" y2="126.57" stroke="#f7f7f6" stroke-width="1.0"/>
<line x1="575.30" y1="126.07" x2="588.50" y2="126.07" stroke="#9c9c9c" stroke-width="0.9"/>
<text x="576.6" y="123.58" font-size="8.14" fill="#333" textLength="3.9" lengthAdjust="spacingAndGlyphs" stroke="#333" stroke-width="0.22">9</text>
<text x="590.8" y="123.58" font-size="8.14" fill="#303030" textLength="9.6" lengthAdjust="spacingAndGlyphs" stroke="#303030" stroke-width="0.22">1.2</text>
<text x="621.8" y="123.58" font-size="8.14" fill="#303030" textLength="40.2" lengthAdjust="spacingAndGlyphs" stroke="#303030" stroke-width="0.22">2.7715e-007</text>
<text x="692.8" y="123.58" font-size="8.14" fill="#303030" textLength="21.5" lengthAdjust="spacingAndGlyphs" stroke="#303030" stroke-width="0.22">232.95</text>
<text x="764.9" y="123.58" font-size="8.14" fill="#303030" textLength="21.5" lengthAdjust="spacingAndGlyphs" stroke="#303030" stroke-width="0.22">9.8679</text>
<line x1="588.50" y1="138.53" x2="800.00" y2="138.53" stroke="#f7f7f6" stroke-width="1.0"/>
<line x1="575.30" y1="138.03" x2="588.50" y2="138.03" stroke="#9c9c9c" stroke-width="0.9"/>
<text x="575.6" y="135.53" font-size="8.14" fill="#333" textLength="8.0" lengthAdjust="spacingAndGlyphs" stroke="#333" stroke-width="0.22">10</text>
<text x="590.8" y="135.53" font-size="8.14" fill="#303030" textLength="13.5" lengthAdjust="spacingAndGlyphs" stroke="#303030" stroke-width="0.22">1.25</text>
<text x="621.8" y="135.53" font-size="8.14" fill="#303030" textLength="40.2" lengthAdjust="spacingAndGlyphs" stroke="#303030" stroke-width="0.22">6.1665e-009</text>
<text x="692.8" y="135.53" font-size="8.14" fill="#303030" textLength="21.5" lengthAdjust="spacingAndGlyphs" stroke="#303030" stroke-width="0.22">393.89</text>
<text x="764.9" y="135.53" font-size="8.14" fill="#303030" textLength="21.5" lengthAdjust="spacingAndGlyphs" stroke="#303030" stroke-width="0.22">9.8822</text>
<line x1="588.50" y1="150.47" x2="800.00" y2="150.47" stroke="#f7f7f6" stroke-width="1.0"/>
<line x1="575.30" y1="149.97" x2="588.50" y2="149.97" stroke="#9c9c9c" stroke-width="0.9"/>
<text x="575.6" y="147.48" font-size="8.14" fill="#333" textLength="8.0" lengthAdjust="spacingAndGlyphs" stroke="#333" stroke-width="0.22">11</text>
<text x="590.8" y="147.48" font-size="8.14" fill="#303030" textLength="9.6" lengthAdjust="spacingAndGlyphs" stroke="#303030" stroke-width="0.22">1.3</text>
<text x="621.8" y="147.48" font-size="8.14" fill="#303030" textLength="40.2" lengthAdjust="spacingAndGlyphs" stroke="#303030" stroke-width="0.22">1.9744e-008</text>
<text x="692.8" y="147.48" font-size="8.14" fill="#303030" textLength="21.5" lengthAdjust="spacingAndGlyphs" stroke="#303030" stroke-width="0.22">508.58</text>
<text x="764.9" y="147.48" font-size="8.14" fill="#303030" textLength="21.5" lengthAdjust="spacingAndGlyphs" stroke="#303030" stroke-width="0.22">9.6362</text>
<line x1="588.50" y1="162.42" x2="800.00" y2="162.42" stroke="#f7f7f6" stroke-width="1.0"/>
<line x1="575.30" y1="161.92" x2="588.50" y2="161.92" stroke="#9c9c9c" stroke-width="0.9"/>
<text x="575.6" y="159.43" font-size="8.14" fill="#333" textLength="8.0" lengthAdjust="spacingAndGlyphs" stroke="#333" stroke-width="0.22">12</text>
<text x="590.8" y="159.43" font-size="8.14" fill="#303030" textLength="17.5" lengthAdjust="spacingAndGlyphs" stroke="#303030" stroke-width="0.22">1.375</text>
<text x="621.8" y="159.43" font-size="8.14" fill="#303030" textLength="40.2" lengthAdjust="spacingAndGlyphs" stroke="#303030" stroke-width="0.22">3.9942e-007</text>
<text x="692.8" y="159.43" font-size="8.14" fill="#303030" textLength="21.5" lengthAdjust="spacingAndGlyphs" stroke="#303030" stroke-width="0.22">461.07</text>
<text x="764.9" y="159.43" font-size="8.14" fill="#303030" textLength="21.5" lengthAdjust="spacingAndGlyphs" stroke="#303030" stroke-width="0.22">9.4524</text>
<line x1="588.50" y1="174.37" x2="800.00" y2="174.37" stroke="#f7f7f6" stroke-width="1.0"/>
<line x1="575.30" y1="173.87" x2="588.50" y2="173.87" stroke="#9c9c9c" stroke-width="0.9"/>
<text x="575.6" y="171.38" font-size="8.14" fill="#333" textLength="8.0" lengthAdjust="spacingAndGlyphs" stroke="#333" stroke-width="0.22">13</text>
<text x="590.8" y="171.38" font-size="8.14" fill="#303030" textLength="21.5" lengthAdjust="spacingAndGlyphs" stroke="#303030" stroke-width="0.22">1.4875</text>
<text x="621.8" y="171.38" font-size="8.14" fill="#303030" textLength="40.2" lengthAdjust="spacingAndGlyphs" stroke="#303030" stroke-width="0.22">2.0662e-006</text>
<text x="692.8" y="171.38" font-size="8.14" fill="#303030" textLength="21.5" lengthAdjust="spacingAndGlyphs" stroke="#303030" stroke-width="0.22">346.31</text>
<text x="764.9" y="171.38" font-size="8.14" fill="#303030" textLength="21.5" lengthAdjust="spacingAndGlyphs" stroke="#303030" stroke-width="0.22">9.1501</text>
<line x1="588.50" y1="186.32" x2="800.00" y2="186.32" stroke="#f7f7f6" stroke-width="1.0"/>
<line x1="575.30" y1="185.82" x2="588.50" y2="185.82" stroke="#9c9c9c" stroke-width="0.9"/>
<text x="575.6" y="183.33" font-size="8.14" fill="#333" textLength="8.0" lengthAdjust="spacingAndGlyphs" stroke="#333" stroke-width="0.22">14</text>
<text x="590.8" y="183.33" font-size="8.14" fill="#303030" textLength="21.5" lengthAdjust="spacingAndGlyphs" stroke="#303030" stroke-width="0.22">1.6563</text>
<text x="621.8" y="183.33" font-size="8.14" fill="#303030" textLength="40.2" lengthAdjust="spacingAndGlyphs" stroke="#303030" stroke-width="0.22">1.3645e-007</text>
<text x="692.8" y="183.33" font-size="8.14" fill="#303030" textLength="21.5" lengthAdjust="spacingAndGlyphs" stroke="#303030" stroke-width="0.22">454.47</text>
<text x="764.9" y="183.33" font-size="8.14" fill="#303030" textLength="21.5" lengthAdjust="spacingAndGlyphs" stroke="#303030" stroke-width="0.22">9.1536</text>
<line x1="588.50" y1="198.28" x2="800.00" y2="198.28" stroke="#f7f7f6" stroke-width="1.0"/>
<line x1="575.30" y1="197.78" x2="588.50" y2="197.78" stroke="#9c9c9c" stroke-width="0.9"/>
<text x="575.6" y="195.28" font-size="8.14" fill="#333" textLength="8.0" lengthAdjust="spacingAndGlyphs" stroke="#333" stroke-width="0.22">15</text>
<text x="590.8" y="195.28" font-size="8.14" fill="#303030" textLength="17.5" lengthAdjust="spacingAndGlyphs" stroke="#303030" stroke-width="0.22">1.825</text>
<text x="621.8" y="195.28" font-size="8.14" fill="#303030" textLength="40.2" lengthAdjust="spacingAndGlyphs" stroke="#303030" stroke-width="0.22">3.3438e-008</text>
<text x="692.8" y="195.28" font-size="8.14" fill="#303030" textLength="21.5" lengthAdjust="spacingAndGlyphs" stroke="#303030" stroke-width="0.22">476.23</text>
<text x="764.9" y="195.28" font-size="8.14" fill="#303030" textLength="21.5" lengthAdjust="spacingAndGlyphs" stroke="#303030" stroke-width="0.22">9.4301</text>
<line x1="588.50" y1="210.22" x2="800.00" y2="210.22" stroke="#f7f7f6" stroke-width="1.0"/>
<line x1="575.30" y1="209.72" x2="588.50" y2="209.72" stroke="#9c9c9c" stroke-width="0.9"/>
<text x="575.6" y="207.23" font-size="8.14" fill="#333" textLength="8.0" lengthAdjust="spacingAndGlyphs" stroke="#333" stroke-width="0.22">16</text>
<text x="590.8" y="207.23" font-size="8.14" fill="#303030" textLength="5.6" lengthAdjust="spacingAndGlyphs" stroke="#303030" stroke-width="0.22">2.</text>
<text x="621.8" y="207.23" font-size="8.14" fill="#303030" textLength="36.2" lengthAdjust="spacingAndGlyphs" stroke="#303030" stroke-width="0.22">2.854e-008</text>
<text x="692.8" y="207.23" font-size="8.14" fill="#303030" textLength="21.5" lengthAdjust="spacingAndGlyphs" stroke="#303030" stroke-width="0.22">268.42</text>
<text x="764.9" y="207.23" font-size="8.14" fill="#303030" textLength="21.5" lengthAdjust="spacingAndGlyphs" stroke="#303030" stroke-width="0.22">9.8888</text>
<line x1="588.50" y1="222.17" x2="800.00" y2="222.17" stroke="#f7f7f6" stroke-width="1.0"/>
<line x1="575.30" y1="221.67" x2="588.50" y2="221.67" stroke="#9c9c9c" stroke-width="0.9"/>
<text x="575.6" y="219.18" font-size="8.14" fill="#333" textLength="8.0" lengthAdjust="spacingAndGlyphs" stroke="#333" stroke-width="0.22">17</text>
<text x="590.8" y="219.18" font-size="8.14" fill="#303030" textLength="9.6" lengthAdjust="spacingAndGlyphs" stroke="#303030" stroke-width="0.22">2.2</text>
<text x="621.8" y="219.18" font-size="8.14" fill="#303030" textLength="40.2" lengthAdjust="spacingAndGlyphs" stroke="#303030" stroke-width="0.22">1.4413e-006</text>
<text x="692.8" y="219.18" font-size="8.14" fill="#303030" textLength="21.5" lengthAdjust="spacingAndGlyphs" stroke="#303030" stroke-width="0.22">412.32</text>
<text x="764.9" y="219.18" font-size="8.14" fill="#303030" textLength="21.5" lengthAdjust="spacingAndGlyphs" stroke="#303030" stroke-width="0.22">9.8368</text>
<line x1="588.50" y1="234.12" x2="800.00" y2="234.12" stroke="#f7f7f6" stroke-width="1.0"/>
<line x1="575.30" y1="233.62" x2="588.50" y2="233.62" stroke="#9c9c9c" stroke-width="0.9"/>
<text x="575.6" y="231.13" font-size="8.14" fill="#333" textLength="8.0" lengthAdjust="spacingAndGlyphs" stroke="#333" stroke-width="0.22">18</text>
<text x="590.8" y="231.13" font-size="8.14" fill="#303030" textLength="13.5" lengthAdjust="spacingAndGlyphs" stroke="#303030" stroke-width="0.22">2.25</text>
<text x="621.8" y="231.13" font-size="8.14" fill="#303030" textLength="40.2" lengthAdjust="spacingAndGlyphs" stroke="#303030" stroke-width="0.22">1.0563e-005</text>
<text x="692.8" y="231.13" font-size="8.14" fill="#303030" textLength="21.5" lengthAdjust="spacingAndGlyphs" stroke="#303030" stroke-width="0.22">474.81</text>
<text x="764.9" y="231.13" font-size="8.14" fill="#303030" textLength="21.5" lengthAdjust="spacingAndGlyphs" stroke="#303030" stroke-width="0.22">9.5886</text>
<line x1="588.50" y1="246.07" x2="800.00" y2="246.07" stroke="#f7f7f6" stroke-width="1.0"/>
<line x1="575.30" y1="245.57" x2="588.50" y2="245.57" stroke="#9c9c9c" stroke-width="0.9"/>
<text x="575.6" y="243.08" font-size="8.14" fill="#333" textLength="8.0" lengthAdjust="spacingAndGlyphs" stroke="#333" stroke-width="0.22">19</text>
<text x="590.8" y="243.08" font-size="8.14" fill="#303030" textLength="9.6" lengthAdjust="spacingAndGlyphs" stroke="#303030" stroke-width="0.22">2.3</text>
<text x="621.8" y="243.08" font-size="8.14" fill="#303030" textLength="40.2" lengthAdjust="spacingAndGlyphs" stroke="#303030" stroke-width="0.22">1.3155e-004</text>
<text x="692.8" y="243.08" font-size="8.14" fill="#303030" textLength="21.5" lengthAdjust="spacingAndGlyphs" stroke="#303030" stroke-width="0.22">479.66</text>
<text x="764.9" y="243.08" font-size="8.14" fill="#303030" textLength="21.5" lengthAdjust="spacingAndGlyphs" stroke="#303030" stroke-width="0.22">9.4393</text>
<line x1="588.50" y1="258.02" x2="800.00" y2="258.02" stroke="#f7f7f6" stroke-width="1.0"/>
<line x1="575.30" y1="257.52" x2="588.50" y2="257.52" stroke="#9c9c9c" stroke-width="0.9"/>
<text x="575.6" y="255.03" font-size="8.14" fill="#333" textLength="8.0" lengthAdjust="spacingAndGlyphs" stroke="#333" stroke-width="0.22">20</text>
<text x="590.8" y="255.03" font-size="8.14" fill="#303030" textLength="17.5" lengthAdjust="spacingAndGlyphs" stroke="#303030" stroke-width="0.22">2.375</text>
<text x="621.8" y="255.03" font-size="8.14" fill="#303030" textLength="40.2" lengthAdjust="spacingAndGlyphs" stroke="#303030" stroke-width="0.22">2.2334e-006</text>
<text x="692.8" y="255.03" font-size="8.14" fill="#303030" textLength="21.5" lengthAdjust="spacingAndGlyphs" stroke="#303030" stroke-width="0.22">452.75</text>
<text x="764.9" y="255.03" font-size="8.14" fill="#303030" textLength="21.5" lengthAdjust="spacingAndGlyphs" stroke="#303030" stroke-width="0.22">9.1889</text>
<line x1="588.50" y1="269.98" x2="800.00" y2="269.98" stroke="#f7f7f6" stroke-width="1.0"/>
<line x1="575.30" y1="269.48" x2="588.50" y2="269.48" stroke="#9c9c9c" stroke-width="0.9"/>
<text x="575.6" y="266.98" font-size="8.14" fill="#333" textLength="8.0" lengthAdjust="spacingAndGlyphs" stroke="#333" stroke-width="0.22">21</text>
<text x="590.8" y="266.98" font-size="8.14" fill="#303030" textLength="21.5" lengthAdjust="spacingAndGlyphs" stroke="#303030" stroke-width="0.22">2.4875</text>
<text x="621.8" y="266.98" font-size="8.14" fill="#303030" textLength="40.2" lengthAdjust="spacingAndGlyphs" stroke="#303030" stroke-width="0.22">4.0379e-006</text>
<text x="692.8" y="266.98" font-size="8.14" fill="#303030" textLength="21.5" lengthAdjust="spacingAndGlyphs" stroke="#303030" stroke-width="0.22">415.85</text>
<text x="764.9" y="266.98" font-size="8.14" fill="#303030" textLength="21.5" lengthAdjust="spacingAndGlyphs" stroke="#303030" stroke-width="0.22">9.1406</text>
<line x1="588.50" y1="281.93" x2="800.00" y2="281.93" stroke="#f7f7f6" stroke-width="1.0"/>
<line x1="575.30" y1="281.43" x2="588.50" y2="281.43" stroke="#9c9c9c" stroke-width="0.9"/>
<text x="575.6" y="278.93" font-size="8.14" fill="#333" textLength="8.0" lengthAdjust="spacingAndGlyphs" stroke="#333" stroke-width="0.22">22</text>
<text x="590.8" y="278.93" font-size="8.14" fill="#303030" textLength="21.5" lengthAdjust="spacingAndGlyphs" stroke="#303030" stroke-width="0.22">2.6563</text>
<text x="621.8" y="278.93" font-size="8.14" fill="#303030" textLength="40.2" lengthAdjust="spacingAndGlyphs" stroke="#303030" stroke-width="0.22">6.4026e-008</text>
<text x="692.8" y="278.93" font-size="8.14" fill="#303030" textLength="21.5" lengthAdjust="spacingAndGlyphs" stroke="#303030" stroke-width="0.22">339.27</text>
<text x="764.9" y="278.93" font-size="8.14" fill="#303030" textLength="21.5" lengthAdjust="spacingAndGlyphs" stroke="#303030" stroke-width="0.22">9.1796</text>
<line x1="588.50" y1="293.88" x2="800.00" y2="293.88" stroke="#f7f7f6" stroke-width="1.0"/>
<line x1="575.30" y1="293.38" x2="588.50" y2="293.38" stroke="#9c9c9c" stroke-width="0.9"/>
<text x="575.6" y="290.88" font-size="8.14" fill="#333" textLength="8.0" lengthAdjust="spacingAndGlyphs" stroke="#333" stroke-width="0.22">23</text>
<text x="590.8" y="290.88" font-size="8.14" fill="#303030" textLength="17.5" lengthAdjust="spacingAndGlyphs" stroke="#303030" stroke-width="0.22">2.825</text>
<text x="621.8" y="290.88" font-size="8.14" fill="#303030" textLength="40.2" lengthAdjust="spacingAndGlyphs" stroke="#303030" stroke-width="0.22">1.1294e-006</text>
<text x="692.8" y="290.88" font-size="8.14" fill="#303030" textLength="21.5" lengthAdjust="spacingAndGlyphs" stroke="#303030" stroke-width="0.22">485.31</text>
<text x="764.9" y="290.88" font-size="8.14" fill="#303030" textLength="21.5" lengthAdjust="spacingAndGlyphs" stroke="#303030" stroke-width="0.22">9.7173</text>
<line x1="588.50" y1="305.83" x2="800.00" y2="305.83" stroke="#f7f7f6" stroke-width="1.0"/>
<line x1="575.30" y1="305.33" x2="588.50" y2="305.33" stroke="#9c9c9c" stroke-width="0.9"/>
<text x="575.6" y="302.83" font-size="8.14" fill="#333" textLength="8.0" lengthAdjust="spacingAndGlyphs" stroke="#333" stroke-width="0.22">24</text>
<text x="590.8" y="302.83" font-size="8.14" fill="#303030" textLength="5.6" lengthAdjust="spacingAndGlyphs" stroke="#303030" stroke-width="0.22">3.</text>
<text x="621.8" y="302.83" font-size="8.14" fill="#303030" textLength="40.2" lengthAdjust="spacingAndGlyphs" stroke="#303030" stroke-width="0.22">1.9534e-008</text>
<text x="692.8" y="302.83" font-size="8.14" fill="#303030" textLength="21.5" lengthAdjust="spacingAndGlyphs" stroke="#303030" stroke-width="0.22">293.65</text>
<text x="764.9" y="302.83" font-size="8.14" fill="#303030" textLength="21.5" lengthAdjust="spacingAndGlyphs" stroke="#303030" stroke-width="0.22">10.048</text>
<line x1="588.50" y1="317.77" x2="800.00" y2="317.77" stroke="#f7f7f6" stroke-width="1.0"/>
<line x1="575.30" y1="317.27" x2="588.50" y2="317.27" stroke="#9c9c9c" stroke-width="0.9"/>
<text x="575.6" y="314.78" font-size="8.14" fill="#333" textLength="8.0" lengthAdjust="spacingAndGlyphs" stroke="#333" stroke-width="0.22">25</text>
<text x="590.8" y="314.78" font-size="8.14" fill="#303030" textLength="9.6" lengthAdjust="spacingAndGlyphs" stroke="#303030" stroke-width="0.22">3.2</text>
<text x="621.8" y="314.78" font-size="8.14" fill="#303030" textLength="40.2" lengthAdjust="spacingAndGlyphs" stroke="#303030" stroke-width="0.22">1.4789e-008</text>
<text x="692.8" y="314.78" font-size="8.14" fill="#303030" textLength="17.5" lengthAdjust="spacingAndGlyphs" stroke="#303030" stroke-width="0.22">526.1</text>
<text x="764.9" y="314.78" font-size="8.14" fill="#303030" textLength="21.5" lengthAdjust="spacingAndGlyphs" stroke="#303030" stroke-width="0.22">9.6952</text>
<line x1="588.50" y1="329.73" x2="800.00" y2="329.73" stroke="#f7f7f6" stroke-width="1.0"/>
<line x1="575.30" y1="329.23" x2="588.50" y2="329.23" stroke="#9c9c9c" stroke-width="0.9"/>
<text x="575.6" y="326.73" font-size="8.14" fill="#333" textLength="8.0" lengthAdjust="spacingAndGlyphs" stroke="#333" stroke-width="0.22">26</text>
<text x="590.8" y="326.73" font-size="8.14" fill="#303030" textLength="13.5" lengthAdjust="spacingAndGlyphs" stroke="#303030" stroke-width="0.22">3.25</text>
<text x="621.8" y="326.73" font-size="8.14" fill="#303030" textLength="40.2" lengthAdjust="spacingAndGlyphs" stroke="#303030" stroke-width="0.22">1.1979e-005</text>
<text x="692.8" y="326.73" font-size="8.14" fill="#303030" textLength="21.5" lengthAdjust="spacingAndGlyphs" stroke="#303030" stroke-width="0.22">503.64</text>
<text x="764.9" y="326.73" font-size="8.14" fill="#303030" textLength="21.5" lengthAdjust="spacingAndGlyphs" stroke="#303030" stroke-width="0.22">9.4873</text>
<line x1="588.50" y1="341.68" x2="800.00" y2="341.68" stroke="#f7f7f6" stroke-width="1.0"/>
<line x1="575.30" y1="341.18" x2="588.50" y2="341.18" stroke="#9c9c9c" stroke-width="0.9"/>
<text x="575.6" y="338.68" font-size="8.14" fill="#333" textLength="8.0" lengthAdjust="spacingAndGlyphs" stroke="#333" stroke-width="0.22">27</text>
<text x="590.8" y="338.68" font-size="8.14" fill="#303030" textLength="9.6" lengthAdjust="spacingAndGlyphs" stroke="#303030" stroke-width="0.22">3.3</text>
<text x="621.8" y="338.68" font-size="8.14" fill="#303030" textLength="40.2" lengthAdjust="spacingAndGlyphs" stroke="#303030" stroke-width="0.22">1.5366e-004</text>
<text x="692.8" y="338.68" font-size="8.14" fill="#303030" textLength="21.5" lengthAdjust="spacingAndGlyphs" stroke="#303030" stroke-width="0.22">430.72</text>
<text x="764.9" y="338.68" font-size="8.14" fill="#303030" textLength="21.5" lengthAdjust="spacingAndGlyphs" stroke="#303030" stroke-width="0.22">9.3133</text>
<line x1="588.50" y1="353.62" x2="800.00" y2="353.62" stroke="#f7f7f6" stroke-width="1.0"/>
<line x1="575.30" y1="353.12" x2="588.50" y2="353.12" stroke="#9c9c9c" stroke-width="0.9"/>
<text x="575.6" y="350.63" font-size="8.14" fill="#333" textLength="8.0" lengthAdjust="spacingAndGlyphs" stroke="#333" stroke-width="0.22">28</text>
<text x="590.8" y="350.63" font-size="8.14" fill="#303030" textLength="17.5" lengthAdjust="spacingAndGlyphs" stroke="#303030" stroke-width="0.22">3.375</text>
<text x="621.8" y="350.63" font-size="8.14" fill="#303030" textLength="40.2" lengthAdjust="spacingAndGlyphs" stroke="#303030" stroke-width="0.22">2.1404e-006</text>
<text x="692.8" y="350.63" font-size="8.14" fill="#303030" textLength="21.5" lengthAdjust="spacingAndGlyphs" stroke="#303030" stroke-width="0.22">346.13</text>
<text x="764.9" y="350.63" font-size="8.14" fill="#303030" textLength="21.5" lengthAdjust="spacingAndGlyphs" stroke="#303030" stroke-width="0.22">9.2454</text>
<line x1="588.50" y1="365.57" x2="800.00" y2="365.57" stroke="#f7f7f6" stroke-width="1.0"/>
<line x1="575.30" y1="365.07" x2="588.50" y2="365.07" stroke="#9c9c9c" stroke-width="0.9"/>
<text x="575.6" y="362.58" font-size="8.14" fill="#333" textLength="8.0" lengthAdjust="spacingAndGlyphs" stroke="#333" stroke-width="0.22">29</text>
<text x="590.8" y="362.58" font-size="8.14" fill="#303030" textLength="21.5" lengthAdjust="spacingAndGlyphs" stroke="#303030" stroke-width="0.22">3.4875</text>
<text x="621.8" y="362.58" font-size="8.14" fill="#303030" textLength="40.2" lengthAdjust="spacingAndGlyphs" stroke="#303030" stroke-width="0.22">2.2541e-006</text>
<text x="692.8" y="362.58" font-size="8.14" fill="#303030" textLength="21.5" lengthAdjust="spacingAndGlyphs" stroke="#303030" stroke-width="0.22">452.82</text>
<text x="764.9" y="362.58" font-size="8.14" fill="#303030" textLength="21.5" lengthAdjust="spacingAndGlyphs" stroke="#303030" stroke-width="0.22">9.2824</text>
<line x1="588.50" y1="377.52" x2="800.00" y2="377.52" stroke="#f7f7f6" stroke-width="1.0"/>
<line x1="575.30" y1="377.02" x2="588.50" y2="377.02" stroke="#9c9c9c" stroke-width="0.9"/>
<text x="575.6" y="374.53" font-size="8.14" fill="#333" textLength="8.0" lengthAdjust="spacingAndGlyphs" stroke="#333" stroke-width="0.22">30</text>
<text x="590.8" y="374.53" font-size="8.14" fill="#303030" textLength="21.5" lengthAdjust="spacingAndGlyphs" stroke="#303030" stroke-width="0.22">3.6563</text>
<text x="621.8" y="374.53" font-size="8.14" fill="#303030" textLength="40.2" lengthAdjust="spacingAndGlyphs" stroke="#303030" stroke-width="0.22">6.4951e-008</text>
<text x="692.8" y="374.53" font-size="8.14" fill="#303030" textLength="21.5" lengthAdjust="spacingAndGlyphs" stroke="#303030" stroke-width="0.22">465.86</text>
<text x="764.9" y="374.53" font-size="8.14" fill="#303030" textLength="21.5" lengthAdjust="spacingAndGlyphs" stroke="#303030" stroke-width="0.22">9.5277</text>
<line x1="588.50" y1="389.48" x2="800.00" y2="389.48" stroke="#f7f7f6" stroke-width="1.0"/>
<line x1="575.30" y1="388.98" x2="588.50" y2="388.98" stroke="#9c9c9c" stroke-width="0.9"/>
<text x="575.6" y="386.48" font-size="8.14" fill="#333" textLength="8.0" lengthAdjust="spacingAndGlyphs" stroke="#333" stroke-width="0.22">31</text>
<text x="590.8" y="386.48" font-size="8.14" fill="#303030" textLength="17.5" lengthAdjust="spacingAndGlyphs" stroke="#303030" stroke-width="0.22">3.825</text>
<text x="621.8" y="386.48" font-size="8.14" fill="#303030" textLength="40.2" lengthAdjust="spacingAndGlyphs" stroke="#303030" stroke-width="0.22">9.1413e-008</text>
<text x="692.8" y="386.48" font-size="8.14" fill="#303030" textLength="21.5" lengthAdjust="spacingAndGlyphs" stroke="#303030" stroke-width="0.22">272.82</text>
<text x="764.9" y="386.48" font-size="8.14" fill="#303030" textLength="21.5" lengthAdjust="spacingAndGlyphs" stroke="#303030" stroke-width="0.22">9.9194</text>
<line x1="588.50" y1="401.43" x2="800.00" y2="401.43" stroke="#f7f7f6" stroke-width="1.0"/>
<line x1="575.30" y1="400.93" x2="588.50" y2="400.93" stroke="#9c9c9c" stroke-width="0.9"/>
<text x="575.6" y="398.43" font-size="8.14" fill="#333" textLength="8.0" lengthAdjust="spacingAndGlyphs" stroke="#333" stroke-width="0.22">32</text>
<text x="590.8" y="398.43" font-size="8.14" fill="#303030" textLength="5.6" lengthAdjust="spacingAndGlyphs" stroke="#303030" stroke-width="0.22">4.</text>
<text x="621.8" y="398.43" font-size="8.14" fill="#303030" textLength="40.2" lengthAdjust="spacingAndGlyphs" stroke="#303030" stroke-width="0.22">1.1768e-006</text>
<text x="692.8" y="398.43" font-size="8.14" fill="#303030" textLength="21.5" lengthAdjust="spacingAndGlyphs" stroke="#303030" stroke-width="0.22">283.79</text>
<text x="764.9" y="398.43" font-size="8.14" fill="#303030" textLength="21.5" lengthAdjust="spacingAndGlyphs" stroke="#303030" stroke-width="0.22">9.9867</text>
<line x1="588.50" y1="413.38" x2="800.00" y2="413.38" stroke="#f7f7f6" stroke-width="1.0"/>
<line x1="575.30" y1="412.88" x2="588.50" y2="412.88" stroke="#9c9c9c" stroke-width="0.9"/>
<text x="575.6" y="410.38" font-size="8.14" fill="#333" textLength="8.0" lengthAdjust="spacingAndGlyphs" stroke="#333" stroke-width="0.22">33</text>
<text x="590.8" y="410.38" font-size="8.14" fill="#303030" textLength="9.6" lengthAdjust="spacingAndGlyphs" stroke="#303030" stroke-width="0.22">4.2</text>
<text x="621.8" y="410.38" font-size="8.14" fill="#303030" textLength="40.2" lengthAdjust="spacingAndGlyphs" stroke="#303030" stroke-width="0.22">1.2434e-007</text>
<text x="692.8" y="410.38" font-size="8.14" fill="#303030" textLength="21.5" lengthAdjust="spacingAndGlyphs" stroke="#303030" stroke-width="0.22">434.54</text>
<text x="764.9" y="410.38" font-size="8.14" fill="#303030" textLength="21.5" lengthAdjust="spacingAndGlyphs" stroke="#303030" stroke-width="0.22">9.3836</text>
<line x1="588.50" y1="425.32" x2="800.00" y2="425.32" stroke="#f7f7f6" stroke-width="1.0"/>
<line x1="575.30" y1="424.82" x2="588.50" y2="424.82" stroke="#9c9c9c" stroke-width="0.9"/>
<text x="575.6" y="422.33" font-size="8.14" fill="#333" textLength="8.0" lengthAdjust="spacingAndGlyphs" stroke="#333" stroke-width="0.22">34</text>
<text x="590.8" y="422.33" font-size="8.14" fill="#303030" textLength="13.5" lengthAdjust="spacingAndGlyphs" stroke="#303030" stroke-width="0.22">4.25</text>
<text x="621.8" y="422.33" font-size="8.14" fill="#303030" textLength="40.2" lengthAdjust="spacingAndGlyphs" stroke="#303030" stroke-width="0.22">4.3952e-006</text>
<text x="692.8" y="422.33" font-size="8.14" fill="#303030" textLength="21.5" lengthAdjust="spacingAndGlyphs" stroke="#303030" stroke-width="0.22">349.29</text>
<text x="764.9" y="422.33" font-size="8.14" fill="#303030" textLength="21.5" lengthAdjust="spacingAndGlyphs" stroke="#303030" stroke-width="0.22">9.2754</text>
<line x1="588.50" y1="437.27" x2="800.00" y2="437.27" stroke="#f7f7f6" stroke-width="1.0"/>
<line x1="575.30" y1="436.77" x2="588.50" y2="436.77" stroke="#9c9c9c" stroke-width="0.9"/>
<text x="575.6" y="434.28" font-size="8.14" fill="#333" textLength="8.0" lengthAdjust="spacingAndGlyphs" stroke="#333" stroke-width="0.22">35</text>
<text x="590.8" y="434.28" font-size="8.14" fill="#303030" textLength="9.6" lengthAdjust="spacingAndGlyphs" stroke="#303030" stroke-width="0.22">4.3</text>
<text x="621.8" y="434.28" font-size="8.14" fill="#303030" textLength="32.2" lengthAdjust="spacingAndGlyphs" stroke="#303030" stroke-width="0.22">7.01e-005</text>
<text x="692.8" y="434.28" font-size="8.14" fill="#303030" textLength="21.5" lengthAdjust="spacingAndGlyphs" stroke="#303030" stroke-width="0.22">371.05</text>
<text x="764.9" y="434.28" font-size="8.14" fill="#303030" textLength="21.5" lengthAdjust="spacingAndGlyphs" stroke="#303030" stroke-width="0.22">9.2444</text>
<line x1="588.50" y1="449.23" x2="800.00" y2="449.23" stroke="#f7f7f6" stroke-width="1.0"/>
<line x1="575.30" y1="448.73" x2="588.50" y2="448.73" stroke="#9c9c9c" stroke-width="0.9"/>
<text x="575.6" y="446.23" font-size="8.14" fill="#333" textLength="8.0" lengthAdjust="spacingAndGlyphs" stroke="#333" stroke-width="0.22">36</text>
<text x="590.8" y="446.23" font-size="8.14" fill="#303030" textLength="17.5" lengthAdjust="spacingAndGlyphs" stroke="#303030" stroke-width="0.22">4.375</text>
<text x="621.8" y="446.23" font-size="8.14" fill="#303030" textLength="40.2" lengthAdjust="spacingAndGlyphs" stroke="#303030" stroke-width="0.22">7.0396e-006</text>
<text x="692.8" y="446.23" font-size="8.14" fill="#303030" textLength="21.5" lengthAdjust="spacingAndGlyphs" stroke="#303030" stroke-width="0.22">507.73</text>
<text x="764.9" y="446.23" font-size="8.14" fill="#303030" textLength="17.5" lengthAdjust="spacingAndGlyphs" stroke="#303030" stroke-width="0.22">9.291</text>
<line x1="588.50" y1="461.18" x2="800.00" y2="461.18" stroke="#f7f7f6" stroke-width="1.0"/>
<line x1="575.30" y1="460.68" x2="588.50" y2="460.68" stroke="#9c9c9c" stroke-width="0.9"/>
<text x="575.6" y="458.18" font-size="8.14" fill="#333" textLength="8.0" lengthAdjust="spacingAndGlyphs" stroke="#333" stroke-width="0.22">37</text>
<text x="590.8" y="458.18" font-size="8.14" fill="#303030" textLength="21.5" lengthAdjust="spacingAndGlyphs" stroke="#303030" stroke-width="0.22">4.4875</text>
<text x="621.8" y="458.18" font-size="8.14" fill="#303030" textLength="40.2" lengthAdjust="spacingAndGlyphs" stroke="#303030" stroke-width="0.22">9.6622e-008</text>
<text x="692.8" y="458.18" font-size="8.14" fill="#303030" textLength="21.5" lengthAdjust="spacingAndGlyphs" stroke="#303030" stroke-width="0.22">349.72</text>
<text x="764.9" y="458.18" font-size="8.14" fill="#303030" textLength="21.5" lengthAdjust="spacingAndGlyphs" stroke="#303030" stroke-width="0.22">9.2633</text>
<line x1="588.50" y1="473.12" x2="800.00" y2="473.12" stroke="#f7f7f6" stroke-width="1.0"/>
<line x1="575.30" y1="472.62" x2="588.50" y2="472.62" stroke="#9c9c9c" stroke-width="0.9"/>
<text x="575.6" y="470.13" font-size="8.14" fill="#333" textLength="8.0" lengthAdjust="spacingAndGlyphs" stroke="#333" stroke-width="0.22">38</text>
<text x="590.8" y="470.13" font-size="8.14" fill="#303030" textLength="21.5" lengthAdjust="spacingAndGlyphs" stroke="#303030" stroke-width="0.22">4.6563</text>
<text x="621.8" y="470.13" font-size="8.14" fill="#303030" textLength="36.2" lengthAdjust="spacingAndGlyphs" stroke="#303030" stroke-width="0.22">8.246e-008</text>
<text x="692.8" y="470.13" font-size="8.14" fill="#303030" textLength="21.5" lengthAdjust="spacingAndGlyphs" stroke="#303030" stroke-width="0.22">493.38</text>
<text x="764.9" y="470.13" font-size="8.14" fill="#303030" textLength="21.5" lengthAdjust="spacingAndGlyphs" stroke="#303030" stroke-width="0.22">9.7565</text>
<line x1="588.50" y1="485.07" x2="800.00" y2="485.07" stroke="#f7f7f6" stroke-width="1.0"/>
<line x1="575.30" y1="484.57" x2="588.50" y2="484.57" stroke="#9c9c9c" stroke-width="0.9"/>
<text x="575.6" y="482.08" font-size="8.14" fill="#333" textLength="8.0" lengthAdjust="spacingAndGlyphs" stroke="#333" stroke-width="0.22">39</text>
<text x="590.8" y="482.08" font-size="8.14" fill="#303030" textLength="21.5" lengthAdjust="spacingAndGlyphs" stroke="#303030" stroke-width="0.22">4.7448</text>
<text x="621.8" y="482.08" font-size="8.14" fill="#303030" textLength="40.2" lengthAdjust="spacingAndGlyphs" stroke="#303030" stroke-width="0.22">6.5116e-007</text>
<text x="692.8" y="482.08" font-size="8.14" fill="#303030" textLength="21.5" lengthAdjust="spacingAndGlyphs" stroke="#303030" stroke-width="0.22">373.72</text>
<text x="764.9" y="482.08" font-size="8.14" fill="#303030" textLength="21.5" lengthAdjust="spacingAndGlyphs" stroke="#303030" stroke-width="0.22">10.015</text>
<line x1="588.50" y1="497.02" x2="800.00" y2="497.02" stroke="#f7f7f6" stroke-width="1.0"/>
<line x1="575.30" y1="496.52" x2="588.50" y2="496.52" stroke="#9c9c9c" stroke-width="0.9"/>
<text x="575.6" y="494.03" font-size="8.14" fill="#333" textLength="8.0" lengthAdjust="spacingAndGlyphs" stroke="#333" stroke-width="0.22">40</text>
<text x="590.8" y="494.03" font-size="8.14" fill="#303030" textLength="21.5" lengthAdjust="spacingAndGlyphs" stroke="#303030" stroke-width="0.22">4.8334</text>
<text x="621.8" y="494.03" font-size="8.14" fill="#303030" textLength="40.2" lengthAdjust="spacingAndGlyphs" stroke="#303030" stroke-width="0.22">4.0406e-007</text>
<text x="692.8" y="494.03" font-size="8.14" fill="#303030" textLength="21.5" lengthAdjust="spacingAndGlyphs" stroke="#303030" stroke-width="0.22">318.04</text>
<text x="764.9" y="494.03" font-size="8.14" fill="#303030" textLength="21.5" lengthAdjust="spacingAndGlyphs" stroke="#303030" stroke-width="0.22">10.141</text>
<line x1="588.50" y1="508.98" x2="800.00" y2="508.98" stroke="#f7f7f6" stroke-width="1.0"/>
<line x1="575.30" y1="508.48" x2="588.50" y2="508.48" stroke="#9c9c9c" stroke-width="0.9"/>
<text x="575.6" y="505.98" font-size="8.14" fill="#333" textLength="8.0" lengthAdjust="spacingAndGlyphs" stroke="#333" stroke-width="0.22">41</text>
<text x="590.8" y="505.98" font-size="8.14" fill="#303030" textLength="21.5" lengthAdjust="spacingAndGlyphs" stroke="#303030" stroke-width="0.22">4.9167</text>
<text x="621.8" y="505.98" font-size="8.14" fill="#303030" textLength="40.2" lengthAdjust="spacingAndGlyphs" stroke="#303030" stroke-width="0.22">1.8998e-006</text>
<text x="692.8" y="505.98" font-size="8.14" fill="#303030" textLength="21.5" lengthAdjust="spacingAndGlyphs" stroke="#303030" stroke-width="0.22">252.31</text>
<text x="764.9" y="505.98" font-size="8.14" fill="#303030" textLength="21.5" lengthAdjust="spacingAndGlyphs" stroke="#303030" stroke-width="0.22">10.026</text>
<line x1="588.50" y1="520.93" x2="800.00" y2="520.93" stroke="#f7f7f6" stroke-width="1.0"/>
<line x1="575.30" y1="520.43" x2="588.50" y2="520.43" stroke="#9c9c9c" stroke-width="0.9"/>
<text x="575.6" y="517.93" font-size="8.14" fill="#333" textLength="8.0" lengthAdjust="spacingAndGlyphs" stroke="#333" stroke-width="0.22">42</text>
<text x="590.8" y="517.93" font-size="8.14" fill="#303030" textLength="5.6" lengthAdjust="spacingAndGlyphs" stroke="#303030" stroke-width="0.22">5.</text>
<text x="621.8" y="517.93" font-size="8.14" fill="#303030" textLength="40.2" lengthAdjust="spacingAndGlyphs" stroke="#303030" stroke-width="0.22">3.6847e-007</text>
<text x="692.8" y="517.93" font-size="8.14" fill="#303030" textLength="21.5" lengthAdjust="spacingAndGlyphs" stroke="#303030" stroke-width="0.22">488.17</text>
<text x="764.9" y="517.93" font-size="8.14" fill="#303030" textLength="21.5" lengthAdjust="spacingAndGlyphs" stroke="#303030" stroke-width="0.22">9.8269</text>
<line x1="588.50" y1="532.88" x2="800.00" y2="532.88" stroke="#f7f7f6" stroke-width="1.0"/>
<line x1="575.30" y1="532.38" x2="588.50" y2="532.38" stroke="#9c9c9c" stroke-width="0.9"/>
<text x="575.6" y="529.88" font-size="8.14" fill="#333" textLength="8.0" lengthAdjust="spacingAndGlyphs" stroke="#333" stroke-width="0.22">43</text>
<text x="590.8" y="529.88" font-size="8.14" fill="#303030" textLength="9.6" lengthAdjust="spacingAndGlyphs" stroke="#303030" stroke-width="0.22">5.2</text>
<text x="621.8" y="529.88" font-size="8.14" fill="#303030" textLength="32.2" lengthAdjust="spacingAndGlyphs" stroke="#303030" stroke-width="0.22">1.28e-007</text>
<text x="692.8" y="529.88" font-size="8.14" fill="#303030" textLength="21.5" lengthAdjust="spacingAndGlyphs" stroke="#303030" stroke-width="0.22">366.35</text>
<text x="764.9" y="529.88" font-size="8.14" fill="#303030" textLength="21.5" lengthAdjust="spacingAndGlyphs" stroke="#303030" stroke-width="0.22">9.2771</text>
<line x1="588.50" y1="544.82" x2="800.00" y2="544.82" stroke="#f7f7f6" stroke-width="1.0"/>
<line x1="575.30" y1="544.32" x2="588.50" y2="544.32" stroke="#9c9c9c" stroke-width="0.9"/>
<line x1="588.50" y1="27.20" x2="588.50" y2="531.00" stroke="#9c9c9c" stroke-width="1.0"/>
<line x1="619.60" y1="27.20" x2="619.60" y2="531.00" stroke="#f7f7f6" stroke-width="1.2"/>
<line x1="690.60" y1="27.20" x2="690.60" y2="531.00" stroke="#f7f7f6" stroke-width="1.2"/>
<line x1="762.60" y1="27.20" x2="762.60" y2="531.00" stroke="#f7f7f6" stroke-width="1.2"/>
<rect x="0.00" y="366.60" width="572.50" height="164.40" fill="#f0f0f0"/>
<line x1="0.00" y1="367.40" x2="572.50" y2="367.40" stroke="#fbfbfb" stroke-width="1.6"/>
<line x1="0.00" y1="369.20" x2="572.50" y2="369.20" stroke="#dcdce2" stroke-width="1.0"/>
<text x="0.2" y="378.94" font-size="8.58" fill="#555" textLength="20.0" lengthAdjust="spacingAndGlyphs" stroke="#555" stroke-width="0.22">Graph</text>
<rect x="24" y="373.4" width="500" height="5" fill="url(#grip)"/>
<path d="M526.6 374.4 h6 l-3 3.4z" fill="#333"/>
<path d="M538.6 372 v5.6 h3.2 v-5.6 z M537.4 377.6 h5.6 M540.2 377.6 v3" fill="none" stroke="#333" stroke-width="0.9"/>
<rect x="548.20" y="372.60" width="6.20" height="5.80" fill="none" stroke="#333" stroke-width="1"/>
<line x1="548.20" y1="373.00" x2="554.40" y2="373.00" stroke="#333" stroke-width="1.6"/>
<path d="M559.2 372.8 l5 5.4 M564.2 372.8 l-5 5.4" fill="none" stroke="#222" stroke-width="1.1"/>
<rect x="0.00" y="382.20" width="572.50" height="18.60" fill="#f0f0f0"/>
<rect x="2" y="385" width="3" height="13" fill="url(#grip2)"/>
<text x="13.6" y="394.54" font-size="8.58" fill="#333" textLength="36.4" lengthAdjust="spacingAndGlyphs" stroke="#333" stroke-width="0.22">Animation</text>
<rect x="57.00" y="387.00" width="1.60" height="8.80" fill="#8c8c8c"/>
<path d="M64.8 387.2 v8.4 l-5.4 -4.2z" fill="#b0b0b0"/>
<path d="M72.2 386.8 v9.2 l6 -4.6z" fill="#d39a12"/>
<rect x="82.60" y="384.40" width="14.20" height="14.20" fill="#dcebfa" stroke="#6aa6e8" stroke-width="0.9"/>
<rect x="86.00" y="387.60" width="7.60" height="7.60" fill="#cf9c1c" stroke="#8a6a10" stroke-width="0.8"/>
<path d="M100.6 387.2 v8.4 l5.4 -4.2z" fill="#b0b0b0"/>
<rect x="107.20" y="387.00" width="1.60" height="8.80" fill="#7a7a7a"/>
<line x1="113.20" y1="385.00" x2="113.20" y2="398.00" stroke="#d8d8d8" stroke-width="1"/>
<rect x="115.80" y="384.40" width="14.40" height="14.20" fill="#dcebfa" stroke="#6aa6e8" stroke-width="0.9"/>
<rect x="118.40" y="386.60" width="9.00" height="6.80" fill="#7fe07f" stroke="#2a8a2a" stroke-width="0.8"/>
<line x1="121.40" y1="386.60" x2="121.40" y2="393.40" stroke="#2a8a2a" stroke-width="0.8"/>
<line x1="124.40" y1="386.60" x2="124.40" y2="393.40" stroke="#2a8a2a" stroke-width="0.8"/>
<line x1="118.20" y1="395.60" x2="127.80" y2="395.60" stroke="#e02020" stroke-width="1.2" stroke-dasharray="2.4 1"/>
<rect x="133.60" y="386.60" width="8.60" height="6.80" fill="#8cc4f0" stroke="#3a78b8" stroke-width="0.8"/>
<line x1="136.40" y1="386.60" x2="136.40" y2="393.40" stroke="#3a78b8" stroke-width="0.8"/>
<line x1="139.40" y1="386.60" x2="139.40" y2="393.40" stroke="#3a78b8" stroke-width="0.8"/>
<line x1="133.20" y1="395.60" x2="142.80" y2="395.60" stroke="#e02020" stroke-width="1.2" stroke-dasharray="2.4 1"/>
<line x1="147.00" y1="385.00" x2="147.00" y2="398.00" stroke="#d8d8d8" stroke-width="1"/>
<rect x="149.60" y="384.60" width="65.20" height="13.80" fill="#fff" stroke="#d6d6d6" stroke-width="0.8"/>
<text x="151.8" y="394.54" font-size="8.58" fill="#333" textLength="34.6" lengthAdjust="spacingAndGlyphs" stroke="#333" stroke-width="0.22">20 Frames</text>
<path d="M207.4 390.4 h4.6 l-2.3 2.6z" fill="#333"/>
<rect x="215.80" y="384.60" width="65.60" height="13.80" fill="#fff" stroke="#d6d6d6" stroke-width="0.8"/>
<text x="218.0" y="394.54" font-size="8.58" fill="#333" textLength="42.0" lengthAdjust="spacingAndGlyphs" stroke="#333" stroke-width="0.22">2 Sec (Auto)</text>
<path d="M274.2 390.4 h4.6 l-2.3 2.6z" fill="#333"/>
<rect x="288.60" y="386.60" width="9.20" height="7.00" fill="#555" stroke="#333" stroke-width="0.6"/>
<path d="M289.6 391.5 q2.4 -4 4.6 -1 t3 -1.4" fill="none" stroke="#e04040" stroke-width="1.0"/>
<rect x="293.00" y="391.40" width="4.80" height="4.60" fill="#5aa0e8" stroke="#cfe4fa" stroke-width="0.6"/>
<line x1="302.00" y1="385.00" x2="302.00" y2="398.00" stroke="#d8d8d8" stroke-width="1"/>
<circle cx="310.6" cy="390.4" r="3.5" fill="#f4f4f4" stroke="#8a8a8a" stroke-width="1"/>
<line x1="313.20" y1="393.20" x2="316.00" y2="396.20" stroke="#8a8a8a" stroke-width="1.4"/>
<line x1="321.20" y1="386.40" x2="331.00" y2="386.40" stroke="#e81818" stroke-width="1.3" stroke-dasharray="1.6 0.5"/>
<line x1="321.20" y1="388.15" x2="331.00" y2="388.15" stroke="#e81818" stroke-width="1.3" stroke-dasharray="1.6 0.5"/>
<line x1="321.20" y1="389.90" x2="331.00" y2="389.90" stroke="#20c020" stroke-width="1.3" stroke-dasharray="1.6 0.5"/>
<line x1="321.20" y1="391.65" x2="331.00" y2="391.65" stroke="#20c020" stroke-width="1.3" stroke-dasharray="1.6 0.5"/>
<line x1="321.20" y1="393.40" x2="331.00" y2="393.40" stroke="#2020e8" stroke-width="1.3" stroke-dasharray="1.6 0.5"/>
<line x1="321.20" y1="395.15" x2="331.00" y2="395.15" stroke="#2020e8" stroke-width="1.3" stroke-dasharray="1.6 0.5"/>
<path d="M336.4 392 l5 -3.6 l4.6 1.2 l-0.4 3.4 l-4.8 1.6 v1.4 h-4.4z" fill="#9a9a9a"/>
<line x1="349.60" y1="385.00" x2="349.60" y2="398.00" stroke="#d8d8d8" stroke-width="1"/>
<rect x="354.60" y="387.40" width="9.00" height="2.20" fill="#7c7c7c"/>
<rect x="355.80" y="390.40" width="7.00" height="1.40" fill="#9a9a9a"/>
<rect x="354.60" y="392.60" width="9.00" height="2.40" fill="#7c7c7c"/>
<rect x="369.20" y="387.40" width="9.00" height="2.20" fill="#7c7c7c"/>
<rect x="370.40" y="390.40" width="7.00" height="1.40" fill="#9a9a9a"/>
<rect x="369.20" y="392.60" width="9.00" height="2.40" fill="#7c7c7c"/>
<path d="M376.4 393.4 l2.6 2.8" fill="none" stroke="#7c7c7c" stroke-width="1.2"/>
<line x1="383.20" y1="385.00" x2="383.20" y2="398.00" stroke="#d8d8d8" stroke-width="1"/>
<path d="M388.6 386.4 v9.6 M388.6 389.6 h4 M388.6 391.6 h8" fill="none" stroke="#bdbdbd" stroke-width="1.0"/>
<rect x="400.80" y="384.60" width="38.60" height="13.80" fill="#f0f0f0" stroke="#d2d2d2" stroke-width="0.8"/>
<text x="402.8" y="394.54" font-size="8.58" fill="#a9a9a9" textLength="28.2" lengthAdjust="spacingAndGlyphs" stroke="#a9a9a9" stroke-width="0.22">3 Cycles</text>
<path d="M440.8 393.6 h4.2 l-2.1 2.4z" fill="#333"/>
<rect x="0.00" y="400.60" width="571.40" height="131.00" fill="#ffffff"/>
<line x1="148.25" y1="417.00" x2="148.25" y2="484.00" stroke="#e6e6e6" stroke-width="0.9"/>
<line x1="229.50" y1="417.00" x2="229.50" y2="484.00" stroke="#e6e6e6" stroke-width="0.9"/>
<line x1="310.75" y1="417.00" x2="310.75" y2="484.00" stroke="#e6e6e6" stroke-width="0.9"/>
<line x1="392.00" y1="417.00" x2="392.00" y2="484.00" stroke="#e6e6e6" stroke-width="0.9"/>
<line x1="473.25" y1="417.00" x2="473.25" y2="484.00" stroke="#e6e6e6" stroke-width="0.9"/>
<line x1="67.00" y1="417.00" x2="554.50" y2="417.00" stroke="#c9c9c9" stroke-width="0.9"/>
<line x1="66.60" y1="417.00" x2="66.60" y2="478.75" stroke="#dadada" stroke-width="0.9"/>
<line x1="60.20" y1="417.00" x2="67.00" y2="417.00" stroke="#b8b8b8" stroke-width="0.9"/>
<line x1="60.20" y1="431.80" x2="67.00" y2="431.80" stroke="#b8b8b8" stroke-width="0.9"/>
<line x1="60.20" y1="455.28" x2="67.00" y2="455.28" stroke="#b8b8b8" stroke-width="0.9"/>
<line x1="60.20" y1="478.75" x2="67.00" y2="478.75" stroke="#b8b8b8" stroke-width="0.9"/>
<line x1="67.00" y1="478.75" x2="554.50" y2="478.75" stroke="#b8b8b8" stroke-width="0.9"/>
<line x1="67.00" y1="478.75" x2="67.00" y2="484.00" stroke="#c4c4c4" stroke-width="0.9"/>
<line x1="148.25" y1="478.75" x2="148.25" y2="484.00" stroke="#c4c4c4" stroke-width="0.9"/>
<line x1="229.50" y1="478.75" x2="229.50" y2="484.00" stroke="#c4c4c4" stroke-width="0.9"/>
<line x1="310.75" y1="478.75" x2="310.75" y2="484.00" stroke="#c4c4c4" stroke-width="0.9"/>
<line x1="392.00" y1="478.75" x2="392.00" y2="484.00" stroke="#c4c4c4" stroke-width="0.9"/>
<line x1="473.25" y1="478.75" x2="473.25" y2="484.00" stroke="#c4c4c4" stroke-width="0.9"/>
<line x1="554.50" y1="478.75" x2="554.50" y2="484.00" stroke="#c4c4c4" stroke-width="0.9"/>
<text x="58.2" y="420.30" font-size="7.92" fill="#333" textLength="17.6" lengthAdjust="spacingAndGlyphs" text-anchor="end" stroke="#333" stroke-width="0.22">526.1</text>
<text x="58.2" y="434.90" font-size="7.92" fill="#333" textLength="14.0" lengthAdjust="spacingAndGlyphs" text-anchor="end" stroke="#333" stroke-width="0.22">400.</text>
<text x="58.2" y="458.30" font-size="7.92" fill="#333" textLength="14.0" lengthAdjust="spacingAndGlyphs" text-anchor="end" stroke="#333" stroke-width="0.22">200.</text>
<text x="58.8" y="482.30" font-size="7.92" fill="#333" textLength="32.4" lengthAdjust="spacingAndGlyphs" text-anchor="end" stroke="#333" stroke-width="0.22">1.4114e-9</text>
<text transform="translate(18.2 446) rotate(-90)" text-anchor="middle" font-size="7.6" font-weight="bold" fill="#222" textLength="24.4" lengthAdjust="spacingAndGlyphs">[MPa]</text>
<text x="64.6" y="492.30" font-size="7.92" fill="#333" textLength="5.4" lengthAdjust="spacingAndGlyphs" stroke="#333" stroke-width="0.22">0.</text>
<text x="146.8" y="492.30" font-size="7.92" fill="#333" textLength="5.4" lengthAdjust="spacingAndGlyphs" stroke="#333" stroke-width="0.22">1.</text>
<text x="228.1" y="492.30" font-size="7.92" fill="#333" textLength="5.4" lengthAdjust="spacingAndGlyphs" stroke="#333" stroke-width="0.22">2.</text>
<text x="309.4" y="492.30" font-size="7.92" fill="#333" textLength="5.4" lengthAdjust="spacingAndGlyphs" stroke="#333" stroke-width="0.22">3.</text>
<text x="390.6" y="492.30" font-size="7.92" fill="#333" textLength="5.4" lengthAdjust="spacingAndGlyphs" stroke="#333" stroke-width="0.22">4.</text>
<text x="471.9" y="492.30" font-size="7.92" fill="#333" textLength="5.4" lengthAdjust="spacingAndGlyphs" stroke="#333" stroke-width="0.22">5.</text>
<text x="548.8" y="492.30" font-size="7.92" fill="#333" textLength="5.4" lengthAdjust="spacingAndGlyphs" stroke="#333" stroke-width="0.22">6.</text>
<text x="98.0" y="499.42" font-size="7.7" fill="#3a3a3a" stroke="#3a3a3a" stroke-width="0.22"></text>
<text x="307.4" y="508.46" font-size="8.36" fill="#222" textLength="9.0" lengthAdjust="spacingAndGlyphs" font-weight="bold">[s]</text>
<polyline points="83.2,468.9 87.3,467.6 91.4,466.5 97.5,445.3 106.6,443.6 120.3,438.7 134.0,441.5 148.2,422.3 164.5,451.4 168.6,432.5 172.6,419.1 178.7,424.6 187.9,438.1 201.6,425.4 215.3,422.9 229.5,447.2 245.8,430.4 249.8,423.0 253.9,422.5 260.0,425.6 269.1,429.9 282.8,438.9 296.5,421.8 310.8,444.3 327.0,417.0 331.1,419.6 335.1,428.2 341.2,438.1 350.4,425.6 364.1,424.1 377.8,446.7 392.0,445.4 408.2,427.7 412.3,437.8 416.4,435.2 422.5,419.2 431.6,437.7 445.3,420.8 452.5,434.9 459.7,441.4 466.5,449.1 473.2,421.5 489.5,435.8 493.6,431.8 497.6,422.5 503.7,431.8 512.9,418.3 526.6,438.7 533.8,441.8 541.0,449.5 547.7,425.8 554.5,422.0" fill="none" stroke="#3aa53a" stroke-width="0.9"/>
<rect x="82.25" y="467.90" width="2.00" height="2.00" fill="#147814"/>
<rect x="86.31" y="466.56" width="2.00" height="2.00" fill="#147814"/>
<rect x="90.38" y="465.54" width="2.00" height="2.00" fill="#147814"/>
<rect x="96.47" y="444.31" width="2.00" height="2.00" fill="#147814"/>
<rect x="105.61" y="442.59" width="2.00" height="2.00" fill="#147814"/>
<rect x="119.32" y="437.74" width="2.00" height="2.00" fill="#147814"/>
<rect x="133.03" y="440.54" width="2.00" height="2.00" fill="#147814"/>
<rect x="147.25" y="421.34" width="2.00" height="2.00" fill="#147814"/>
<rect x="163.50" y="450.41" width="2.00" height="2.00" fill="#147814"/>
<rect x="167.56" y="431.52" width="2.00" height="2.00" fill="#147814"/>
<rect x="171.62" y="418.06" width="2.00" height="2.00" fill="#147814"/>
<rect x="177.72" y="423.63" width="2.00" height="2.00" fill="#147814"/>
<rect x="186.86" y="437.10" width="2.00" height="2.00" fill="#147814"/>
<rect x="200.57" y="424.41" width="2.00" height="2.00" fill="#147814"/>
<rect x="214.28" y="421.85" width="2.00" height="2.00" fill="#147814"/>
<rect x="228.50" y="446.24" width="2.00" height="2.00" fill="#147814"/>
<rect x="244.75" y="429.35" width="2.00" height="2.00" fill="#147814"/>
<rect x="248.81" y="422.02" width="2.00" height="2.00" fill="#147814"/>
<rect x="252.87" y="421.45" width="2.00" height="2.00" fill="#147814"/>
<rect x="258.97" y="424.61" width="2.00" height="2.00" fill="#147814"/>
<rect x="268.11" y="428.94" width="2.00" height="2.00" fill="#147814"/>
<rect x="281.82" y="437.93" width="2.00" height="2.00" fill="#147814"/>
<rect x="295.53" y="420.79" width="2.00" height="2.00" fill="#147814"/>
<rect x="309.75" y="443.28" width="2.00" height="2.00" fill="#147814"/>
<rect x="326.00" y="416.00" width="2.00" height="2.00" fill="#147814"/>
<rect x="330.06" y="418.64" width="2.00" height="2.00" fill="#147814"/>
<rect x="334.12" y="427.20" width="2.00" height="2.00" fill="#147814"/>
<rect x="340.22" y="437.12" width="2.00" height="2.00" fill="#147814"/>
<rect x="349.36" y="424.60" width="2.00" height="2.00" fill="#147814"/>
<rect x="363.07" y="423.07" width="2.00" height="2.00" fill="#147814"/>
<rect x="376.78" y="445.73" width="2.00" height="2.00" fill="#147814"/>
<rect x="391.00" y="444.44" width="2.00" height="2.00" fill="#147814"/>
<rect x="407.25" y="426.75" width="2.00" height="2.00" fill="#147814"/>
<rect x="411.31" y="436.75" width="2.00" height="2.00" fill="#147814"/>
<rect x="415.38" y="434.20" width="2.00" height="2.00" fill="#147814"/>
<rect x="421.47" y="418.16" width="2.00" height="2.00" fill="#147814"/>
<rect x="430.61" y="436.70" width="2.00" height="2.00" fill="#147814"/>
<rect x="444.32" y="419.84" width="2.00" height="2.00" fill="#147814"/>
<rect x="451.51" y="433.89" width="2.00" height="2.00" fill="#147814"/>
<rect x="458.71" y="440.42" width="2.00" height="2.00" fill="#147814"/>
<rect x="465.48" y="448.14" width="2.00" height="2.00" fill="#147814"/>
<rect x="472.25" y="420.45" width="2.00" height="2.00" fill="#147814"/>
<rect x="488.50" y="434.75" width="2.00" height="2.00" fill="#147814"/>
<rect x="492.56" y="430.80" width="2.00" height="2.00" fill="#147814"/>
<rect x="496.62" y="421.53" width="2.00" height="2.00" fill="#147814"/>
<rect x="502.72" y="430.80" width="2.00" height="2.00" fill="#147814"/>
<rect x="511.86" y="417.30" width="2.00" height="2.00" fill="#147814"/>
<rect x="525.57" y="437.73" width="2.00" height="2.00" fill="#147814"/>
<rect x="532.76" y="440.78" width="2.00" height="2.00" fill="#147814"/>
<rect x="539.96" y="448.52" width="2.00" height="2.00" fill="#147814"/>
<rect x="546.73" y="424.81" width="2.00" height="2.00" fill="#147814"/>
<rect x="553.50" y="420.97" width="2.00" height="2.00" fill="#147814"/>
<line x1="83.25" y1="479.25" x2="554.50" y2="479.25" stroke="#e0283c" stroke-width="1.1"/>
<polyline points="83.2,478.7 87.3,478.7 91.4,478.6 97.5,478.5 106.6,478.4 120.3,478.2 134.0,478.0 148.2,477.8 164.5,477.8 168.6,477.8 172.6,477.8 178.7,477.8 187.9,477.9 201.6,477.9 215.3,477.8 229.5,477.8 245.8,477.8 249.8,477.8 253.9,477.8 260.0,477.9 269.1,477.9 282.8,477.9 296.5,477.8 310.8,477.8 327.0,477.8 331.1,477.8 335.1,477.9 341.2,477.9 350.4,477.9 364.1,477.8 377.8,477.8 392.0,477.8 408.2,477.8 412.3,477.9 416.4,477.9 422.5,477.9 431.6,477.9 445.3,477.8 452.5,477.8 459.7,477.8 466.5,477.8 473.2,477.8 489.5,477.9 493.6,477.9 497.6,477.9 503.7,477.9 512.9,477.9 526.6,477.8 533.8,477.8 541.0,477.8 547.7,477.8 554.5,477.8" fill="none" stroke="#5a5af0" stroke-width="1.0"/>
<rect x="82.15" y="477.55" width="2.20" height="2.20" fill="#1010d8" rx="0.7"/>
<rect x="86.21" y="477.55" width="2.20" height="2.20" fill="#1010d8" rx="0.7"/>
<rect x="90.28" y="477.55" width="2.20" height="2.20" fill="#1010d8" rx="0.7"/>
<rect x="96.37" y="477.55" width="2.20" height="2.20" fill="#1010d8" rx="0.7"/>
<rect x="105.51" y="477.55" width="2.20" height="2.20" fill="#1010d8" rx="0.7"/>
<rect x="119.22" y="477.55" width="2.20" height="2.20" fill="#1010d8" rx="0.7"/>
<rect x="132.93" y="477.55" width="2.20" height="2.20" fill="#1010d8" rx="0.7"/>
<rect x="147.15" y="477.55" width="2.20" height="2.20" fill="#1010d8" rx="0.7"/>
<rect x="163.40" y="477.55" width="2.20" height="2.20" fill="#1010d8" rx="0.7"/>
<rect x="167.46" y="477.55" width="2.20" height="2.20" fill="#1010d8" rx="0.7"/>
<rect x="171.53" y="477.55" width="2.20" height="2.20" fill="#1010d8" rx="0.7"/>
<rect x="177.62" y="477.55" width="2.20" height="2.20" fill="#1010d8" rx="0.7"/>
<rect x="186.76" y="477.55" width="2.20" height="2.20" fill="#1010d8" rx="0.7"/>
<rect x="200.47" y="477.55" width="2.20" height="2.20" fill="#1010d8" rx="0.7"/>
<rect x="214.18" y="477.55" width="2.20" height="2.20" fill="#1010d8" rx="0.7"/>
<rect x="228.40" y="477.55" width="2.20" height="2.20" fill="#1010d8" rx="0.7"/>
<rect x="244.65" y="477.55" width="2.20" height="2.20" fill="#1010d8" rx="0.7"/>
<rect x="248.71" y="477.55" width="2.20" height="2.20" fill="#1010d8" rx="0.7"/>
<rect x="252.77" y="477.55" width="2.20" height="2.20" fill="#1010d8" rx="0.7"/>
<rect x="258.87" y="477.55" width="2.20" height="2.20" fill="#1010d8" rx="0.7"/>
<rect x="268.01" y="477.55" width="2.20" height="2.20" fill="#1010d8" rx="0.7"/>
<rect x="281.72" y="477.55" width="2.20" height="2.20" fill="#1010d8" rx="0.7"/>
<rect x="295.43" y="477.55" width="2.20" height="2.20" fill="#1010d8" rx="0.7"/>
<rect x="309.65" y="477.55" width="2.20" height="2.20" fill="#1010d8" rx="0.7"/>
<rect x="325.90" y="477.55" width="2.20" height="2.20" fill="#1010d8" rx="0.7"/>
<rect x="329.96" y="477.55" width="2.20" height="2.20" fill="#1010d8" rx="0.7"/>
<rect x="334.02" y="477.55" width="2.20" height="2.20" fill="#1010d8" rx="0.7"/>
<rect x="340.12" y="477.55" width="2.20" height="2.20" fill="#1010d8" rx="0.7"/>
<rect x="349.26" y="477.55" width="2.20" height="2.20" fill="#1010d8" rx="0.7"/>
<rect x="362.97" y="477.55" width="2.20" height="2.20" fill="#1010d8" rx="0.7"/>
<rect x="376.68" y="477.55" width="2.20" height="2.20" fill="#1010d8" rx="0.7"/>
<rect x="390.90" y="477.55" width="2.20" height="2.20" fill="#1010d8" rx="0.7"/>
<rect x="407.15" y="477.55" width="2.20" height="2.20" fill="#1010d8" rx="0.7"/>
<rect x="411.21" y="477.55" width="2.20" height="2.20" fill="#1010d8" rx="0.7"/>
<rect x="415.27" y="477.55" width="2.20" height="2.20" fill="#1010d8" rx="0.7"/>
<rect x="421.37" y="477.55" width="2.20" height="2.20" fill="#1010d8" rx="0.7"/>
<rect x="430.51" y="477.55" width="2.20" height="2.20" fill="#1010d8" rx="0.7"/>
<rect x="444.22" y="477.55" width="2.20" height="2.20" fill="#1010d8" rx="0.7"/>
<rect x="451.41" y="477.55" width="2.20" height="2.20" fill="#1010d8" rx="0.7"/>
<rect x="458.61" y="477.55" width="2.20" height="2.20" fill="#1010d8" rx="0.7"/>
<rect x="465.38" y="477.55" width="2.20" height="2.20" fill="#1010d8" rx="0.7"/>
<rect x="472.15" y="477.55" width="2.20" height="2.20" fill="#1010d8" rx="0.7"/>
<rect x="488.40" y="477.55" width="2.20" height="2.20" fill="#1010d8" rx="0.7"/>
<rect x="492.46" y="477.55" width="2.20" height="2.20" fill="#1010d8" rx="0.7"/>
<rect x="496.52" y="477.55" width="2.20" height="2.20" fill="#1010d8" rx="0.7"/>
<rect x="502.62" y="477.55" width="2.20" height="2.20" fill="#1010d8" rx="0.7"/>
<rect x="511.76" y="477.55" width="2.20" height="2.20" fill="#1010d8" rx="0.7"/>
<rect x="525.47" y="477.55" width="2.20" height="2.20" fill="#1010d8" rx="0.7"/>
<rect x="532.66" y="477.55" width="2.20" height="2.20" fill="#1010d8" rx="0.7"/>
<rect x="539.86" y="477.55" width="2.20" height="2.20" fill="#1010d8" rx="0.7"/>
<rect x="546.63" y="477.55" width="2.20" height="2.20" fill="#1010d8" rx="0.7"/>
<rect x="553.40" y="477.55" width="2.20" height="2.20" fill="#1010d8" rx="0.7"/>
<rect x="553.80" y="412.60" width="2.00" height="66.15" fill="#000"/>
<text x="548.8" y="410.38" font-size="8.14" fill="#111" textLength="5.6" lengthAdjust="spacingAndGlyphs" font-weight="bold">6.</text>
<rect x="66.40" y="515.20" width="488.70" height="9.00" fill="#f0f0f0" stroke="#a6a6a6" stroke-width="0.9"/>
<line x1="67.00" y1="523.40" x2="554.50" y2="523.40" stroke="#c8c8c8" stroke-width="0.8"/>
<line x1="148.25" y1="515.20" x2="148.25" y2="524.20" stroke="#a6a6a6" stroke-width="0.9"/>
<line x1="229.50" y1="515.20" x2="229.50" y2="524.20" stroke="#a6a6a6" stroke-width="0.9"/>
<line x1="310.75" y1="515.20" x2="310.75" y2="524.20" stroke="#a6a6a6" stroke-width="0.9"/>
<line x1="392.00" y1="515.20" x2="392.00" y2="524.20" stroke="#a6a6a6" stroke-width="0.9"/>
<line x1="473.25" y1="515.20" x2="473.25" y2="524.20" stroke="#a6a6a6" stroke-width="0.9"/>
<text x="107.6" y="522.50" font-size="7.92" fill="#333" text-anchor="middle" stroke="#333" stroke-width="0.22">1</text>
<text x="188.9" y="522.50" font-size="7.92" fill="#333" text-anchor="middle" stroke="#333" stroke-width="0.22">2</text>
<text x="270.1" y="522.50" font-size="7.92" fill="#333" text-anchor="middle" stroke="#333" stroke-width="0.22">3</text>
<text x="351.4" y="522.50" font-size="7.92" fill="#333" text-anchor="middle" stroke="#333" stroke-width="0.22">4</text>
<text x="432.6" y="522.50" font-size="7.92" fill="#333" text-anchor="middle" stroke="#333" stroke-width="0.22">5</text>
<text x="513.9" y="522.50" font-size="7.92" fill="#333" text-anchor="middle" stroke="#333" stroke-width="0.22">6</text>
</svg>
</body></html>
